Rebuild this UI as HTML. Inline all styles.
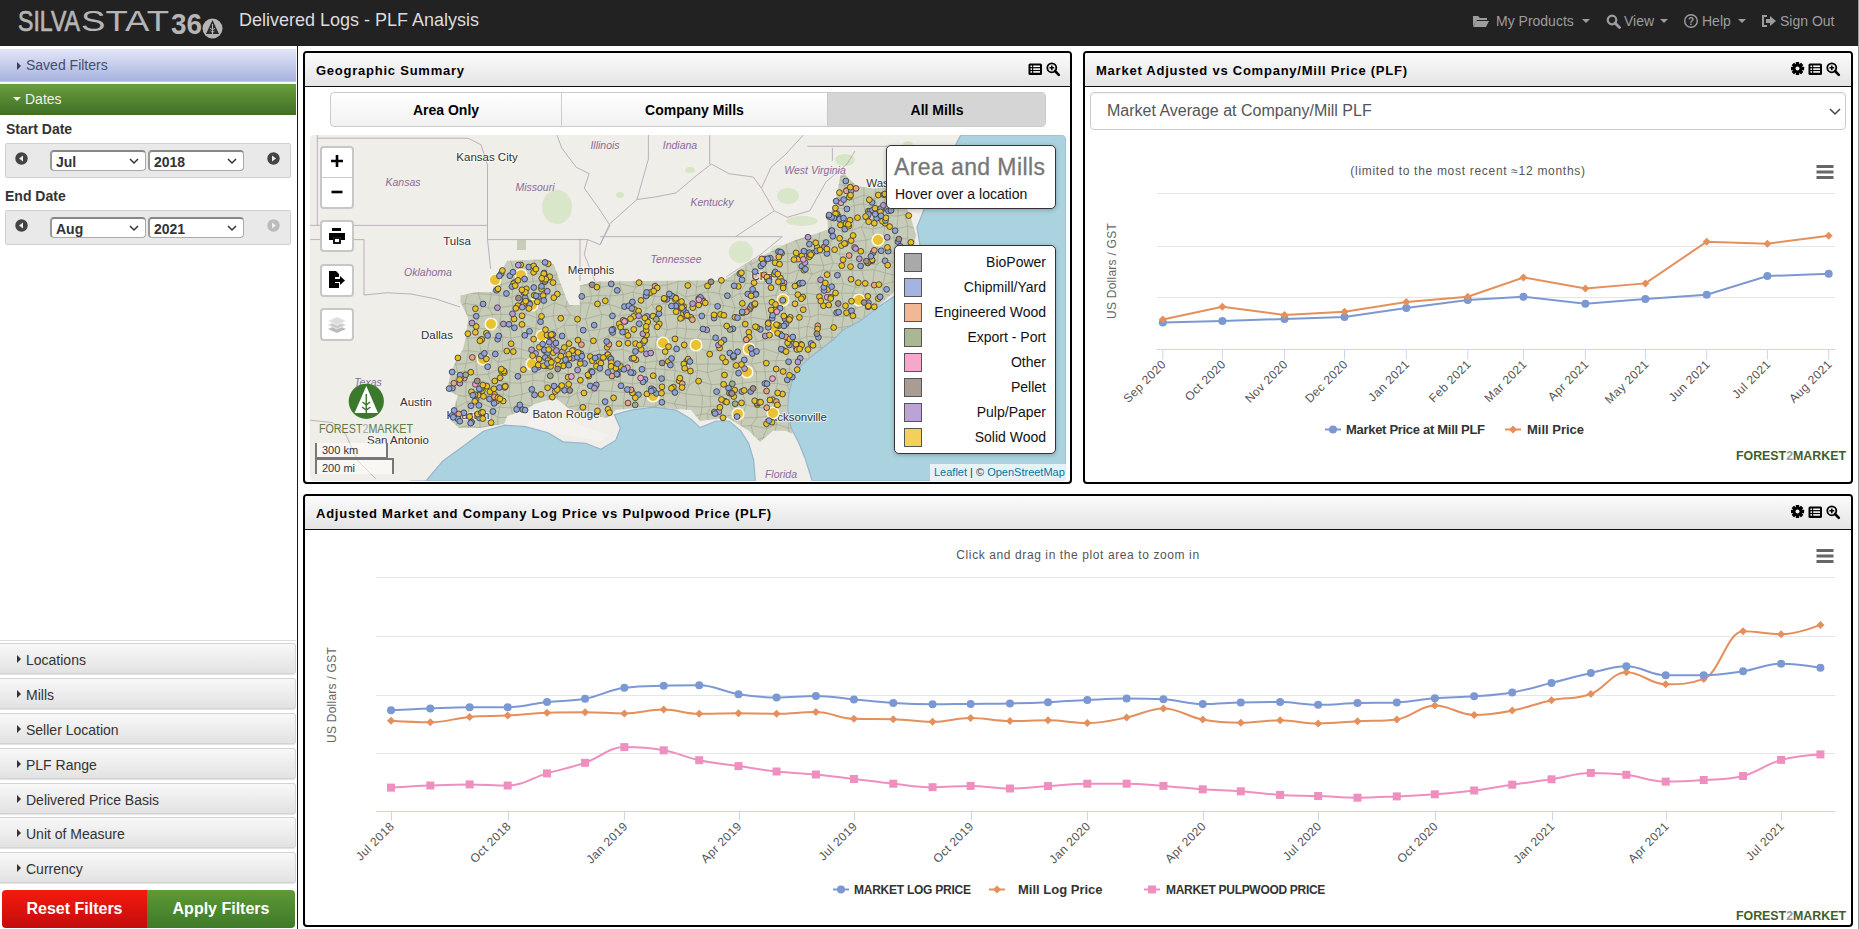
<!DOCTYPE html><html><head><meta charset="utf-8"><style>
*{box-sizing:border-box}
html,body{margin:0;padding:0;width:1859px;height:929px;overflow:hidden;background:#fff;font-family:"Liberation Sans", sans-serif;}
.a{position:absolute}
.nav{left:0;top:0;width:1858px;height:46px;background:#222;}
.rline{left:1858px;top:0;width:1px;height:929px;background:#999}
.navt{color:#9d9d9d;font-size:14px;white-space:nowrap}
.sbp{left:0;width:296px;height:31px;border-radius:0 3px 3px 0;background:linear-gradient(#f8f8f8,#e2e2e2);border:1px solid #d4d4d4;border-left:none;box-shadow:0 1px 1px rgba(0,0,0,.12);font-size:14px;color:#333}
.sbp span{position:absolute;left:26px;top:8px;white-space:nowrap}
.tri{position:absolute;left:17px;top:11px;width:0;height:0;border-top:4px solid transparent;border-bottom:4px solid transparent;border-left:4px solid #333}
.panel{border:2px solid #000;border-radius:4px;background:#fff;overflow:hidden}
.ph{position:absolute;left:0;top:0;right:0;height:34px;background:linear-gradient(#fbfbfb,#e4e4e4);border-bottom:1px solid #111}
.ph span{position:absolute;left:11px;top:10px;font-size:13px;font-weight:bold;letter-spacing:0.76px;color:#000;white-space:nowrap}
.sel{background:#fff;border-radius:4px;border:1px solid #aaa;border-top:2px solid #888;border-left:2px solid #999;font-size:14px;font-weight:bold;color:#333}
</style></head><body>
<div class="a nav"></div><div class="a rline"></div><svg class="a" style="left:0;top:0" width="240" height="46">
<text x="18" y="31" font-family="Liberation Sans" font-size="29" fill="#b5b5b5" stroke="#b5b5b5" stroke-width="0.7" textLength="62" lengthAdjust="spacingAndGlyphs">SILVA</text>
<text x="81" y="31" font-family="Liberation Sans" font-size="29" fill="#b5b5b5" textLength="88" lengthAdjust="spacingAndGlyphs" style="font-weight:normal">STAT</text>
<text x="171" y="34" font-family="Liberation Sans" font-weight="bold" font-size="29" fill="#b5b5b5" textLength="31" lengthAdjust="spacingAndGlyphs">36</text>
<circle cx="212.5" cy="28.5" r="10" fill="#b5b5b5"/>
<path d="M212.5 20 L219 34 L206 34 Z" fill="#2a2a2a"/>
<path d="M212.5 24 V34 M210 28 L212.5 30 L215 28 M210.5 31 L212.5 32.5 L214.5 31" stroke="#b5b5b5" stroke-width="1" fill="none"/>
</svg><div class="a" style="left:239px;top:10px;font-size:18px;color:#dcdcdc;white-space:nowrap">Delivered Logs - PLF Analysis</div><svg class="a" style="left:1472px;top:14px" width="18" height="14"><path d="M1 2 h5 l2 2 h7 v2 H5 L1 12 Z" fill="#9d9d9d"/><path d="M4 7 H17 L14 13 H1 Z" fill="#9d9d9d"/></svg><div class="a navt" style="left:1496px;top:13px">My Products</div><div class="a" style="left:1582px;top:19px;width:0;height:0;border-left:4px solid transparent;border-right:4px solid transparent;border-top:4px solid #9d9d9d"></div><svg class="a" style="left:1606px;top:14px" width="15" height="15"><circle cx="6" cy="6" r="4.3" stroke="#9d9d9d" stroke-width="2.2" fill="none"/><path d="M9 9 L13.5 13.5" stroke="#9d9d9d" stroke-width="2.8" stroke-linecap="round"/></svg><div class="a navt" style="left:1624px;top:13px">View</div><div class="a" style="left:1660px;top:19px;width:0;height:0;border-left:4px solid transparent;border-right:4px solid transparent;border-top:4px solid #9d9d9d"></div><svg class="a" style="left:1683px;top:13px" width="16" height="16"><circle cx="8" cy="8" r="6.3" stroke="#9d9d9d" stroke-width="1.4" fill="none"/><text x="8" y="12" text-anchor="middle" font-family="Liberation Sans" font-weight="bold" font-size="10" fill="#9d9d9d">?</text></svg><div class="a navt" style="left:1702px;top:13px">Help</div><div class="a" style="left:1738px;top:19px;width:0;height:0;border-left:4px solid transparent;border-right:4px solid transparent;border-top:4px solid #9d9d9d"></div><svg class="a" style="left:1761px;top:14px" width="16" height="14"><path d="M6 2 H2 V12 H6" stroke="#9d9d9d" stroke-width="2" fill="none"/><path d="M5 5 H9 V2 L15 7 L9 12 V9 H5 Z" fill="#9d9d9d"/></svg><div class="a navt" style="left:1780px;top:13px">Sign Out</div><div class="a" style="left:297px;top:46px;width:1px;height:883px;background:#1a1a1a"></div><div class="a sbp" style="top:49px;height:32px;border-radius:0;background:linear-gradient(#e3e6f8,#a7b3df);border:none;box-shadow:0 1px 1px rgba(0,0,0,.2)"><div class="tri" style="top:13px;border-left-color:#3a3f5a"></div><span style="color:#474d6a;top:8px">Saved Filters</span></div><div class="a sbp" style="top:84px;height:31px;border-radius:0;background:linear-gradient(#6a9e3c,#3f6f25);border:none;box-shadow:none"><div style="position:absolute;left:13px;top:13px;width:0;height:0;border-left:4px solid transparent;border-right:4px solid transparent;border-top:4px solid #eee"></div><span style="color:#f0f0f0;left:25px;top:7px">Dates</span></div><div class="a" style="left:6px;top:121px;font-size:14px;font-weight:bold;color:#333">Start Date</div><div class="a" style="left:5px;top:188px;font-size:14px;font-weight:bold;color:#333">End Date</div><div class="a" style="left:5px;top:143px;width:286px;height:35px;background:#e9e9e9;border:1px solid #d0d0d0;border-radius:2px"></div><svg class="a" style="left:15px;top:152px" width="14" height="14"><circle cx="6.5" cy="6.5" r="6.2" fill="#444"/><path d="M8 3.5 L4 6.5 L8 9.5 Z" fill="#eee"/></svg><svg class="a" style="left:267px;top:152px" width="14" height="14"><circle cx="6.5" cy="6.5" r="6.2" fill="#444"/><path d="M5 3.5 L9 6.5 L5 9.5 Z" fill="#eee"/></svg><div class="a sel" style="left:50px;top:150px;width:96px;height:21px"><span style="position:absolute;left:4px;top:2px">Jul</span><svg style="position:absolute;right:6px;top:6px" width="10" height="7"><path d="M1 1 L5 5 L9 1" stroke="#333" stroke-width="1.5" fill="none"/></svg></div><div class="a sel" style="left:148px;top:150px;width:96px;height:21px"><span style="position:absolute;left:4px;top:2px">2018</span><svg style="position:absolute;right:6px;top:6px" width="10" height="7"><path d="M1 1 L5 5 L9 1" stroke="#333" stroke-width="1.5" fill="none"/></svg></div><div class="a" style="left:5px;top:210px;width:286px;height:35px;background:#e9e9e9;border:1px solid #d0d0d0;border-radius:2px"></div><svg class="a" style="left:15px;top:219px" width="14" height="14"><circle cx="6.5" cy="6.5" r="6.2" fill="#444"/><path d="M8 3.5 L4 6.5 L8 9.5 Z" fill="#eee"/></svg><svg class="a" style="left:267px;top:219px" width="14" height="14"><circle cx="6.5" cy="6.5" r="6.2" fill="#bbb"/><path d="M5 3.5 L9 6.5 L5 9.5 Z" fill="#eee"/></svg><div class="a sel" style="left:50px;top:217px;width:96px;height:21px"><span style="position:absolute;left:4px;top:2px">Aug</span><svg style="position:absolute;right:6px;top:6px" width="10" height="7"><path d="M1 1 L5 5 L9 1" stroke="#333" stroke-width="1.5" fill="none"/></svg></div><div class="a sel" style="left:148px;top:217px;width:96px;height:21px"><span style="position:absolute;left:4px;top:2px">2021</span><svg style="position:absolute;right:6px;top:6px" width="10" height="7"><path d="M1 1 L5 5 L9 1" stroke="#333" stroke-width="1.5" fill="none"/></svg></div><div class="a" style="left:0;top:640px;width:296px;height:1px;background:#ddd"></div><div class="a sbp" style="top:643px"><div class="tri"></div><span>Locations</span></div><div class="a sbp" style="top:678px"><div class="tri"></div><span>Mills</span></div><div class="a sbp" style="top:713px"><div class="tri"></div><span>Seller Location</span></div><div class="a sbp" style="top:748px"><div class="tri"></div><span>PLF Range</span></div><div class="a sbp" style="top:783px"><div class="tri"></div><span>Delivered Price Basis</span></div><div class="a sbp" style="top:817px"><div class="tri"></div><span>Unit of Measure</span></div><div class="a sbp" style="top:852px"><div class="tri"></div><span>Currency</span></div><div class="a" style="left:2px;top:890px;width:145px;height:38px;border-radius:4px 0 0 4px;background:linear-gradient(#f51a0e,#c20c0c);color:#fff;font-weight:bold;font-size:16px;text-align:center;line-height:38px">Reset Filters</div><div class="a" style="left:147px;top:890px;width:148px;height:38px;border-radius:0 4px 4px 0;background:linear-gradient(#5e9a35,#3e7a28);color:#fff;font-weight:bold;font-size:16px;text-align:center;line-height:38px">Apply Filters</div><div class="a panel" style="left:303px;top:51px;width:769px;height:433px"><div class="ph"><span>Geographic Summary</span></div></div><div class="a panel" style="left:1083px;top:51px;width:770px;height:433px"><div class="ph"><span>Market Adjusted vs Company/Mill Price (PLF)</span></div></div><div class="a panel" style="left:303px;top:494px;width:1550px;height:433px"><div class="ph"><span>Adjusted Market and Company Log Price vs Pulpwood Price (PLF)</span></div></div><svg class="a" style="left:1028px;top:63px" width="15" height="13"><rect x="0.5" y="0.5" width="13.5" height="11.5" rx="1.5" fill="#000"/><rect x="2.5" y="2.5" width="1.6" height="1.6" fill="#fff"/><rect x="2.5" y="5.3" width="1.6" height="1.6" fill="#fff"/><rect x="2.5" y="8.1" width="1.6" height="1.6" fill="#fff"/><rect x="5.2" y="2.5" width="6.8" height="1.6" fill="#fff"/><rect x="5.2" y="5.3" width="6.8" height="1.6" fill="#fff"/><rect x="5.2" y="8.1" width="6.8" height="1.6" fill="#fff"/></svg><svg class="a" style="left:1045.5px;top:62px" width="15" height="15"><circle cx="5.8" cy="5.8" r="4.5" stroke="#000" stroke-width="1.8" fill="none"/><path d="M9 9 L12.8 12.8" stroke="#000" stroke-width="2.6" stroke-linecap="round"/><path d="M5.8 3.4 V8.2 M3.4 5.8 H8.2" stroke="#000" stroke-width="1.5"/></svg><svg class="a" style="left:1791px;top:62px" width="14" height="14"><rect x="4.8" y="-0.09999999999999964" width="3.4" height="4" rx="0.5" transform="rotate(0 6.5 6.5)" fill="#000"/><rect x="4.8" y="-0.09999999999999964" width="3.4" height="4" rx="0.5" transform="rotate(45 6.5 6.5)" fill="#000"/><rect x="4.8" y="-0.09999999999999964" width="3.4" height="4" rx="0.5" transform="rotate(90 6.5 6.5)" fill="#000"/><rect x="4.8" y="-0.09999999999999964" width="3.4" height="4" rx="0.5" transform="rotate(135 6.5 6.5)" fill="#000"/><rect x="4.8" y="-0.09999999999999964" width="3.4" height="4" rx="0.5" transform="rotate(180 6.5 6.5)" fill="#000"/><rect x="4.8" y="-0.09999999999999964" width="3.4" height="4" rx="0.5" transform="rotate(225 6.5 6.5)" fill="#000"/><rect x="4.8" y="-0.09999999999999964" width="3.4" height="4" rx="0.5" transform="rotate(270 6.5 6.5)" fill="#000"/><rect x="4.8" y="-0.09999999999999964" width="3.4" height="4" rx="0.5" transform="rotate(315 6.5 6.5)" fill="#000"/><circle cx="6.5" cy="6.5" r="4.7" fill="#000"/><circle cx="6.5" cy="6.5" r="2" fill="#f2f2f2"/></svg><svg class="a" style="left:1808px;top:63px" width="15" height="13"><rect x="0.5" y="0.5" width="13.5" height="11.5" rx="1.5" fill="#000"/><rect x="2.5" y="2.5" width="1.6" height="1.6" fill="#fff"/><rect x="2.5" y="5.3" width="1.6" height="1.6" fill="#fff"/><rect x="2.5" y="8.1" width="1.6" height="1.6" fill="#fff"/><rect x="5.2" y="2.5" width="6.8" height="1.6" fill="#fff"/><rect x="5.2" y="5.3" width="6.8" height="1.6" fill="#fff"/><rect x="5.2" y="8.1" width="6.8" height="1.6" fill="#fff"/></svg><svg class="a" style="left:1825.5px;top:62px" width="15" height="15"><circle cx="5.8" cy="5.8" r="4.5" stroke="#000" stroke-width="1.8" fill="none"/><path d="M9 9 L12.8 12.8" stroke="#000" stroke-width="2.6" stroke-linecap="round"/><path d="M5.8 3.4 V8.2 M3.4 5.8 H8.2" stroke="#000" stroke-width="1.5"/></svg><svg class="a" style="left:1791px;top:505px" width="14" height="14"><rect x="4.8" y="-0.09999999999999964" width="3.4" height="4" rx="0.5" transform="rotate(0 6.5 6.5)" fill="#000"/><rect x="4.8" y="-0.09999999999999964" width="3.4" height="4" rx="0.5" transform="rotate(45 6.5 6.5)" fill="#000"/><rect x="4.8" y="-0.09999999999999964" width="3.4" height="4" rx="0.5" transform="rotate(90 6.5 6.5)" fill="#000"/><rect x="4.8" y="-0.09999999999999964" width="3.4" height="4" rx="0.5" transform="rotate(135 6.5 6.5)" fill="#000"/><rect x="4.8" y="-0.09999999999999964" width="3.4" height="4" rx="0.5" transform="rotate(180 6.5 6.5)" fill="#000"/><rect x="4.8" y="-0.09999999999999964" width="3.4" height="4" rx="0.5" transform="rotate(225 6.5 6.5)" fill="#000"/><rect x="4.8" y="-0.09999999999999964" width="3.4" height="4" rx="0.5" transform="rotate(270 6.5 6.5)" fill="#000"/><rect x="4.8" y="-0.09999999999999964" width="3.4" height="4" rx="0.5" transform="rotate(315 6.5 6.5)" fill="#000"/><circle cx="6.5" cy="6.5" r="4.7" fill="#000"/><circle cx="6.5" cy="6.5" r="2" fill="#f2f2f2"/></svg><svg class="a" style="left:1808px;top:506px" width="15" height="13"><rect x="0.5" y="0.5" width="13.5" height="11.5" rx="1.5" fill="#000"/><rect x="2.5" y="2.5" width="1.6" height="1.6" fill="#fff"/><rect x="2.5" y="5.3" width="1.6" height="1.6" fill="#fff"/><rect x="2.5" y="8.1" width="1.6" height="1.6" fill="#fff"/><rect x="5.2" y="2.5" width="6.8" height="1.6" fill="#fff"/><rect x="5.2" y="5.3" width="6.8" height="1.6" fill="#fff"/><rect x="5.2" y="8.1" width="6.8" height="1.6" fill="#fff"/></svg><svg class="a" style="left:1825.5px;top:505px" width="15" height="15"><circle cx="5.8" cy="5.8" r="4.5" stroke="#000" stroke-width="1.8" fill="none"/><path d="M9 9 L12.8 12.8" stroke="#000" stroke-width="2.6" stroke-linecap="round"/><path d="M5.8 3.4 V8.2 M3.4 5.8 H8.2" stroke="#000" stroke-width="1.5"/></svg><div class="a" style="left:330px;top:92px;width:716px;height:35px;border:1px solid #ccc;border-radius:4px;overflow:hidden;background:linear-gradient(#fff,#f1f1f1)"><div class="a" style="left:230px;top:0;width:1px;height:35px;background:#ccc"></div><div class="a" style="left:496px;top:0;width:220px;height:35px;background:#d5d5d5;border-left:1px solid #c8c8c8"></div><div class="a" style="left:0;top:9px;width:230px;text-align:center;font-size:14px;font-weight:bold;color:#000">Area Only</div><div class="a" style="left:231px;top:9px;width:265px;text-align:center;font-size:14px;font-weight:bold;color:#000">Company Mills</div><div class="a" style="left:496px;top:9px;width:220px;text-align:center;font-size:14px;font-weight:bold;color:#000">All Mills</div></div><div class="a" style="left:1090px;top:92px;width:756px;height:38px;border:1px solid #ccc;border-radius:4px;background:#fff;box-shadow:inset 0 1px 1px rgba(0,0,0,.06)"><div class="a" style="left:16px;top:9px;font-size:16px;color:#555;white-space:nowrap">Market Average at Company/Mill PLF</div><svg class="a" style="left:738px;top:15px" width="12" height="8"><path d="M1 1 L6 6 L11 1" stroke="#444" stroke-width="1.5" fill="none"/></svg></div><svg class="a" style="left:310px;top:135px;border-radius:4px" width="756" height="346"><defs><clipPath id="mc"><rect x="0" y="0" width="756" height="346" rx="4"/></clipPath><clipPath id="gc"><path d="M 150.5 160.8 L 166.0 156.9 L 181.6 156.9 L 186.8 143.9 L 197.1 125.8 L 230.9 124.5 L 243.8 129.6 L 249.0 143.9 L 256.8 164.7 L 259.4 169.9 L 269.8 169.9 L 269.8 150.4 L 285.3 146.5 L 412.8 145.2 L 420.3 141.5 L 440.7 126.6 L 478.0 108.0 L 490.0 103.6 L 507.5 98.3 L 518.3 94.2 L 517.0 83.4 L 525.0 70.0 L 530.4 40.4 L 534.4 39.0 L 546.5 51.0 L 565.4 53.8 L 576.0 51.0 L 590.0 62.0 L 600.0 80.0 L 606.0 100.0 L 600.0 130.0 L 592.0 150.0 L 571.0 168.5 L 548.7 187.0 L 533.0 195.0 L 523.3 204.8 L 503.8 219.4 L 490.8 230.8 L 482.7 243.8 L 478.6 260.0 L 477.8 273.0 L 481.0 292.6 L 482.7 299.0 L 476.0 295.8 L 463.0 295.8 L 450.0 307.0 L 438.8 295.8 L 417.6 282.8 L 390.0 286.0 L 381.0 275.0 L 336.0 272.0 L 305.8 275.0 L 298.0 282.7 L 283.0 281.0 L 260.6 275.0 L 245.6 263.0 L 224.5 269.0 L 215.4 275.0 L 197.4 281.0 L 194.0 288.7 L 170.0 293.0 L 149.2 293.0 L 140.0 285.0 L 147.9 260.6 L 137.5 255.5 L 140.1 239.9 L 145.3 226.9 L 153.0 214.0 L 155.6 203.6 L 158.2 182.8 L 150.5 167.3 Z"/></clipPath></defs><g clip-path="url(#mc)"><rect width="756" height="346" fill="#f0eee8"/><ellipse cx="535" cy="25" rx="10" ry="6" fill="#d3e3c0" opacity="0.9"/><ellipse cx="598" cy="12" rx="6" ry="6" fill="#d3e3c0" opacity="0.9"/><ellipse cx="380" cy="35" rx="5" ry="3" fill="#d3e3c0" opacity="0.9"/><ellipse cx="310" cy="60" rx="4" ry="3" fill="#d3e3c0" opacity="0.9"/><ellipse cx="247" cy="72" rx="15" ry="17" fill="#d3e3c0" opacity="0.8"/><ellipse cx="478" cy="61" rx="11" ry="8" fill="#d3e3c0" opacity="0.8"/><ellipse cx="431" cy="117" rx="12" ry="11" fill="#d3e3c0" opacity="0.8"/><ellipse cx="492" cy="86" rx="16" ry="5" fill="#d3e3c0" opacity="0.8"/><ellipse cx="470" cy="115" rx="10" ry="5" fill="#d3e3c0" opacity="0.8"/><path d="M 7.3 0 V 90.4" stroke="#b7a8b8" stroke-width="0.9" fill="none"/><path d="M 7.3 3.2 H 158 L 171 9.7 L 177.5 29.9 V 104.6 L 180.7 134" stroke="#b7a8b8" stroke-width="0.9" fill="none"/><path d="M 0 90.4 H 177.5" stroke="#b7a8b8" stroke-width="0.9" fill="none"/><path d="M 0 104.6 H 54 V 160" stroke="#b7a8b8" stroke-width="0.9" fill="none"/><path d="M 177.5 104.6 H 277.6 L 274.3 119.4 L 285 146" stroke="#b7a8b8" stroke-width="0.9" fill="none"/><path d="M 246.9 0 L 251.7 12.9 L 266.3 32.3 L 279.2 38.7 L 274.3 53.3 L 287.2 71 L 300 90.4 L 290 109.7 L 277.6 104.6" stroke="#b7a8b8" stroke-width="0.9" fill="none"/><path d="M 338.4 0 V 24 L 327 64.5 L 299.7 88.8 L 290 109.7" stroke="#b7a8b8" stroke-width="0.9" fill="none"/><path d="M 399.7 0 V 29" stroke="#b7a8b8" stroke-width="0.9" fill="none"/><path d="M 327 64.5 L 345 62 L 365.8 58 L 386.8 40.3 L 401.3 29 L 419 38.7 L 443.3 42 L 451.4 53.2 L 461 32.3 L 475.6 19.4 L 493.3 0" stroke="#b7a8b8" stroke-width="0.9" fill="none"/><path d="M 451.4 53.2 L 464.3 75.8 L 477.2 82.3 L 499.8 75.8 L 516 46.8 L 537 29 L 545 16" stroke="#b7a8b8" stroke-width="0.9" fill="none"/><path d="M 290 101.7 H 472.3" stroke="#b7a8b8" stroke-width="0.9" fill="none"/><path d="M 425.5 101.7 L 464.3 75.8" stroke="#b7a8b8" stroke-width="0.9" fill="none"/><path d="M 472.3 101.7 L 450 120 L 416 142" stroke="#b7a8b8" stroke-width="0.9" fill="none"/><path d="M 497.4 11.3 H 640" stroke="#b7a8b8" stroke-width="0.9" fill="none"/><path d="M 522.4 13 V 25.8" stroke="#b7a8b8" stroke-width="0.9" fill="none"/><path d="M 0 285.2 L 22.7 287.6 L 35.8 299.5 L 47.8 325.8 L 65.7 343.7" stroke="#b7a8b8" stroke-width="0.9" fill="none"/><path d="M 54 160 Q 100 152 150 172" stroke="#b7a8b8" stroke-width="0.9" fill="none"/><path d="M 412 145 V 283" stroke="#b7a8b8" stroke-width="0.9" fill="none"/><path d="M 337 146 V 272" stroke="#b7a8b8" stroke-width="0.9" fill="none"/><path d="M 270 104 V 146" stroke="#b7a8b8" stroke-width="0.9" fill="none"/><path d="M 150.5 160.8 L 166.0 156.9 L 181.6 156.9 L 186.8 143.9 L 197.1 125.8 L 230.9 124.5 L 243.8 129.6 L 249.0 143.9 L 256.8 164.7 L 259.4 169.9 L 269.8 169.9 L 269.8 150.4 L 285.3 146.5 L 412.8 145.2 L 420.3 141.5 L 440.7 126.6 L 478.0 108.0 L 490.0 103.6 L 507.5 98.3 L 518.3 94.2 L 517.0 83.4 L 525.0 70.0 L 530.4 40.4 L 534.4 39.0 L 546.5 51.0 L 565.4 53.8 L 576.0 51.0 L 590.0 62.0 L 600.0 80.0 L 606.0 100.0 L 600.0 130.0 L 592.0 150.0 L 571.0 168.5 L 548.7 187.0 L 533.0 195.0 L 523.3 204.8 L 503.8 219.4 L 490.8 230.8 L 482.7 243.8 L 478.6 260.0 L 477.8 273.0 L 481.0 292.6 L 482.7 299.0 L 476.0 295.8 L 463.0 295.8 L 450.0 307.0 L 438.8 295.8 L 417.6 282.8 L 390.0 286.0 L 381.0 275.0 L 336.0 272.0 L 305.8 275.0 L 298.0 282.7 L 283.0 281.0 L 260.6 275.0 L 245.6 263.0 L 224.5 269.0 L 215.4 275.0 L 197.4 281.0 L 194.0 288.7 L 170.0 293.0 L 149.2 293.0 L 140.0 285.0 L 147.9 260.6 L 137.5 255.5 L 140.1 239.9 L 145.3 226.9 L 153.0 214.0 L 155.6 203.6 L 158.2 182.8 L 150.5 167.3 Z" fill="#c6ccb8"/><g clip-path="url(#gc)" stroke="#a2a893" stroke-width="0.7" fill="none"><path d="M 125.9 29.7 L 137.7 30.4 L 144.5 30.4 L 155.7 30.4 L 172.2 31.3 L 181.7 28.6 L 191.9 24.8 L 200.1 26.8 L 212.3 31.3 L 222.7 27.6 L 233.8 24.6 L 246.9 30.1 L 256.2 25.3 L 269.7 30.2 L 281.2 24.5 L 290.7 25.5 L 301.2 27.2 L 314.4 25.3 L 322.4 26.8 L 331.4 25.9 L 345.2 27.9 L 354.6 29.6 L 369.9 28.8 L 376.5 26.4 L 386.7 27.4 L 402.9 28.4 L 409.7 26.5 L 423.6 29.9 L 430.5 26.7 L 440.7 25.3 L 453.4 27.4 L 465.0 27.6 L 475.0 29.2 L 488.0 29.8 L 500.6 27.2 L 506.5 27.8 L 519.4 26.9 L 533.4 25.6 L 544.2 31.4 L 551.2 24.6 L 568.5 28.9 L 577.8 26.6 L 586.7 29.4 L 600.3 27.8 L 607.6 26.3 L 617.7 26.6 L 629.5 28.4 L 645.2 25.5"/><path d="M 127.1 42.1 L 132.6 41.0 L 145.6 38.7 L 161.1 38.8 L 169.8 38.0 L 176.8 37.3 L 188.3 38.2 L 202.8 37.9 L 212.0 37.7 L 226.3 37.1 L 235.6 41.3 L 245.1 35.6 L 258.3 39.4 L 270.1 40.5 L 280.9 38.0 L 288.2 41.9 L 304.0 37.6 L 313.8 37.3 L 320.2 36.0 L 335.4 40.6 L 342.3 36.9 L 355.2 36.7 L 367.3 36.7 L 380.3 39.0 L 392.0 38.3 L 399.2 39.5 L 410.8 39.7 L 421.8 42.1 L 434.9 42.1 L 443.3 35.6 L 458.1 39.7 L 467.2 41.9 L 478.4 37.4 L 486.9 37.2 L 498.8 40.3 L 512.7 42.2 L 521.1 36.6 L 529.1 42.4 L 541.8 39.3 L 552.9 40.6 L 564.9 38.7 L 577.6 36.3 L 587.0 38.3 L 599.7 41.4 L 607.3 35.7 L 618.1 37.0 L 628.6 42.1 L 639.2 35.7"/><path d="M 126.7 53.0 L 135.1 50.5 L 150.5 52.5 L 159.3 51.5 L 171.8 46.5 L 179.7 52.9 L 188.0 46.9 L 201.2 47.5 L 212.8 48.5 L 221.3 48.7 L 236.6 47.2 L 246.1 50.6 L 258.5 49.1 L 271.0 53.2 L 275.6 48.3 L 293.1 46.7 L 301.4 52.3 L 310.6 46.5 L 324.5 49.4 L 331.2 53.5 L 348.3 52.5 L 359.2 52.8 L 366.5 49.6 L 376.9 50.0 L 387.3 50.8 L 398.5 46.8 L 412.0 47.4 L 421.6 50.5 L 432.0 48.2 L 445.2 48.9 L 456.8 53.0 L 467.4 48.0 L 473.5 50.6 L 487.1 53.4 L 497.4 50.7 L 511.3 51.3 L 520.2 47.0 L 535.0 51.1 L 543.3 48.5 L 553.7 51.0 L 565.9 50.8 L 576.3 48.9 L 587.6 48.4 L 598.1 50.6 L 607.3 48.9 L 616.7 49.7 L 631.1 47.7 L 641.0 46.7"/><path d="M 121.7 60.8 L 132.6 57.8 L 150.3 60.7 L 159.6 58.7 L 166.3 61.5 L 182.7 61.3 L 191.5 62.7 L 204.3 62.0 L 214.6 62.5 L 221.1 62.9 L 235.2 58.7 L 243.8 60.2 L 259.7 59.0 L 268.9 64.3 L 278.7 60.2 L 287.8 60.5 L 298.5 60.0 L 313.8 61.1 L 325.6 57.9 L 331.4 58.7 L 343.2 63.3 L 357.3 59.0 L 369.3 59.1 L 380.4 61.5 L 388.6 61.8 L 398.3 60.7 L 410.6 61.4 L 425.4 59.8 L 431.6 61.9 L 442.1 59.7 L 451.7 63.7 L 469.4 58.8 L 479.0 61.6 L 485.8 63.8 L 496.9 59.0 L 510.7 64.5 L 522.1 63.6 L 528.9 62.4 L 543.2 64.3 L 554.1 60.0 L 564.9 63.8 L 575.8 59.5 L 588.3 60.5 L 597.7 59.2 L 608.7 61.2 L 621.9 58.0 L 634.4 61.8 L 639.6 64.1"/><path d="M 128.1 73.0 L 133.8 75.2 L 146.9 73.6 L 160.0 72.6 L 169.8 69.5 L 176.6 73.9 L 193.6 69.4 L 204.1 71.5 L 210.6 70.2 L 226.2 70.7 L 236.5 71.6 L 244.7 68.7 L 255.6 70.4 L 265.2 69.2 L 279.1 68.9 L 288.4 73.8 L 301.0 72.5 L 314.8 71.8 L 321.6 69.8 L 331.1 71.6 L 346.1 71.2 L 355.3 71.7 L 365.6 74.2 L 377.7 73.1 L 388.7 70.5 L 397.3 69.1 L 408.9 69.2 L 423.5 75.2 L 432.9 69.3 L 443.9 70.0 L 452.2 69.9 L 466.6 73.0 L 480.4 70.1 L 490.7 73.3 L 499.3 71.5 L 512.0 71.7 L 523.8 72.7 L 535.4 74.0 L 544.4 70.4 L 553.4 68.8 L 567.7 74.0 L 573.0 71.5 L 588.4 70.9 L 600.1 74.9 L 612.4 69.3 L 619.9 69.4 L 629.0 74.4 L 640.3 73.5"/><path d="M 127.8 80.3 L 133.9 84.8 L 146.9 81.5 L 159.2 82.4 L 169.9 85.7 L 179.5 83.5 L 190.5 81.7 L 204.5 83.1 L 214.2 86.1 L 221.4 80.1 L 238.1 85.1 L 244.7 82.2 L 257.9 85.8 L 265.0 80.9 L 277.0 86.3 L 289.1 84.9 L 299.0 82.7 L 309.6 81.0 L 326.1 85.0 L 334.8 85.5 L 346.0 81.1 L 355.4 79.7 L 364.0 83.3 L 378.8 82.3 L 385.7 85.2 L 398.2 82.1 L 414.0 79.6 L 419.1 84.9 L 433.2 81.4 L 446.5 82.9 L 456.7 84.8 L 464.5 85.7 L 478.6 82.5 L 486.4 84.6 L 501.8 80.5 L 510.0 86.1 L 520.2 83.4 L 533.5 82.6 L 544.3 83.8 L 557.2 84.6 L 566.6 84.5 L 574.2 80.7 L 588.0 80.9 L 594.7 79.7 L 606.4 85.8 L 622.0 85.8 L 631.9 83.9 L 640.0 79.6"/><path d="M 124.8 92.2 L 139.0 97.1 L 146.3 91.5 L 158.9 95.9 L 168.1 93.5 L 181.5 94.9 L 191.7 93.9 L 202.6 94.5 L 214.0 93.5 L 222.2 91.1 L 232.3 92.7 L 245.8 95.4 L 254.7 94.9 L 267.1 93.7 L 278.6 93.8 L 287.6 94.1 L 297.9 91.1 L 310.3 97.1 L 325.8 94.0 L 331.6 95.4 L 343.4 90.6 L 355.7 95.9 L 365.0 95.2 L 377.5 91.4 L 390.1 92.2 L 403.2 93.9 L 411.0 92.6 L 423.1 94.3 L 430.5 96.0 L 441.0 91.1 L 455.8 93.8 L 466.8 95.5 L 477.6 92.6 L 490.8 94.7 L 501.9 92.3 L 510.4 94.7 L 521.4 91.7 L 532.9 97.0 L 542.1 95.2 L 551.2 91.9 L 562.9 93.9 L 574.8 91.4 L 586.9 93.9 L 597.8 91.1 L 607.5 94.3 L 622.6 94.2 L 633.6 92.7 L 638.5 91.4"/><path d="M 125.3 105.5 L 134.9 104.0 L 146.1 108.4 L 159.0 106.5 L 167.1 103.5 L 179.9 107.9 L 194.1 104.1 L 203.7 104.3 L 216.3 101.5 L 223.5 105.5 L 237.9 104.7 L 245.3 108.4 L 258.9 103.1 L 269.3 106.7 L 276.1 103.5 L 293.3 106.4 L 299.9 102.5 L 309.9 102.1 L 320.2 104.4 L 331.2 105.6 L 346.1 105.6 L 357.4 107.5 L 367.7 102.2 L 377.6 107.7 L 389.0 105.6 L 402.4 106.7 L 407.7 103.4 L 424.0 107.5 L 430.2 104.6 L 446.7 105.5 L 456.6 104.5 L 463.5 107.3 L 475.1 105.3 L 486.0 105.8 L 497.9 102.2 L 508.7 106.1 L 521.3 105.0 L 532.0 102.0 L 542.1 107.0 L 556.0 105.1 L 563.4 102.9 L 572.7 108.3 L 583.6 102.4 L 597.6 103.9 L 607.6 107.8 L 617.5 106.5 L 629.4 105.5 L 645.2 104.7"/><path d="M 121.6 114.0 L 136.2 117.9 L 150.2 116.9 L 154.7 113.6 L 172.3 115.2 L 179.2 115.2 L 187.9 117.4 L 199.2 112.7 L 209.9 118.0 L 222.2 112.9 L 234.5 115.6 L 248.2 119.0 L 253.9 116.5 L 265.1 115.3 L 282.2 117.3 L 287.1 113.3 L 304.3 114.3 L 311.0 113.1 L 321.1 112.7 L 332.3 115.0 L 346.7 116.0 L 357.3 117.8 L 368.6 115.4 L 376.6 115.1 L 389.0 118.8 L 400.6 114.8 L 408.6 115.3 L 419.5 115.9 L 434.9 116.3 L 442.5 117.5 L 452.9 114.0 L 464.5 116.8 L 477.8 118.9 L 491.2 116.6 L 497.7 119.4 L 509.9 119.1 L 518.9 115.6 L 529.5 119.2 L 542.2 118.3 L 555.7 117.8 L 568.2 114.1 L 572.9 118.8 L 586.7 117.9 L 596.2 117.9 L 612.0 116.5 L 617.0 117.9 L 628.9 117.4 L 640.2 112.8"/><path d="M 123.5 129.9 L 133.3 128.7 L 147.0 125.9 L 157.6 128.1 L 172.2 129.9 L 182.5 124.9 L 188.6 127.9 L 199.9 123.8 L 212.4 123.8 L 225.4 123.8 L 236.9 130.1 L 247.3 128.2 L 259.3 129.7 L 268.3 126.1 L 279.1 123.9 L 291.0 126.1 L 299.4 129.0 L 311.5 127.9 L 323.5 125.5 L 330.9 128.5 L 344.5 125.6 L 358.6 129.9 L 365.7 129.5 L 378.7 127.6 L 391.0 125.6 L 399.2 125.7 L 413.9 124.1 L 422.8 128.4 L 435.6 125.7 L 440.8 129.7 L 452.3 123.8 L 467.7 125.8 L 477.7 127.0 L 485.5 124.9 L 498.0 129.4 L 513.5 130.5 L 523.4 128.0 L 533.5 130.0 L 541.6 124.7 L 551.5 129.3 L 567.2 129.3 L 575.4 124.3 L 589.2 129.4 L 598.6 130.0 L 606.2 126.1 L 618.6 129.7 L 630.8 124.9 L 643.0 125.7"/><path d="M 126.9 135.6 L 138.1 140.5 L 144.1 136.4 L 156.0 139.3 L 169.7 136.3 L 178.6 140.3 L 191.0 140.9 L 204.7 137.9 L 213.3 141.4 L 221.9 136.5 L 235.2 141.3 L 246.3 140.1 L 258.6 137.4 L 265.3 138.7 L 278.2 139.9 L 289.1 137.8 L 302.7 136.3 L 313.1 135.7 L 320.3 138.1 L 331.4 139.8 L 346.6 137.1 L 358.1 137.4 L 369.0 136.7 L 375.7 137.6 L 387.9 138.8 L 400.9 140.5 L 410.0 139.4 L 425.2 140.1 L 436.1 134.8 L 447.1 139.2 L 458.2 141.2 L 464.4 136.8 L 478.1 138.9 L 488.9 134.8 L 502.3 139.4 L 513.2 134.8 L 519.8 136.2 L 529.5 135.2 L 541.8 135.4 L 551.9 135.5 L 564.3 134.7 L 575.5 138.1 L 589.1 141.3 L 595.9 137.2 L 610.4 138.5 L 618.5 139.7 L 628.4 135.6 L 639.8 137.6"/><path d="M 127.1 146.5 L 132.8 152.1 L 149.0 151.6 L 158.9 145.8 L 172.4 149.0 L 177.0 151.4 L 191.4 149.8 L 203.8 145.5 L 213.1 148.0 L 223.1 146.2 L 235.7 146.2 L 245.0 149.7 L 256.5 149.2 L 267.1 150.3 L 278.5 149.7 L 290.6 152.3 L 303.3 149.9 L 309.5 148.9 L 326.0 152.1 L 332.9 149.6 L 345.7 150.8 L 357.1 150.1 L 368.2 146.4 L 379.6 145.8 L 386.6 152.0 L 402.0 147.6 L 411.9 145.6 L 424.3 146.0 L 435.8 148.5 L 440.9 148.5 L 453.9 148.4 L 469.3 150.1 L 476.4 147.4 L 484.5 148.1 L 496.8 148.5 L 507.0 147.9 L 521.9 149.4 L 533.3 148.5 L 545.6 152.5 L 555.7 151.2 L 562.7 150.0 L 572.9 149.3 L 584.9 146.6 L 598.8 150.9 L 607.5 148.3 L 620.0 147.2 L 631.5 151.9 L 643.5 147.9"/><path d="M 125.8 157.4 L 133.1 158.9 L 146.0 162.0 L 157.8 158.1 L 168.4 158.7 L 181.4 159.5 L 189.3 160.4 L 201.8 162.7 L 210.2 157.0 L 223.4 158.7 L 237.2 159.4 L 247.3 160.2 L 259.8 158.6 L 268.0 163.2 L 281.8 161.0 L 288.2 160.5 L 300.2 160.9 L 313.3 159.6 L 322.8 157.2 L 335.0 159.9 L 344.6 161.3 L 358.7 161.5 L 367.1 157.1 L 375.3 161.8 L 385.8 160.0 L 397.5 156.6 L 409.1 158.5 L 421.5 162.9 L 429.5 158.3 L 446.4 160.7 L 453.5 162.0 L 465.8 160.4 L 478.3 159.2 L 486.3 160.0 L 496.7 158.2 L 512.3 160.4 L 519.6 159.8 L 531.7 158.1 L 542.4 158.2 L 552.6 159.2 L 566.5 159.0 L 572.6 158.6 L 584.5 162.0 L 597.5 157.8 L 605.9 159.3 L 619.9 159.5 L 633.1 162.4 L 642.4 157.8"/><path d="M 121.5 173.6 L 136.8 173.9 L 148.9 172.4 L 154.9 168.4 L 172.4 170.9 L 178.5 173.0 L 189.3 172.8 L 202.8 170.5 L 215.8 170.9 L 225.8 171.4 L 231.9 174.3 L 244.5 168.0 L 255.5 171.7 L 271.1 168.0 L 280.0 167.8 L 288.3 171.3 L 299.2 169.3 L 312.5 173.9 L 324.9 168.3 L 336.6 173.9 L 341.9 169.3 L 355.6 168.8 L 368.0 173.9 L 380.8 168.0 L 387.4 171.2 L 400.6 169.1 L 413.8 170.6 L 425.1 172.8 L 436.4 172.5 L 442.0 169.1 L 454.9 168.7 L 467.1 169.3 L 473.8 168.7 L 485.0 171.4 L 497.8 168.7 L 508.3 168.2 L 520.3 171.9 L 533.8 173.0 L 545.7 173.5 L 555.6 169.6 L 565.7 168.6 L 577.5 173.4 L 584.8 169.7 L 597.2 171.5 L 611.3 170.2 L 617.6 171.3 L 631.5 173.1 L 642.4 167.8"/><path d="M 123.0 180.0 L 134.9 185.0 L 148.1 183.8 L 156.7 179.8 L 167.5 181.8 L 182.9 179.5 L 191.1 179.4 L 201.8 179.2 L 216.1 178.9 L 226.8 183.1 L 231.7 182.5 L 243.1 181.0 L 260.3 179.8 L 269.8 183.5 L 275.7 183.9 L 291.6 179.4 L 303.6 181.6 L 309.5 180.4 L 323.3 179.1 L 332.5 180.8 L 347.4 179.5 L 354.8 180.3 L 368.0 178.8 L 375.1 182.9 L 385.8 180.1 L 396.5 180.6 L 409.3 181.9 L 420.8 183.9 L 434.7 184.2 L 440.9 182.2 L 457.7 185.0 L 463.0 179.3 L 476.0 183.3 L 489.2 180.7 L 500.3 182.2 L 508.3 179.4 L 523.6 181.1 L 533.6 181.5 L 541.2 180.6 L 553.6 185.4 L 566.1 184.0 L 573.7 181.3 L 584.5 184.9 L 601.3 183.1 L 608.8 179.7 L 620.2 183.4 L 629.8 181.1 L 645.0 185.0"/><path d="M 128.4 195.6 L 136.3 191.7 L 146.0 194.4 L 155.9 189.7 L 166.4 193.9 L 179.8 193.3 L 189.1 192.1 L 199.6 190.6 L 211.2 189.9 L 225.8 193.5 L 234.9 195.7 L 246.6 194.8 L 253.7 190.3 L 266.6 190.3 L 278.4 195.6 L 289.9 194.4 L 303.8 190.7 L 312.0 193.3 L 326.4 193.3 L 336.6 190.4 L 341.9 189.6 L 357.3 194.9 L 367.1 192.8 L 376.5 194.1 L 392.4 195.0 L 398.1 190.9 L 410.9 190.5 L 422.2 194.2 L 429.5 191.6 L 441.8 192.6 L 451.8 192.7 L 466.6 193.7 L 478.1 192.9 L 488.6 193.2 L 497.5 191.3 L 507.5 194.7 L 521.3 193.4 L 531.9 192.3 L 543.0 190.4 L 551.4 196.1 L 567.0 193.4 L 579.1 191.7 L 585.0 191.1 L 600.4 195.3 L 610.5 192.4 L 618.9 193.8 L 633.8 191.3 L 642.5 192.8"/><path d="M 123.5 207.2 L 134.7 201.7 L 145.5 203.9 L 157.8 203.2 L 168.6 202.6 L 180.0 202.8 L 192.7 201.8 L 201.1 203.2 L 212.3 200.9 L 223.6 206.2 L 234.2 202.0 L 247.5 202.6 L 257.4 204.7 L 267.9 203.0 L 281.3 206.9 L 286.6 205.9 L 298.5 200.9 L 314.8 204.4 L 322.6 202.4 L 333.4 203.4 L 346.9 201.2 L 353.8 204.2 L 366.6 201.6 L 374.7 203.7 L 387.0 203.7 L 401.2 204.6 L 412.2 205.5 L 423.0 206.6 L 432.8 206.9 L 446.8 206.8 L 453.0 205.0 L 469.3 204.8 L 479.2 202.8 L 490.0 204.5 L 496.5 201.3 L 507.9 201.7 L 522.2 202.2 L 531.8 202.8 L 541.0 203.3 L 556.7 207.5 L 565.5 200.5 L 573.3 202.2 L 587.7 205.4 L 597.5 204.0 L 608.2 205.9 L 617.9 204.2 L 631.9 204.5 L 641.3 205.7"/><path d="M 125.3 216.2 L 133.0 212.5 L 148.9 216.3 L 158.8 215.6 L 171.0 217.3 L 177.6 215.6 L 192.5 216.1 L 204.7 212.6 L 211.3 214.4 L 225.1 218.2 L 233.4 212.9 L 249.0 213.4 L 254.8 212.8 L 269.7 217.9 L 278.1 218.5 L 289.4 215.0 L 302.7 215.4 L 313.1 214.4 L 323.4 218.3 L 337.3 212.4 L 344.7 214.6 L 358.4 214.1 L 365.4 214.6 L 375.6 213.8 L 385.7 212.4 L 398.5 216.6 L 410.8 215.3 L 423.5 218.3 L 435.9 212.5 L 443.9 217.0 L 454.0 213.6 L 468.5 218.4 L 476.0 216.8 L 489.0 215.4 L 498.6 212.0 L 510.8 212.4 L 519.2 218.0 L 531.8 218.2 L 540.3 212.5 L 552.2 212.9 L 563.4 214.3 L 578.6 213.9 L 583.8 215.6 L 600.3 216.6 L 607.6 212.0 L 618.2 217.0 L 627.9 215.5 L 642.5 216.5"/><path d="M 122.9 229.1 L 137.3 229.5 L 145.6 229.1 L 156.2 228.8 L 165.6 226.2 L 182.2 223.0 L 188.1 227.2 L 200.3 224.4 L 211.6 222.9 L 225.6 227.4 L 235.4 225.0 L 247.5 223.0 L 257.7 227.0 L 267.2 224.5 L 280.8 228.7 L 290.8 228.1 L 297.6 222.8 L 314.0 228.4 L 322.5 224.0 L 335.1 227.8 L 347.1 225.8 L 353.2 226.7 L 364.0 227.2 L 379.4 226.1 L 386.8 229.4 L 397.9 228.9 L 412.9 229.2 L 422.0 226.0 L 436.4 226.4 L 441.4 229.1 L 453.6 226.8 L 466.0 225.5 L 478.3 225.5 L 490.3 223.2 L 499.2 224.3 L 512.3 227.1 L 518.5 227.3 L 534.1 223.4 L 543.7 224.6 L 553.6 223.7 L 562.0 223.0 L 577.2 229.1 L 587.2 226.4 L 597.3 223.8 L 610.0 227.7 L 617.8 224.5 L 633.1 228.7 L 641.6 225.3"/><path d="M 126.3 240.3 L 133.6 233.8 L 148.0 237.6 L 154.5 236.3 L 167.4 240.0 L 178.1 239.2 L 188.1 234.4 L 199.6 235.5 L 209.8 240.3 L 222.4 239.2 L 236.8 235.2 L 247.8 238.2 L 258.3 238.6 L 268.0 238.4 L 276.5 239.0 L 286.9 237.0 L 303.3 237.0 L 310.6 234.3 L 323.1 239.9 L 335.6 233.5 L 345.2 233.7 L 355.0 234.5 L 365.2 235.5 L 380.5 239.4 L 387.7 235.2 L 397.3 237.6 L 411.8 233.8 L 423.1 237.4 L 431.6 234.1 L 446.6 236.9 L 455.0 236.9 L 465.8 236.1 L 479.7 233.7 L 485.3 239.6 L 500.9 235.4 L 512.6 238.6 L 519.3 236.9 L 533.2 239.2 L 545.9 240.2 L 557.0 237.5 L 568.2 238.3 L 576.9 234.9 L 587.1 239.1 L 599.6 235.5 L 605.9 235.9 L 617.0 235.6 L 630.4 239.8 L 643.6 234.8"/><path d="M 127.8 246.6 L 139.4 248.2 L 143.6 248.3 L 156.4 247.4 L 171.0 246.2 L 182.0 249.1 L 191.7 246.2 L 200.1 247.9 L 210.8 248.1 L 223.2 245.4 L 234.0 246.2 L 249.2 250.8 L 253.9 247.9 L 270.0 248.5 L 278.5 251.3 L 286.8 247.2 L 303.6 244.8 L 310.3 247.0 L 322.2 248.9 L 337.1 246.7 L 347.1 249.9 L 354.5 244.5 L 364.1 246.6 L 378.8 250.4 L 386.0 245.3 L 401.4 249.6 L 411.0 249.1 L 418.8 251.2 L 432.5 248.1 L 446.7 246.6 L 456.3 247.8 L 467.8 248.5 L 477.3 250.5 L 490.3 244.6 L 501.5 251.1 L 511.6 246.4 L 520.7 246.2 L 530.9 250.7 L 544.2 246.4 L 556.4 247.9 L 565.4 249.3 L 575.9 246.8 L 589.3 250.5 L 596.4 246.3 L 611.7 248.1 L 620.3 246.1 L 627.8 250.8 L 640.9 246.2"/><path d="M 124.0 256.7 L 135.3 257.2 L 145.3 260.2 L 155.3 261.3 L 167.4 256.6 L 176.7 260.6 L 193.6 258.9 L 198.7 262.0 L 212.3 259.2 L 221.0 256.7 L 238.4 261.4 L 247.3 261.4 L 259.3 262.2 L 266.6 257.9 L 282.5 257.0 L 288.9 255.6 L 301.6 256.3 L 314.7 257.4 L 325.9 257.8 L 336.5 260.1 L 345.9 261.3 L 353.5 258.5 L 370.0 257.5 L 375.7 258.8 L 392.5 260.7 L 399.9 261.6 L 409.8 260.3 L 420.7 259.0 L 432.7 257.7 L 447.4 257.8 L 458.1 258.6 L 463.4 262.2 L 479.7 256.9 L 490.8 259.8 L 502.0 257.1 L 509.5 258.2 L 518.7 262.2 L 535.1 256.0 L 544.8 257.9 L 554.0 262.2 L 567.6 259.9 L 575.9 259.8 L 585.8 255.8 L 599.3 260.0 L 608.4 256.4 L 617.3 261.8 L 632.3 261.2 L 639.9 261.5"/><path d="M 122.5 267.0 L 136.7 272.3 L 146.7 272.2 L 157.1 266.8 L 172.4 268.6 L 183.4 273.5 L 189.8 272.1 L 201.1 273.1 L 210.1 268.7 L 222.3 271.2 L 237.4 270.8 L 247.7 270.8 L 255.7 272.5 L 270.4 270.1 L 278.4 268.4 L 288.6 269.7 L 302.5 270.8 L 312.9 271.0 L 325.2 270.2 L 333.4 272.4 L 345.8 271.5 L 353.2 266.5 L 364.2 268.9 L 376.7 270.9 L 391.9 272.3 L 400.9 271.3 L 410.1 270.8 L 418.8 267.8 L 436.1 269.8 L 447.0 272.4 L 457.0 273.0 L 466.2 271.7 L 479.2 270.2 L 490.5 271.4 L 502.0 269.8 L 509.2 272.9 L 517.8 267.5 L 532.9 269.2 L 545.6 269.5 L 551.4 268.1 L 564.5 269.2 L 579.3 271.3 L 586.8 266.7 L 601.1 270.6 L 607.5 270.6 L 618.7 268.0 L 630.6 270.6 L 640.7 271.7"/><path d="M 123.6 281.7 L 135.7 280.5 L 148.0 283.1 L 158.8 278.2 L 169.8 280.8 L 181.4 277.8 L 187.7 282.6 L 203.3 282.2 L 210.3 281.3 L 222.5 277.9 L 234.3 278.5 L 244.0 281.1 L 258.0 284.0 L 264.9 280.4 L 278.8 279.5 L 291.1 284.0 L 301.8 279.1 L 315.2 278.3 L 320.5 277.9 L 335.2 279.9 L 347.5 281.8 L 356.3 284.2 L 370.1 278.1 L 375.3 283.7 L 391.0 279.3 L 397.1 278.8 L 411.8 282.2 L 425.0 279.4 L 431.7 282.9 L 447.0 282.6 L 455.9 281.6 L 466.3 281.6 L 480.0 279.8 L 487.1 278.3 L 501.7 280.7 L 509.6 283.1 L 522.7 280.1 L 531.8 281.3 L 544.3 282.8 L 556.5 281.6 L 568.3 284.2 L 576.1 283.2 L 588.0 280.9 L 597.9 283.7 L 611.9 282.1 L 619.3 283.4 L 633.3 279.1 L 638.8 284.0"/><path d="M 121.5 293.2 L 132.9 294.9 L 145.9 293.0 L 158.3 290.9 L 170.0 292.7 L 182.4 290.0 L 187.9 289.6 L 201.8 295.1 L 215.9 292.7 L 225.8 292.4 L 237.3 291.9 L 248.8 290.2 L 255.1 293.4 L 266.2 293.2 L 280.2 289.4 L 289.1 292.2 L 304.1 289.3 L 313.9 290.9 L 326.1 291.8 L 335.6 292.0 L 341.6 294.7 L 358.3 290.8 L 365.9 290.0 L 377.1 294.0 L 386.7 290.4 L 399.8 292.3 L 414.0 293.5 L 420.6 294.2 L 431.2 291.5 L 441.0 290.5 L 457.0 293.5 L 466.5 289.3 L 478.2 293.0 L 489.9 293.5 L 499.3 290.3 L 510.9 289.1 L 518.9 293.9 L 534.5 292.9 L 544.4 293.8 L 556.0 295.5 L 562.6 294.2 L 576.0 289.9 L 588.7 294.3 L 595.5 292.6 L 612.3 291.4 L 621.7 294.8 L 628.8 293.8 L 641.8 293.7"/><path d="M 123.9 301.7 L 132.7 303.0 L 148.7 305.3 L 158.6 306.2 L 170.7 300.3 L 181.0 306.2 L 194.2 304.3 L 199.3 304.2 L 215.5 301.0 L 220.7 299.9 L 231.8 300.7 L 249.3 303.3 L 259.4 302.8 L 265.0 301.4 L 276.7 302.7 L 291.5 306.1 L 297.9 304.3 L 309.2 303.9 L 322.6 305.9 L 335.5 303.8 L 348.4 300.9 L 359.0 300.1 L 368.3 302.7 L 381.1 306.1 L 386.0 300.7 L 397.2 304.7 L 412.5 304.4 L 420.2 304.2 L 430.2 301.2 L 445.1 305.9 L 452.9 302.4 L 463.4 304.6 L 480.4 301.9 L 487.8 301.4 L 500.8 302.1 L 508.0 303.5 L 524.4 301.0 L 534.7 301.2 L 541.9 300.6 L 555.9 303.8 L 566.0 301.9 L 577.2 301.4 L 588.6 304.4 L 601.4 301.8 L 606.0 301.9 L 620.3 301.8 L 633.6 301.1 L 639.2 303.7"/><path d="M 127.2 313.9 L 138.4 311.4 L 146.0 316.4 L 160.2 313.4 L 170.8 312.6 L 181.5 311.4 L 189.1 311.3 L 200.5 315.2 L 209.6 314.3 L 221.4 313.0 L 232.2 315.5 L 245.3 310.5 L 254.2 311.9 L 265.2 313.8 L 276.0 313.2 L 293.1 317.4 L 298.1 311.0 L 314.4 314.6 L 323.5 314.0 L 336.1 311.6 L 342.0 312.9 L 353.6 310.5 L 364.2 316.5 L 377.2 316.5 L 390.5 313.9 L 398.9 313.8 L 409.1 314.8 L 422.5 316.8 L 436.5 314.8 L 445.3 310.8 L 452.6 310.6 L 464.9 311.4 L 476.2 311.4 L 487.0 317.1 L 501.7 315.5 L 512.0 312.1 L 522.4 313.3 L 534.1 313.2 L 542.1 317.2 L 555.8 314.2 L 566.4 312.4 L 574.0 313.2 L 585.8 315.6 L 595.6 311.3 L 608.1 310.9 L 620.0 310.9 L 631.3 314.1 L 644.2 312.5"/><path d="M 123.7 324.9 L 137.6 328.1 L 149.6 326.3 L 160.2 326.0 L 169.2 323.9 L 178.5 327.9 L 194.3 326.2 L 203.6 322.6 L 212.9 325.5 L 226.5 328.1 L 237.8 322.9 L 245.2 322.7 L 254.6 322.1 L 271.4 325.3 L 281.8 327.7 L 288.6 322.7 L 300.7 326.0 L 308.8 328.3 L 321.5 326.7 L 334.0 321.5 L 342.2 324.1 L 352.9 325.7 L 365.8 326.3 L 381.5 322.4 L 385.6 323.6 L 400.2 327.4 L 411.8 321.9 L 421.8 323.8 L 433.2 326.2 L 442.9 323.9 L 456.3 323.8 L 468.2 326.7 L 478.3 322.0 L 487.7 323.0 L 498.5 321.7 L 508.2 324.1 L 524.5 325.7 L 529.8 327.1 L 539.8 323.5 L 552.0 323.8 L 566.7 325.4 L 575.9 321.7 L 588.0 323.0 L 594.7 326.6 L 606.1 327.9 L 621.3 327.4 L 629.7 327.4 L 639.2 324.2"/><path d="M 126.4 332.9 L 136.9 338.0 L 150.3 339.2 L 157.1 333.5 L 167.6 336.2 L 177.5 336.8 L 193.2 333.5 L 199.9 332.7 L 212.1 336.9 L 224.8 334.1 L 237.1 334.8 L 247.1 338.8 L 254.6 336.8 L 267.2 339.0 L 276.9 332.6 L 293.0 333.0 L 303.7 337.5 L 311.2 337.0 L 321.3 335.8 L 336.0 337.9 L 342.1 334.0 L 357.8 335.8 L 366.7 338.6 L 379.7 337.6 L 391.4 338.5 L 398.6 336.4 L 412.8 334.1 L 420.3 335.0 L 434.2 336.1 L 441.7 334.1 L 453.3 332.7 L 467.8 335.2 L 479.4 333.5 L 491.4 339.3 L 497.4 335.4 L 509.7 335.4 L 523.8 337.1 L 532.5 334.1 L 541.7 335.6 L 557.0 336.2 L 565.6 332.9 L 575.0 339.2 L 589.6 335.8 L 597.4 338.2 L 611.8 333.4 L 622.9 338.3 L 629.5 338.0 L 643.9 337.8"/><path d="M 128.3 343.7 L 133.2 346.5 L 147.1 347.2 L 158.7 347.4 L 168.8 346.0 L 179.4 344.6 L 191.9 346.0 L 200.1 344.0 L 214.6 349.9 L 223.5 346.0 L 236.3 349.5 L 248.9 347.8 L 254.2 348.8 L 265.1 346.0 L 281.3 350.2 L 289.6 348.7 L 298.0 348.0 L 313.6 345.3 L 324.8 347.7 L 336.4 343.8 L 341.5 346.5 L 358.1 346.7 L 363.9 345.1 L 377.7 345.4 L 390.6 348.6 L 400.7 348.1 L 410.9 347.2 L 418.5 344.3 L 432.1 344.5 L 444.1 346.1 L 451.7 348.2 L 463.4 348.8 L 474.8 350.1 L 485.7 344.9 L 498.1 347.6 L 513.0 347.8 L 518.4 346.6 L 534.8 346.9 L 545.6 344.7 L 550.7 348.0 L 567.8 350.2 L 576.1 346.1 L 587.2 344.9 L 600.3 343.7 L 606.1 350.4 L 621.0 349.1 L 630.4 344.5 L 638.9 345.8"/><path d="M 125.9 29.7 L 127.1 42.1 L 126.7 53.0 L 121.7 60.8 L 128.1 73.0 L 127.8 80.3 L 124.8 92.2 L 125.3 105.5 L 121.6 114.0 L 123.5 129.9 L 126.9 135.6 L 127.1 146.5 L 125.8 157.4 L 121.5 173.6 L 123.0 180.0 L 128.4 195.6 L 123.5 207.2 L 125.3 216.2 L 122.9 229.1 L 126.3 240.3 L 127.8 246.6 L 124.0 256.7 L 122.5 267.0 L 123.6 281.7 L 121.5 293.2 L 123.9 301.7 L 127.2 313.9 L 123.7 324.9 L 126.4 332.9 L 128.3 343.7"/><path d="M 137.7 30.4 L 132.6 41.0 L 135.1 50.5 L 132.6 57.8 L 133.8 75.2 L 133.9 84.8 L 139.0 97.1 L 134.9 104.0 L 136.2 117.9 L 133.3 128.7 L 138.1 140.5 L 132.8 152.1 L 133.1 158.9 L 136.8 173.9 L 134.9 185.0 L 136.3 191.7 L 134.7 201.7 L 133.0 212.5 L 137.3 229.5 L 133.6 233.8 L 139.4 248.2 L 135.3 257.2 L 136.7 272.3 L 135.7 280.5 L 132.9 294.9 L 132.7 303.0 L 138.4 311.4 L 137.6 328.1 L 136.9 338.0 L 133.2 346.5"/><path d="M 144.5 30.4 L 145.6 38.7 L 150.5 52.5 L 150.3 60.7 L 146.9 73.6 L 146.9 81.5 L 146.3 91.5 L 146.1 108.4 L 150.2 116.9 L 147.0 125.9 L 144.1 136.4 L 149.0 151.6 L 146.0 162.0 L 148.9 172.4 L 148.1 183.8 L 146.0 194.4 L 145.5 203.9 L 148.9 216.3 L 145.6 229.1 L 148.0 237.6 L 143.6 248.3 L 145.3 260.2 L 146.7 272.2 L 148.0 283.1 L 145.9 293.0 L 148.7 305.3 L 146.0 316.4 L 149.6 326.3 L 150.3 339.2 L 147.1 347.2"/><path d="M 155.7 30.4 L 161.1 38.8 L 159.3 51.5 L 159.6 58.7 L 160.0 72.6 L 159.2 82.4 L 158.9 95.9 L 159.0 106.5 L 154.7 113.6 L 157.6 128.1 L 156.0 139.3 L 158.9 145.8 L 157.8 158.1 L 154.9 168.4 L 156.7 179.8 L 155.9 189.7 L 157.8 203.2 L 158.8 215.6 L 156.2 228.8 L 154.5 236.3 L 156.4 247.4 L 155.3 261.3 L 157.1 266.8 L 158.8 278.2 L 158.3 290.9 L 158.6 306.2 L 160.2 313.4 L 160.2 326.0 L 157.1 333.5 L 158.7 347.4"/><path d="M 172.2 31.3 L 169.8 38.0 L 171.8 46.5 L 166.3 61.5 L 169.8 69.5 L 169.9 85.7 L 168.1 93.5 L 167.1 103.5 L 172.3 115.2 L 172.2 129.9 L 169.7 136.3 L 172.4 149.0 L 168.4 158.7 L 172.4 170.9 L 167.5 181.8 L 166.4 193.9 L 168.6 202.6 L 171.0 217.3 L 165.6 226.2 L 167.4 240.0 L 171.0 246.2 L 167.4 256.6 L 172.4 268.6 L 169.8 280.8 L 170.0 292.7 L 170.7 300.3 L 170.8 312.6 L 169.2 323.9 L 167.6 336.2 L 168.8 346.0"/><path d="M 181.7 28.6 L 176.8 37.3 L 179.7 52.9 L 182.7 61.3 L 176.6 73.9 L 179.5 83.5 L 181.5 94.9 L 179.9 107.9 L 179.2 115.2 L 182.5 124.9 L 178.6 140.3 L 177.0 151.4 L 181.4 159.5 L 178.5 173.0 L 182.9 179.5 L 179.8 193.3 L 180.0 202.8 L 177.6 215.6 L 182.2 223.0 L 178.1 239.2 L 182.0 249.1 L 176.7 260.6 L 183.4 273.5 L 181.4 277.8 L 182.4 290.0 L 181.0 306.2 L 181.5 311.4 L 178.5 327.9 L 177.5 336.8 L 179.4 344.6"/><path d="M 191.9 24.8 L 188.3 38.2 L 188.0 46.9 L 191.5 62.7 L 193.6 69.4 L 190.5 81.7 L 191.7 93.9 L 194.1 104.1 L 187.9 117.4 L 188.6 127.9 L 191.0 140.9 L 191.4 149.8 L 189.3 160.4 L 189.3 172.8 L 191.1 179.4 L 189.1 192.1 L 192.7 201.8 L 192.5 216.1 L 188.1 227.2 L 188.1 234.4 L 191.7 246.2 L 193.6 258.9 L 189.8 272.1 L 187.7 282.6 L 187.9 289.6 L 194.2 304.3 L 189.1 311.3 L 194.3 326.2 L 193.2 333.5 L 191.9 346.0"/><path d="M 200.1 26.8 L 202.8 37.9 L 201.2 47.5 L 204.3 62.0 L 204.1 71.5 L 204.5 83.1 L 202.6 94.5 L 203.7 104.3 L 199.2 112.7 L 199.9 123.8 L 204.7 137.9 L 203.8 145.5 L 201.8 162.7 L 202.8 170.5 L 201.8 179.2 L 199.6 190.6 L 201.1 203.2 L 204.7 212.6 L 200.3 224.4 L 199.6 235.5 L 200.1 247.9 L 198.7 262.0 L 201.1 273.1 L 203.3 282.2 L 201.8 295.1 L 199.3 304.2 L 200.5 315.2 L 203.6 322.6 L 199.9 332.7 L 200.1 344.0"/><path d="M 212.3 31.3 L 212.0 37.7 L 212.8 48.5 L 214.6 62.5 L 210.6 70.2 L 214.2 86.1 L 214.0 93.5 L 216.3 101.5 L 209.9 118.0 L 212.4 123.8 L 213.3 141.4 L 213.1 148.0 L 210.2 157.0 L 215.8 170.9 L 216.1 178.9 L 211.2 189.9 L 212.3 200.9 L 211.3 214.4 L 211.6 222.9 L 209.8 240.3 L 210.8 248.1 L 212.3 259.2 L 210.1 268.7 L 210.3 281.3 L 215.9 292.7 L 215.5 301.0 L 209.6 314.3 L 212.9 325.5 L 212.1 336.9 L 214.6 349.9"/><path d="M 222.7 27.6 L 226.3 37.1 L 221.3 48.7 L 221.1 62.9 L 226.2 70.7 L 221.4 80.1 L 222.2 91.1 L 223.5 105.5 L 222.2 112.9 L 225.4 123.8 L 221.9 136.5 L 223.1 146.2 L 223.4 158.7 L 225.8 171.4 L 226.8 183.1 L 225.8 193.5 L 223.6 206.2 L 225.1 218.2 L 225.6 227.4 L 222.4 239.2 L 223.2 245.4 L 221.0 256.7 L 222.3 271.2 L 222.5 277.9 L 225.8 292.4 L 220.7 299.9 L 221.4 313.0 L 226.5 328.1 L 224.8 334.1 L 223.5 346.0"/><path d="M 233.8 24.6 L 235.6 41.3 L 236.6 47.2 L 235.2 58.7 L 236.5 71.6 L 238.1 85.1 L 232.3 92.7 L 237.9 104.7 L 234.5 115.6 L 236.9 130.1 L 235.2 141.3 L 235.7 146.2 L 237.2 159.4 L 231.9 174.3 L 231.7 182.5 L 234.9 195.7 L 234.2 202.0 L 233.4 212.9 L 235.4 225.0 L 236.8 235.2 L 234.0 246.2 L 238.4 261.4 L 237.4 270.8 L 234.3 278.5 L 237.3 291.9 L 231.8 300.7 L 232.2 315.5 L 237.8 322.9 L 237.1 334.8 L 236.3 349.5"/><path d="M 246.9 30.1 L 245.1 35.6 L 246.1 50.6 L 243.8 60.2 L 244.7 68.7 L 244.7 82.2 L 245.8 95.4 L 245.3 108.4 L 248.2 119.0 L 247.3 128.2 L 246.3 140.1 L 245.0 149.7 L 247.3 160.2 L 244.5 168.0 L 243.1 181.0 L 246.6 194.8 L 247.5 202.6 L 249.0 213.4 L 247.5 223.0 L 247.8 238.2 L 249.2 250.8 L 247.3 261.4 L 247.7 270.8 L 244.0 281.1 L 248.8 290.2 L 249.3 303.3 L 245.3 310.5 L 245.2 322.7 L 247.1 338.8 L 248.9 347.8"/><path d="M 256.2 25.3 L 258.3 39.4 L 258.5 49.1 L 259.7 59.0 L 255.6 70.4 L 257.9 85.8 L 254.7 94.9 L 258.9 103.1 L 253.9 116.5 L 259.3 129.7 L 258.6 137.4 L 256.5 149.2 L 259.8 158.6 L 255.5 171.7 L 260.3 179.8 L 253.7 190.3 L 257.4 204.7 L 254.8 212.8 L 257.7 227.0 L 258.3 238.6 L 253.9 247.9 L 259.3 262.2 L 255.7 272.5 L 258.0 284.0 L 255.1 293.4 L 259.4 302.8 L 254.2 311.9 L 254.6 322.1 L 254.6 336.8 L 254.2 348.8"/><path d="M 269.7 30.2 L 270.1 40.5 L 271.0 53.2 L 268.9 64.3 L 265.2 69.2 L 265.0 80.9 L 267.1 93.7 L 269.3 106.7 L 265.1 115.3 L 268.3 126.1 L 265.3 138.7 L 267.1 150.3 L 268.0 163.2 L 271.1 168.0 L 269.8 183.5 L 266.6 190.3 L 267.9 203.0 L 269.7 217.9 L 267.2 224.5 L 268.0 238.4 L 270.0 248.5 L 266.6 257.9 L 270.4 270.1 L 264.9 280.4 L 266.2 293.2 L 265.0 301.4 L 265.2 313.8 L 271.4 325.3 L 267.2 339.0 L 265.1 346.0"/><path d="M 281.2 24.5 L 280.9 38.0 L 275.6 48.3 L 278.7 60.2 L 279.1 68.9 L 277.0 86.3 L 278.6 93.8 L 276.1 103.5 L 282.2 117.3 L 279.1 123.9 L 278.2 139.9 L 278.5 149.7 L 281.8 161.0 L 280.0 167.8 L 275.7 183.9 L 278.4 195.6 L 281.3 206.9 L 278.1 218.5 L 280.8 228.7 L 276.5 239.0 L 278.5 251.3 L 282.5 257.0 L 278.4 268.4 L 278.8 279.5 L 280.2 289.4 L 276.7 302.7 L 276.0 313.2 L 281.8 327.7 L 276.9 332.6 L 281.3 350.2"/><path d="M 290.7 25.5 L 288.2 41.9 L 293.1 46.7 L 287.8 60.5 L 288.4 73.8 L 289.1 84.9 L 287.6 94.1 L 293.3 106.4 L 287.1 113.3 L 291.0 126.1 L 289.1 137.8 L 290.6 152.3 L 288.2 160.5 L 288.3 171.3 L 291.6 179.4 L 289.9 194.4 L 286.6 205.9 L 289.4 215.0 L 290.8 228.1 L 286.9 237.0 L 286.8 247.2 L 288.9 255.6 L 288.6 269.7 L 291.1 284.0 L 289.1 292.2 L 291.5 306.1 L 293.1 317.4 L 288.6 322.7 L 293.0 333.0 L 289.6 348.7"/><path d="M 301.2 27.2 L 304.0 37.6 L 301.4 52.3 L 298.5 60.0 L 301.0 72.5 L 299.0 82.7 L 297.9 91.1 L 299.9 102.5 L 304.3 114.3 L 299.4 129.0 L 302.7 136.3 L 303.3 149.9 L 300.2 160.9 L 299.2 169.3 L 303.6 181.6 L 303.8 190.7 L 298.5 200.9 L 302.7 215.4 L 297.6 222.8 L 303.3 237.0 L 303.6 244.8 L 301.6 256.3 L 302.5 270.8 L 301.8 279.1 L 304.1 289.3 L 297.9 304.3 L 298.1 311.0 L 300.7 326.0 L 303.7 337.5 L 298.0 348.0"/><path d="M 314.4 25.3 L 313.8 37.3 L 310.6 46.5 L 313.8 61.1 L 314.8 71.8 L 309.6 81.0 L 310.3 97.1 L 309.9 102.1 L 311.0 113.1 L 311.5 127.9 L 313.1 135.7 L 309.5 148.9 L 313.3 159.6 L 312.5 173.9 L 309.5 180.4 L 312.0 193.3 L 314.8 204.4 L 313.1 214.4 L 314.0 228.4 L 310.6 234.3 L 310.3 247.0 L 314.7 257.4 L 312.9 271.0 L 315.2 278.3 L 313.9 290.9 L 309.2 303.9 L 314.4 314.6 L 308.8 328.3 L 311.2 337.0 L 313.6 345.3"/><path d="M 322.4 26.8 L 320.2 36.0 L 324.5 49.4 L 325.6 57.9 L 321.6 69.8 L 326.1 85.0 L 325.8 94.0 L 320.2 104.4 L 321.1 112.7 L 323.5 125.5 L 320.3 138.1 L 326.0 152.1 L 322.8 157.2 L 324.9 168.3 L 323.3 179.1 L 326.4 193.3 L 322.6 202.4 L 323.4 218.3 L 322.5 224.0 L 323.1 239.9 L 322.2 248.9 L 325.9 257.8 L 325.2 270.2 L 320.5 277.9 L 326.1 291.8 L 322.6 305.9 L 323.5 314.0 L 321.5 326.7 L 321.3 335.8 L 324.8 347.7"/><path d="M 331.4 25.9 L 335.4 40.6 L 331.2 53.5 L 331.4 58.7 L 331.1 71.6 L 334.8 85.5 L 331.6 95.4 L 331.2 105.6 L 332.3 115.0 L 330.9 128.5 L 331.4 139.8 L 332.9 149.6 L 335.0 159.9 L 336.6 173.9 L 332.5 180.8 L 336.6 190.4 L 333.4 203.4 L 337.3 212.4 L 335.1 227.8 L 335.6 233.5 L 337.1 246.7 L 336.5 260.1 L 333.4 272.4 L 335.2 279.9 L 335.6 292.0 L 335.5 303.8 L 336.1 311.6 L 334.0 321.5 L 336.0 337.9 L 336.4 343.8"/><path d="M 345.2 27.9 L 342.3 36.9 L 348.3 52.5 L 343.2 63.3 L 346.1 71.2 L 346.0 81.1 L 343.4 90.6 L 346.1 105.6 L 346.7 116.0 L 344.5 125.6 L 346.6 137.1 L 345.7 150.8 L 344.6 161.3 L 341.9 169.3 L 347.4 179.5 L 341.9 189.6 L 346.9 201.2 L 344.7 214.6 L 347.1 225.8 L 345.2 233.7 L 347.1 249.9 L 345.9 261.3 L 345.8 271.5 L 347.5 281.8 L 341.6 294.7 L 348.4 300.9 L 342.0 312.9 L 342.2 324.1 L 342.1 334.0 L 341.5 346.5"/><path d="M 354.6 29.6 L 355.2 36.7 L 359.2 52.8 L 357.3 59.0 L 355.3 71.7 L 355.4 79.7 L 355.7 95.9 L 357.4 107.5 L 357.3 117.8 L 358.6 129.9 L 358.1 137.4 L 357.1 150.1 L 358.7 161.5 L 355.6 168.8 L 354.8 180.3 L 357.3 194.9 L 353.8 204.2 L 358.4 214.1 L 353.2 226.7 L 355.0 234.5 L 354.5 244.5 L 353.5 258.5 L 353.2 266.5 L 356.3 284.2 L 358.3 290.8 L 359.0 300.1 L 353.6 310.5 L 352.9 325.7 L 357.8 335.8 L 358.1 346.7"/><path d="M 369.9 28.8 L 367.3 36.7 L 366.5 49.6 L 369.3 59.1 L 365.6 74.2 L 364.0 83.3 L 365.0 95.2 L 367.7 102.2 L 368.6 115.4 L 365.7 129.5 L 369.0 136.7 L 368.2 146.4 L 367.1 157.1 L 368.0 173.9 L 368.0 178.8 L 367.1 192.8 L 366.6 201.6 L 365.4 214.6 L 364.0 227.2 L 365.2 235.5 L 364.1 246.6 L 370.0 257.5 L 364.2 268.9 L 370.1 278.1 L 365.9 290.0 L 368.3 302.7 L 364.2 316.5 L 365.8 326.3 L 366.7 338.6 L 363.9 345.1"/><path d="M 376.5 26.4 L 380.3 39.0 L 376.9 50.0 L 380.4 61.5 L 377.7 73.1 L 378.8 82.3 L 377.5 91.4 L 377.6 107.7 L 376.6 115.1 L 378.7 127.6 L 375.7 137.6 L 379.6 145.8 L 375.3 161.8 L 380.8 168.0 L 375.1 182.9 L 376.5 194.1 L 374.7 203.7 L 375.6 213.8 L 379.4 226.1 L 380.5 239.4 L 378.8 250.4 L 375.7 258.8 L 376.7 270.9 L 375.3 283.7 L 377.1 294.0 L 381.1 306.1 L 377.2 316.5 L 381.5 322.4 L 379.7 337.6 L 377.7 345.4"/><path d="M 386.7 27.4 L 392.0 38.3 L 387.3 50.8 L 388.6 61.8 L 388.7 70.5 L 385.7 85.2 L 390.1 92.2 L 389.0 105.6 L 389.0 118.8 L 391.0 125.6 L 387.9 138.8 L 386.6 152.0 L 385.8 160.0 L 387.4 171.2 L 385.8 180.1 L 392.4 195.0 L 387.0 203.7 L 385.7 212.4 L 386.8 229.4 L 387.7 235.2 L 386.0 245.3 L 392.5 260.7 L 391.9 272.3 L 391.0 279.3 L 386.7 290.4 L 386.0 300.7 L 390.5 313.9 L 385.6 323.6 L 391.4 338.5 L 390.6 348.6"/><path d="M 402.9 28.4 L 399.2 39.5 L 398.5 46.8 L 398.3 60.7 L 397.3 69.1 L 398.2 82.1 L 403.2 93.9 L 402.4 106.7 L 400.6 114.8 L 399.2 125.7 L 400.9 140.5 L 402.0 147.6 L 397.5 156.6 L 400.6 169.1 L 396.5 180.6 L 398.1 190.9 L 401.2 204.6 L 398.5 216.6 L 397.9 228.9 L 397.3 237.6 L 401.4 249.6 L 399.9 261.6 L 400.9 271.3 L 397.1 278.8 L 399.8 292.3 L 397.2 304.7 L 398.9 313.8 L 400.2 327.4 L 398.6 336.4 L 400.7 348.1"/><path d="M 409.7 26.5 L 410.8 39.7 L 412.0 47.4 L 410.6 61.4 L 408.9 69.2 L 414.0 79.6 L 411.0 92.6 L 407.7 103.4 L 408.6 115.3 L 413.9 124.1 L 410.0 139.4 L 411.9 145.6 L 409.1 158.5 L 413.8 170.6 L 409.3 181.9 L 410.9 190.5 L 412.2 205.5 L 410.8 215.3 L 412.9 229.2 L 411.8 233.8 L 411.0 249.1 L 409.8 260.3 L 410.1 270.8 L 411.8 282.2 L 414.0 293.5 L 412.5 304.4 L 409.1 314.8 L 411.8 321.9 L 412.8 334.1 L 410.9 347.2"/><path d="M 423.6 29.9 L 421.8 42.1 L 421.6 50.5 L 425.4 59.8 L 423.5 75.2 L 419.1 84.9 L 423.1 94.3 L 424.0 107.5 L 419.5 115.9 L 422.8 128.4 L 425.2 140.1 L 424.3 146.0 L 421.5 162.9 L 425.1 172.8 L 420.8 183.9 L 422.2 194.2 L 423.0 206.6 L 423.5 218.3 L 422.0 226.0 L 423.1 237.4 L 418.8 251.2 L 420.7 259.0 L 418.8 267.8 L 425.0 279.4 L 420.6 294.2 L 420.2 304.2 L 422.5 316.8 L 421.8 323.8 L 420.3 335.0 L 418.5 344.3"/><path d="M 430.5 26.7 L 434.9 42.1 L 432.0 48.2 L 431.6 61.9 L 432.9 69.3 L 433.2 81.4 L 430.5 96.0 L 430.2 104.6 L 434.9 116.3 L 435.6 125.7 L 436.1 134.8 L 435.8 148.5 L 429.5 158.3 L 436.4 172.5 L 434.7 184.2 L 429.5 191.6 L 432.8 206.9 L 435.9 212.5 L 436.4 226.4 L 431.6 234.1 L 432.5 248.1 L 432.7 257.7 L 436.1 269.8 L 431.7 282.9 L 431.2 291.5 L 430.2 301.2 L 436.5 314.8 L 433.2 326.2 L 434.2 336.1 L 432.1 344.5"/><path d="M 440.7 25.3 L 443.3 35.6 L 445.2 48.9 L 442.1 59.7 L 443.9 70.0 L 446.5 82.9 L 441.0 91.1 L 446.7 105.5 L 442.5 117.5 L 440.8 129.7 L 447.1 139.2 L 440.9 148.5 L 446.4 160.7 L 442.0 169.1 L 440.9 182.2 L 441.8 192.6 L 446.8 206.8 L 443.9 217.0 L 441.4 229.1 L 446.6 236.9 L 446.7 246.6 L 447.4 257.8 L 447.0 272.4 L 447.0 282.6 L 441.0 290.5 L 445.1 305.9 L 445.3 310.8 L 442.9 323.9 L 441.7 334.1 L 444.1 346.1"/><path d="M 453.4 27.4 L 458.1 39.7 L 456.8 53.0 L 451.7 63.7 L 452.2 69.9 L 456.7 84.8 L 455.8 93.8 L 456.6 104.5 L 452.9 114.0 L 452.3 123.8 L 458.2 141.2 L 453.9 148.4 L 453.5 162.0 L 454.9 168.7 L 457.7 185.0 L 451.8 192.7 L 453.0 205.0 L 454.0 213.6 L 453.6 226.8 L 455.0 236.9 L 456.3 247.8 L 458.1 258.6 L 457.0 273.0 L 455.9 281.6 L 457.0 293.5 L 452.9 302.4 L 452.6 310.6 L 456.3 323.8 L 453.3 332.7 L 451.7 348.2"/><path d="M 465.0 27.6 L 467.2 41.9 L 467.4 48.0 L 469.4 58.8 L 466.6 73.0 L 464.5 85.7 L 466.8 95.5 L 463.5 107.3 L 464.5 116.8 L 467.7 125.8 L 464.4 136.8 L 469.3 150.1 L 465.8 160.4 L 467.1 169.3 L 463.0 179.3 L 466.6 193.7 L 469.3 204.8 L 468.5 218.4 L 466.0 225.5 L 465.8 236.1 L 467.8 248.5 L 463.4 262.2 L 466.2 271.7 L 466.3 281.6 L 466.5 289.3 L 463.4 304.6 L 464.9 311.4 L 468.2 326.7 L 467.8 335.2 L 463.4 348.8"/><path d="M 475.0 29.2 L 478.4 37.4 L 473.5 50.6 L 479.0 61.6 L 480.4 70.1 L 478.6 82.5 L 477.6 92.6 L 475.1 105.3 L 477.8 118.9 L 477.7 127.0 L 478.1 138.9 L 476.4 147.4 L 478.3 159.2 L 473.8 168.7 L 476.0 183.3 L 478.1 192.9 L 479.2 202.8 L 476.0 216.8 L 478.3 225.5 L 479.7 233.7 L 477.3 250.5 L 479.7 256.9 L 479.2 270.2 L 480.0 279.8 L 478.2 293.0 L 480.4 301.9 L 476.2 311.4 L 478.3 322.0 L 479.4 333.5 L 474.8 350.1"/><path d="M 488.0 29.8 L 486.9 37.2 L 487.1 53.4 L 485.8 63.8 L 490.7 73.3 L 486.4 84.6 L 490.8 94.7 L 486.0 105.8 L 491.2 116.6 L 485.5 124.9 L 488.9 134.8 L 484.5 148.1 L 486.3 160.0 L 485.0 171.4 L 489.2 180.7 L 488.6 193.2 L 490.0 204.5 L 489.0 215.4 L 490.3 223.2 L 485.3 239.6 L 490.3 244.6 L 490.8 259.8 L 490.5 271.4 L 487.1 278.3 L 489.9 293.5 L 487.8 301.4 L 487.0 317.1 L 487.7 323.0 L 491.4 339.3 L 485.7 344.9"/><path d="M 500.6 27.2 L 498.8 40.3 L 497.4 50.7 L 496.9 59.0 L 499.3 71.5 L 501.8 80.5 L 501.9 92.3 L 497.9 102.2 L 497.7 119.4 L 498.0 129.4 L 502.3 139.4 L 496.8 148.5 L 496.7 158.2 L 497.8 168.7 L 500.3 182.2 L 497.5 191.3 L 496.5 201.3 L 498.6 212.0 L 499.2 224.3 L 500.9 235.4 L 501.5 251.1 L 502.0 257.1 L 502.0 269.8 L 501.7 280.7 L 499.3 290.3 L 500.8 302.1 L 501.7 315.5 L 498.5 321.7 L 497.4 335.4 L 498.1 347.6"/><path d="M 506.5 27.8 L 512.7 42.2 L 511.3 51.3 L 510.7 64.5 L 512.0 71.7 L 510.0 86.1 L 510.4 94.7 L 508.7 106.1 L 509.9 119.1 L 513.5 130.5 L 513.2 134.8 L 507.0 147.9 L 512.3 160.4 L 508.3 168.2 L 508.3 179.4 L 507.5 194.7 L 507.9 201.7 L 510.8 212.4 L 512.3 227.1 L 512.6 238.6 L 511.6 246.4 L 509.5 258.2 L 509.2 272.9 L 509.6 283.1 L 510.9 289.1 L 508.0 303.5 L 512.0 312.1 L 508.2 324.1 L 509.7 335.4 L 513.0 347.8"/><path d="M 519.4 26.9 L 521.1 36.6 L 520.2 47.0 L 522.1 63.6 L 523.8 72.7 L 520.2 83.4 L 521.4 91.7 L 521.3 105.0 L 518.9 115.6 L 523.4 128.0 L 519.8 136.2 L 521.9 149.4 L 519.6 159.8 L 520.3 171.9 L 523.6 181.1 L 521.3 193.4 L 522.2 202.2 L 519.2 218.0 L 518.5 227.3 L 519.3 236.9 L 520.7 246.2 L 518.7 262.2 L 517.8 267.5 L 522.7 280.1 L 518.9 293.9 L 524.4 301.0 L 522.4 313.3 L 524.5 325.7 L 523.8 337.1 L 518.4 346.6"/><path d="M 533.4 25.6 L 529.1 42.4 L 535.0 51.1 L 528.9 62.4 L 535.4 74.0 L 533.5 82.6 L 532.9 97.0 L 532.0 102.0 L 529.5 119.2 L 533.5 130.0 L 529.5 135.2 L 533.3 148.5 L 531.7 158.1 L 533.8 173.0 L 533.6 181.5 L 531.9 192.3 L 531.8 202.8 L 531.8 218.2 L 534.1 223.4 L 533.2 239.2 L 530.9 250.7 L 535.1 256.0 L 532.9 269.2 L 531.8 281.3 L 534.5 292.9 L 534.7 301.2 L 534.1 313.2 L 529.8 327.1 L 532.5 334.1 L 534.8 346.9"/><path d="M 544.2 31.4 L 541.8 39.3 L 543.3 48.5 L 543.2 64.3 L 544.4 70.4 L 544.3 83.8 L 542.1 95.2 L 542.1 107.0 L 542.2 118.3 L 541.6 124.7 L 541.8 135.4 L 545.6 152.5 L 542.4 158.2 L 545.7 173.5 L 541.2 180.6 L 543.0 190.4 L 541.0 203.3 L 540.3 212.5 L 543.7 224.6 L 545.9 240.2 L 544.2 246.4 L 544.8 257.9 L 545.6 269.5 L 544.3 282.8 L 544.4 293.8 L 541.9 300.6 L 542.1 317.2 L 539.8 323.5 L 541.7 335.6 L 545.6 344.7"/><path d="M 551.2 24.6 L 552.9 40.6 L 553.7 51.0 L 554.1 60.0 L 553.4 68.8 L 557.2 84.6 L 551.2 91.9 L 556.0 105.1 L 555.7 117.8 L 551.5 129.3 L 551.9 135.5 L 555.7 151.2 L 552.6 159.2 L 555.6 169.6 L 553.6 185.4 L 551.4 196.1 L 556.7 207.5 L 552.2 212.9 L 553.6 223.7 L 557.0 237.5 L 556.4 247.9 L 554.0 262.2 L 551.4 268.1 L 556.5 281.6 L 556.0 295.5 L 555.9 303.8 L 555.8 314.2 L 552.0 323.8 L 557.0 336.2 L 550.7 348.0"/><path d="M 568.5 28.9 L 564.9 38.7 L 565.9 50.8 L 564.9 63.8 L 567.7 74.0 L 566.6 84.5 L 562.9 93.9 L 563.4 102.9 L 568.2 114.1 L 567.2 129.3 L 564.3 134.7 L 562.7 150.0 L 566.5 159.0 L 565.7 168.6 L 566.1 184.0 L 567.0 193.4 L 565.5 200.5 L 563.4 214.3 L 562.0 223.0 L 568.2 238.3 L 565.4 249.3 L 567.6 259.9 L 564.5 269.2 L 568.3 284.2 L 562.6 294.2 L 566.0 301.9 L 566.4 312.4 L 566.7 325.4 L 565.6 332.9 L 567.8 350.2"/><path d="M 577.8 26.6 L 577.6 36.3 L 576.3 48.9 L 575.8 59.5 L 573.0 71.5 L 574.2 80.7 L 574.8 91.4 L 572.7 108.3 L 572.9 118.8 L 575.4 124.3 L 575.5 138.1 L 572.9 149.3 L 572.6 158.6 L 577.5 173.4 L 573.7 181.3 L 579.1 191.7 L 573.3 202.2 L 578.6 213.9 L 577.2 229.1 L 576.9 234.9 L 575.9 246.8 L 575.9 259.8 L 579.3 271.3 L 576.1 283.2 L 576.0 289.9 L 577.2 301.4 L 574.0 313.2 L 575.9 321.7 L 575.0 339.2 L 576.1 346.1"/><path d="M 586.7 29.4 L 587.0 38.3 L 587.6 48.4 L 588.3 60.5 L 588.4 70.9 L 588.0 80.9 L 586.9 93.9 L 583.6 102.4 L 586.7 117.9 L 589.2 129.4 L 589.1 141.3 L 584.9 146.6 L 584.5 162.0 L 584.8 169.7 L 584.5 184.9 L 585.0 191.1 L 587.7 205.4 L 583.8 215.6 L 587.2 226.4 L 587.1 239.1 L 589.3 250.5 L 585.8 255.8 L 586.8 266.7 L 588.0 280.9 L 588.7 294.3 L 588.6 304.4 L 585.8 315.6 L 588.0 323.0 L 589.6 335.8 L 587.2 344.9"/><path d="M 600.3 27.8 L 599.7 41.4 L 598.1 50.6 L 597.7 59.2 L 600.1 74.9 L 594.7 79.7 L 597.8 91.1 L 597.6 103.9 L 596.2 117.9 L 598.6 130.0 L 595.9 137.2 L 598.8 150.9 L 597.5 157.8 L 597.2 171.5 L 601.3 183.1 L 600.4 195.3 L 597.5 204.0 L 600.3 216.6 L 597.3 223.8 L 599.6 235.5 L 596.4 246.3 L 599.3 260.0 L 601.1 270.6 L 597.9 283.7 L 595.5 292.6 L 601.4 301.8 L 595.6 311.3 L 594.7 326.6 L 597.4 338.2 L 600.3 343.7"/><path d="M 607.6 26.3 L 607.3 35.7 L 607.3 48.9 L 608.7 61.2 L 612.4 69.3 L 606.4 85.8 L 607.5 94.3 L 607.6 107.8 L 612.0 116.5 L 606.2 126.1 L 610.4 138.5 L 607.5 148.3 L 605.9 159.3 L 611.3 170.2 L 608.8 179.7 L 610.5 192.4 L 608.2 205.9 L 607.6 212.0 L 610.0 227.7 L 605.9 235.9 L 611.7 248.1 L 608.4 256.4 L 607.5 270.6 L 611.9 282.1 L 612.3 291.4 L 606.0 301.9 L 608.1 310.9 L 606.1 327.9 L 611.8 333.4 L 606.1 350.4"/><path d="M 617.7 26.6 L 618.1 37.0 L 616.7 49.7 L 621.9 58.0 L 619.9 69.4 L 622.0 85.8 L 622.6 94.2 L 617.5 106.5 L 617.0 117.9 L 618.6 129.7 L 618.5 139.7 L 620.0 147.2 L 619.9 159.5 L 617.6 171.3 L 620.2 183.4 L 618.9 193.8 L 617.9 204.2 L 618.2 217.0 L 617.8 224.5 L 617.0 235.6 L 620.3 246.1 L 617.3 261.8 L 618.7 268.0 L 619.3 283.4 L 621.7 294.8 L 620.3 301.8 L 620.0 310.9 L 621.3 327.4 L 622.9 338.3 L 621.0 349.1"/><path d="M 629.5 28.4 L 628.6 42.1 L 631.1 47.7 L 634.4 61.8 L 629.0 74.4 L 631.9 83.9 L 633.6 92.7 L 629.4 105.5 L 628.9 117.4 L 630.8 124.9 L 628.4 135.6 L 631.5 151.9 L 633.1 162.4 L 631.5 173.1 L 629.8 181.1 L 633.8 191.3 L 631.9 204.5 L 627.9 215.5 L 633.1 228.7 L 630.4 239.8 L 627.8 250.8 L 632.3 261.2 L 630.6 270.6 L 633.3 279.1 L 628.8 293.8 L 633.6 301.1 L 631.3 314.1 L 629.7 327.4 L 629.5 338.0 L 630.4 344.5"/><path d="M 645.2 25.5 L 639.2 35.7 L 641.0 46.7 L 639.6 64.1 L 640.3 73.5 L 640.0 79.6 L 638.5 91.4 L 645.2 104.7 L 640.2 112.8 L 643.0 125.7 L 639.8 137.6 L 643.5 147.9 L 642.4 157.8 L 642.4 167.8 L 645.0 185.0 L 642.5 192.8 L 641.3 205.7 L 642.5 216.5 L 641.6 225.3 L 643.6 234.8 L 640.9 246.2 L 639.9 261.5 L 640.7 271.7 L 638.8 284.0 L 641.8 293.7 L 639.2 303.7 L 644.2 312.5 L 639.2 324.2 L 643.9 337.8 L 638.9 345.8"/></g><rect x="207" y="105" width="9" height="10" fill="#c6ccb8"/><path d="M 235 275 Q 270 292 300 300 L 290 306 Q 250 300 215 290 Z" fill="#f4f3ef" opacity="0.8"/><path d="M 100.0 346.0 L 116.0 346.0 L 132.6 326.3 L 155.2 309.8 L 173.3 296.2 L 194.4 290.2 L 215.4 291.7 L 238.0 297.7 L 253.1 306.8 L 275.7 308.3 L 290.8 314.3 L 305.8 305.2 L 310.3 293.2 L 304.3 279.6 L 320.9 275.1 L 343.5 272.1 L 366.0 275.1 L 381.1 284.2 L 390.0 292.6 L 406.3 286.0 L 419.3 286.0 L 430.7 295.8 L 438.8 308.8 L 443.7 325.0 L 445.3 346.0 Z" fill="#aad3df" stroke="#98b4d0" stroke-width="1.2"/><path d="M 502.2 346.0 L 495.7 325.0 L 489.2 308.8 L 481.0 292.6 L 477.8 273.0 L 478.6 260.0 L 482.7 243.8 L 490.8 230.8 L 503.8 219.4 L 523.3 204.8 L 533.0 195.0 L 550.0 186.0 L 571.0 170.0 L 591.0 157.0 L 601.0 140.0 L 610.0 110.0 L 607.0 92.4 L 614.0 74.6 L 630.0 40.0 L 650.8 0.0 L 756.0 0.0 L 756.0 346.0 Z" fill="#aad3df" stroke="#98b4d0" stroke-width="1.2"/><text x="177" y="26" text-anchor="middle" font-family="Liberation Sans" font-size="11.5" fill="#333" stroke="#fff" stroke-width="2" paint-order="stroke" stroke-opacity="0.6">Kansas City</text><text x="147" y="110" text-anchor="middle" font-family="Liberation Sans" font-size="11.5" fill="#333" stroke="#fff" stroke-width="2" paint-order="stroke" stroke-opacity="0.6">Tulsa</text><text x="281" y="139" text-anchor="middle" font-family="Liberation Sans" font-size="11.5" fill="#333" stroke="#fff" stroke-width="2" paint-order="stroke" stroke-opacity="0.6">Memphis</text><text x="127" y="204" text-anchor="middle" font-family="Liberation Sans" font-size="11.5" fill="#333" stroke="#fff" stroke-width="2" paint-order="stroke" stroke-opacity="0.6">Dallas</text><text x="106" y="271" text-anchor="middle" font-family="Liberation Sans" font-size="11.5" fill="#333" stroke="#fff" stroke-width="2" paint-order="stroke" stroke-opacity="0.6">Austin</text><text x="88" y="309" text-anchor="middle" font-family="Liberation Sans" font-size="11.5" fill="#333" stroke="#fff" stroke-width="2" paint-order="stroke" stroke-opacity="0.6">San Antonio</text><text x="158" y="284" text-anchor="middle" font-family="Liberation Sans" font-size="11.5" fill="#333" stroke="#fff" stroke-width="2" paint-order="stroke" stroke-opacity="0.6">Houston</text><text x="256" y="283" text-anchor="middle" font-family="Liberation Sans" font-size="11.5" fill="#333" stroke="#fff" stroke-width="2" paint-order="stroke" stroke-opacity="0.6">Baton Rouge</text><text x="486" y="286" text-anchor="middle" font-family="Liberation Sans" font-size="11.5" fill="#333" stroke="#fff" stroke-width="2" paint-order="stroke" stroke-opacity="0.6">Jacksonville</text><text x="572" y="52" text-anchor="middle" font-family="Liberation Sans" font-size="11.5" fill="#333" stroke="#fff" stroke-width="2" paint-order="stroke" stroke-opacity="0.6">Washi</text><text x="452" y="145" text-anchor="middle" font-family="Liberation Sans" font-size="11.5" fill="#333" stroke="#fff" stroke-width="2" paint-order="stroke" stroke-opacity="0.6">Cha</text><text x="93" y="51" text-anchor="middle" font-family="Liberation Sans" font-style="italic" font-size="10.5" fill="#8c6a9c">Kansas</text><text x="225" y="56" text-anchor="middle" font-family="Liberation Sans" font-style="italic" font-size="10.5" fill="#8c6a9c">Missouri</text><text x="295" y="14" text-anchor="middle" font-family="Liberation Sans" font-style="italic" font-size="10.5" fill="#8c6a9c">Illinois</text><text x="370" y="14" text-anchor="middle" font-family="Liberation Sans" font-style="italic" font-size="10.5" fill="#8c6a9c">Indiana</text><text x="402" y="71" text-anchor="middle" font-family="Liberation Sans" font-style="italic" font-size="10.5" fill="#8c6a9c">Kentucky</text><text x="505" y="39" text-anchor="middle" font-family="Liberation Sans" font-style="italic" font-size="10.5" fill="#8c6a9c">West Virginia</text><text x="366" y="128" text-anchor="middle" font-family="Liberation Sans" font-style="italic" font-size="10.5" fill="#8c6a9c">Tennessee</text><text x="118" y="141" text-anchor="middle" font-family="Liberation Sans" font-style="italic" font-size="10.5" fill="#8c6a9c">Oklahoma</text><text x="58" y="251" text-anchor="middle" font-family="Liberation Sans" font-style="italic" font-size="10.5" fill="#8c6a9c">Texas</text><text x="471" y="343" text-anchor="middle" font-family="Liberation Sans" font-style="italic" font-size="10.5" fill="#8c6a9c">Florida</text><circle cx="185" cy="145" r="5.8" fill="#e9c232" stroke="#fff8dc" stroke-width="1.6"/><circle cx="211" cy="140" r="5.8" fill="#e9c232" stroke="#fff8dc" stroke-width="1.6"/><circle cx="222" cy="170" r="5.8" fill="#e9c232" stroke="#fff8dc" stroke-width="1.6"/><circle cx="181" cy="189" r="5.8" fill="#e9c232" stroke="#fff8dc" stroke-width="1.6"/><circle cx="173" cy="224" r="5.8" fill="#e9c232" stroke="#fff8dc" stroke-width="1.6"/><circle cx="232" cy="201" r="5.8" fill="#e9c232" stroke="#fff8dc" stroke-width="1.6"/><circle cx="222" cy="229" r="5.8" fill="#e9c232" stroke="#fff8dc" stroke-width="1.6"/><circle cx="353" cy="208" r="5.8" fill="#e9c232" stroke="#fff8dc" stroke-width="1.6"/><circle cx="343" cy="261" r="5.8" fill="#e9c232" stroke="#fff8dc" stroke-width="1.6"/><circle cx="386" cy="210" r="5.8" fill="#e9c232" stroke="#fff8dc" stroke-width="1.6"/><circle cx="473" cy="165" r="5.8" fill="#e9c232" stroke="#fff8dc" stroke-width="1.6"/><circle cx="465" cy="193" r="5.8" fill="#e9c232" stroke="#fff8dc" stroke-width="1.6"/><circle cx="439" cy="214" r="5.8" fill="#e9c232" stroke="#fff8dc" stroke-width="1.6"/><circle cx="437" cy="237" r="5.8" fill="#e9c232" stroke="#fff8dc" stroke-width="1.6"/><circle cx="428" cy="279" r="5.8" fill="#e9c232" stroke="#fff8dc" stroke-width="1.6"/><circle cx="463" cy="278" r="5.8" fill="#e9c232" stroke="#fff8dc" stroke-width="1.6"/><circle cx="568" cy="105" r="5.8" fill="#e9c232" stroke="#fff8dc" stroke-width="1.6"/><circle cx="549" cy="165" r="5.8" fill="#e9c232" stroke="#fff8dc" stroke-width="1.6"/><circle cx="337.8" cy="186.9" r="2.9" fill="#e9c125" stroke="#3a3a3a" stroke-opacity="0.85" stroke-width="1"/><circle cx="349.0" cy="178.6" r="2.9" fill="#8ea2d8" stroke="#3a3a3a" stroke-opacity="0.85" stroke-width="1"/><circle cx="349.3" cy="188.9" r="2.9" fill="#e9c125" stroke="#3a3a3a" stroke-opacity="0.85" stroke-width="1"/><circle cx="336.9" cy="181.4" r="2.9" fill="#8ea2d8" stroke="#3a3a3a" stroke-opacity="0.85" stroke-width="1"/><circle cx="343.0" cy="181.1" r="2.9" fill="#e9c125" stroke="#3a3a3a" stroke-opacity="0.85" stroke-width="1"/><circle cx="490.8" cy="209.3" r="2.9" fill="#e9c125" stroke="#3a3a3a" stroke-opacity="0.85" stroke-width="1"/><circle cx="486.0" cy="212.2" r="2.9" fill="#e9c125" stroke="#3a3a3a" stroke-opacity="0.85" stroke-width="1"/><circle cx="479.4" cy="210.0" r="2.9" fill="#8ea2d8" stroke="#3a3a3a" stroke-opacity="0.85" stroke-width="1"/><circle cx="477.6" cy="207.9" r="2.9" fill="#e9c125" stroke="#3a3a3a" stroke-opacity="0.85" stroke-width="1"/><circle cx="481.8" cy="204.1" r="2.9" fill="#e9c125" stroke="#3a3a3a" stroke-opacity="0.85" stroke-width="1"/><circle cx="501.2" cy="208.5" r="2.9" fill="#8ea2d8" stroke="#3a3a3a" stroke-opacity="0.85" stroke-width="1"/><circle cx="468.5" cy="116.6" r="2.9" fill="#8ea2d8" stroke="#3a3a3a" stroke-opacity="0.85" stroke-width="1"/><circle cx="471.6" cy="118.2" r="2.9" fill="#e9c125" stroke="#3a3a3a" stroke-opacity="0.85" stroke-width="1"/><circle cx="470.6" cy="117.1" r="2.9" fill="#8ea2d8" stroke="#3a3a3a" stroke-opacity="0.85" stroke-width="1"/><circle cx="464.3" cy="139.1" r="2.9" fill="#e9c125" stroke="#3a3a3a" stroke-opacity="0.85" stroke-width="1"/><circle cx="474.1" cy="147.8" r="2.9" fill="#f0a0c6" stroke="#3a3a3a" stroke-opacity="0.85" stroke-width="1"/><circle cx="470.4" cy="142.9" r="2.9" fill="#e9c125" stroke="#3a3a3a" stroke-opacity="0.85" stroke-width="1"/><circle cx="471.7" cy="146.5" r="2.9" fill="#8ea2d8" stroke="#3a3a3a" stroke-opacity="0.85" stroke-width="1"/><circle cx="473.1" cy="151.2" r="2.9" fill="#e9c125" stroke="#3a3a3a" stroke-opacity="0.85" stroke-width="1"/><circle cx="473.2" cy="153.0" r="2.9" fill="#e9c125" stroke="#3a3a3a" stroke-opacity="0.85" stroke-width="1"/><circle cx="516.9" cy="118.5" r="2.9" fill="#8ea2d8" stroke="#3a3a3a" stroke-opacity="0.85" stroke-width="1"/><circle cx="514.2" cy="111.9" r="2.9" fill="#9f918a" stroke="#3a3a3a" stroke-opacity="0.85" stroke-width="1"/><circle cx="499.4" cy="121.8" r="2.9" fill="#e9c125" stroke="#3a3a3a" stroke-opacity="0.85" stroke-width="1"/><circle cx="500.3" cy="119.8" r="2.9" fill="#e9c125" stroke="#3a3a3a" stroke-opacity="0.85" stroke-width="1"/><circle cx="499.0" cy="118.7" r="2.9" fill="#8ea2d8" stroke="#3a3a3a" stroke-opacity="0.85" stroke-width="1"/><circle cx="502.2" cy="118.1" r="2.9" fill="#e9c125" stroke="#3a3a3a" stroke-opacity="0.85" stroke-width="1"/><circle cx="242.7" cy="205.5" r="2.9" fill="#eea37c" stroke="#3a3a3a" stroke-opacity="0.85" stroke-width="1"/><circle cx="243.7" cy="209.4" r="2.9" fill="#b59bd2" stroke="#3a3a3a" stroke-opacity="0.85" stroke-width="1"/><circle cx="235.5" cy="194.7" r="2.9" fill="#e9c125" stroke="#3a3a3a" stroke-opacity="0.85" stroke-width="1"/><circle cx="252.1" cy="201.0" r="2.9" fill="#8ea2d8" stroke="#3a3a3a" stroke-opacity="0.85" stroke-width="1"/><circle cx="239.2" cy="207.2" r="2.9" fill="#8ea2d8" stroke="#3a3a3a" stroke-opacity="0.85" stroke-width="1"/><circle cx="238.8" cy="200.9" r="2.9" fill="#8ea2d8" stroke="#3a3a3a" stroke-opacity="0.85" stroke-width="1"/><circle cx="242.9" cy="199.4" r="2.9" fill="#8ea2d8" stroke="#3a3a3a" stroke-opacity="0.85" stroke-width="1"/><circle cx="309.3" cy="188.8" r="2.9" fill="#e9c125" stroke="#3a3a3a" stroke-opacity="0.85" stroke-width="1"/><circle cx="303.1" cy="194.4" r="2.9" fill="#8ea2d8" stroke="#3a3a3a" stroke-opacity="0.85" stroke-width="1"/><circle cx="313.3" cy="185.2" r="2.9" fill="#eea37c" stroke="#3a3a3a" stroke-opacity="0.85" stroke-width="1"/><circle cx="148.8" cy="279.0" r="2.9" fill="#eea37c" stroke="#3a3a3a" stroke-opacity="0.85" stroke-width="1"/><circle cx="159.6" cy="281.6" r="2.9" fill="#e9c125" stroke="#3a3a3a" stroke-opacity="0.85" stroke-width="1"/><circle cx="153.9" cy="277.8" r="2.9" fill="#8ea2d8" stroke="#3a3a3a" stroke-opacity="0.85" stroke-width="1"/><circle cx="147.9" cy="284.0" r="2.9" fill="#8ea2d8" stroke="#3a3a3a" stroke-opacity="0.85" stroke-width="1"/><circle cx="149.8" cy="286.2" r="2.9" fill="#8ea2d8" stroke="#3a3a3a" stroke-opacity="0.85" stroke-width="1"/><circle cx="161.6" cy="287.0" r="2.9" fill="#8ea2d8" stroke="#3a3a3a" stroke-opacity="0.85" stroke-width="1"/><circle cx="311.1" cy="233.6" r="2.9" fill="#8ea2d8" stroke="#3a3a3a" stroke-opacity="0.85" stroke-width="1"/><circle cx="310.5" cy="231.4" r="2.9" fill="#e9c125" stroke="#3a3a3a" stroke-opacity="0.85" stroke-width="1"/><circle cx="317.4" cy="232.7" r="2.9" fill="#f0a0c6" stroke="#3a3a3a" stroke-opacity="0.85" stroke-width="1"/><circle cx="323.1" cy="237.8" r="2.9" fill="#8ea2d8" stroke="#3a3a3a" stroke-opacity="0.85" stroke-width="1"/><circle cx="305.8" cy="233.1" r="2.9" fill="#e9c125" stroke="#3a3a3a" stroke-opacity="0.85" stroke-width="1"/><circle cx="320.7" cy="237.5" r="2.9" fill="#8ea2d8" stroke="#3a3a3a" stroke-opacity="0.85" stroke-width="1"/><circle cx="488.1" cy="124.2" r="2.9" fill="#e9c125" stroke="#3a3a3a" stroke-opacity="0.85" stroke-width="1"/><circle cx="491.8" cy="131.3" r="2.9" fill="#8ea2d8" stroke="#3a3a3a" stroke-opacity="0.85" stroke-width="1"/><circle cx="491.9" cy="120.9" r="2.9" fill="#e9c125" stroke="#3a3a3a" stroke-opacity="0.85" stroke-width="1"/><circle cx="493.9" cy="135.2" r="2.9" fill="#e9c125" stroke="#3a3a3a" stroke-opacity="0.85" stroke-width="1"/><circle cx="494.9" cy="127.7" r="2.9" fill="#b59bd2" stroke="#3a3a3a" stroke-opacity="0.85" stroke-width="1"/><circle cx="186.5" cy="155.3" r="2.9" fill="#8ea2d8" stroke="#3a3a3a" stroke-opacity="0.85" stroke-width="1"/><circle cx="188.0" cy="153.8" r="2.9" fill="#e9c125" stroke="#3a3a3a" stroke-opacity="0.85" stroke-width="1"/><circle cx="535.4" cy="108.5" r="2.9" fill="#8ea2d8" stroke="#3a3a3a" stroke-opacity="0.85" stroke-width="1"/><circle cx="524.6" cy="114.7" r="2.9" fill="#e9c125" stroke="#3a3a3a" stroke-opacity="0.85" stroke-width="1"/><circle cx="531.4" cy="110.6" r="2.9" fill="#e9c125" stroke="#3a3a3a" stroke-opacity="0.85" stroke-width="1"/><circle cx="529.6" cy="103.3" r="2.9" fill="#e9c125" stroke="#3a3a3a" stroke-opacity="0.85" stroke-width="1"/><circle cx="534.5" cy="108.5" r="2.9" fill="#e9c125" stroke="#3a3a3a" stroke-opacity="0.85" stroke-width="1"/><circle cx="522.8" cy="101.2" r="2.9" fill="#8ea2d8" stroke="#3a3a3a" stroke-opacity="0.85" stroke-width="1"/><circle cx="223.8" cy="152.5" r="2.9" fill="#8ea2d8" stroke="#3a3a3a" stroke-opacity="0.85" stroke-width="1"/><circle cx="229.2" cy="161.5" r="2.9" fill="#8ea2d8" stroke="#3a3a3a" stroke-opacity="0.85" stroke-width="1"/><circle cx="213.9" cy="157.7" r="2.9" fill="#8ea2d8" stroke="#3a3a3a" stroke-opacity="0.85" stroke-width="1"/><circle cx="233.3" cy="146.4" r="2.9" fill="#e9c125" stroke="#3a3a3a" stroke-opacity="0.85" stroke-width="1"/><circle cx="237.9" cy="142.5" r="2.9" fill="#8ea2d8" stroke="#3a3a3a" stroke-opacity="0.85" stroke-width="1"/><circle cx="234.1" cy="138.0" r="2.9" fill="#8ea2d8" stroke="#3a3a3a" stroke-opacity="0.85" stroke-width="1"/><circle cx="235.0" cy="146.6" r="2.9" fill="#9f918a" stroke="#3a3a3a" stroke-opacity="0.85" stroke-width="1"/><circle cx="239.8" cy="141.7" r="2.9" fill="#e9c125" stroke="#3a3a3a" stroke-opacity="0.85" stroke-width="1"/><circle cx="235.8" cy="144.2" r="2.9" fill="#e9c125" stroke="#3a3a3a" stroke-opacity="0.85" stroke-width="1"/><circle cx="254.5" cy="229.2" r="2.9" fill="#e9c125" stroke="#3a3a3a" stroke-opacity="0.85" stroke-width="1"/><circle cx="247.6" cy="224.9" r="2.9" fill="#e9c125" stroke="#3a3a3a" stroke-opacity="0.85" stroke-width="1"/><circle cx="142.4" cy="253.1" r="2.9" fill="#8ea2d8" stroke="#3a3a3a" stroke-opacity="0.85" stroke-width="1"/><circle cx="557.8" cy="161.3" r="2.9" fill="#e9c125" stroke="#3a3a3a" stroke-opacity="0.85" stroke-width="1"/><circle cx="564.3" cy="171.8" r="2.9" fill="#e9c125" stroke="#3a3a3a" stroke-opacity="0.85" stroke-width="1"/><circle cx="558.2" cy="171.8" r="2.9" fill="#8ea2d8" stroke="#3a3a3a" stroke-opacity="0.85" stroke-width="1"/><circle cx="558.4" cy="167.8" r="2.9" fill="#8ea2d8" stroke="#3a3a3a" stroke-opacity="0.85" stroke-width="1"/><circle cx="558.3" cy="170.9" r="2.9" fill="#e9c125" stroke="#3a3a3a" stroke-opacity="0.85" stroke-width="1"/><circle cx="568.3" cy="163.6" r="2.9" fill="#e9c125" stroke="#3a3a3a" stroke-opacity="0.85" stroke-width="1"/><circle cx="570.1" cy="161.9" r="2.9" fill="#8ea2d8" stroke="#3a3a3a" stroke-opacity="0.85" stroke-width="1"/><circle cx="382.8" cy="172.7" r="2.9" fill="#e9c125" stroke="#3a3a3a" stroke-opacity="0.85" stroke-width="1"/><circle cx="392.7" cy="165.3" r="2.9" fill="#9f918a" stroke="#3a3a3a" stroke-opacity="0.85" stroke-width="1"/><circle cx="388.8" cy="169.9" r="2.9" fill="#e9c125" stroke="#3a3a3a" stroke-opacity="0.85" stroke-width="1"/><circle cx="392.3" cy="166.0" r="2.9" fill="#eea37c" stroke="#3a3a3a" stroke-opacity="0.85" stroke-width="1"/><circle cx="388.8" cy="163.5" r="2.9" fill="#e9c125" stroke="#3a3a3a" stroke-opacity="0.85" stroke-width="1"/><circle cx="382.7" cy="168.6" r="2.9" fill="#b59bd2" stroke="#3a3a3a" stroke-opacity="0.85" stroke-width="1"/><circle cx="257.7" cy="223.7" r="2.9" fill="#e9c125" stroke="#3a3a3a" stroke-opacity="0.85" stroke-width="1"/><circle cx="253.2" cy="230.9" r="2.9" fill="#e9c125" stroke="#3a3a3a" stroke-opacity="0.85" stroke-width="1"/><circle cx="373.7" cy="171.6" r="2.9" fill="#e9c125" stroke="#3a3a3a" stroke-opacity="0.85" stroke-width="1"/><circle cx="371.4" cy="173.2" r="2.9" fill="#e9c125" stroke="#3a3a3a" stroke-opacity="0.85" stroke-width="1"/><circle cx="365.8" cy="171.0" r="2.9" fill="#8ea2d8" stroke="#3a3a3a" stroke-opacity="0.85" stroke-width="1"/><circle cx="371.3" cy="170.3" r="2.9" fill="#8ea2d8" stroke="#3a3a3a" stroke-opacity="0.85" stroke-width="1"/><circle cx="365.5" cy="162.7" r="2.9" fill="#8ea2d8" stroke="#3a3a3a" stroke-opacity="0.85" stroke-width="1"/><circle cx="361.9" cy="161.0" r="2.9" fill="#8ea2d8" stroke="#3a3a3a" stroke-opacity="0.85" stroke-width="1"/><circle cx="575.0" cy="88.2" r="2.9" fill="#e9c125" stroke="#3a3a3a" stroke-opacity="0.85" stroke-width="1"/><circle cx="572.4" cy="86.2" r="2.9" fill="#e9c125" stroke="#3a3a3a" stroke-opacity="0.85" stroke-width="1"/><circle cx="575.5" cy="85.4" r="2.9" fill="#8ea2d8" stroke="#3a3a3a" stroke-opacity="0.85" stroke-width="1"/><circle cx="191.2" cy="138.6" r="2.9" fill="#8ea2d8" stroke="#3a3a3a" stroke-opacity="0.85" stroke-width="1"/><circle cx="199.9" cy="140.7" r="2.9" fill="#8ea2d8" stroke="#3a3a3a" stroke-opacity="0.85" stroke-width="1"/><circle cx="189.4" cy="140.9" r="2.9" fill="#8ea2d8" stroke="#3a3a3a" stroke-opacity="0.85" stroke-width="1"/><circle cx="458.3" cy="187.8" r="2.9" fill="#8ea2d8" stroke="#3a3a3a" stroke-opacity="0.85" stroke-width="1"/><circle cx="450.4" cy="194.4" r="2.9" fill="#8ea2d8" stroke="#3a3a3a" stroke-opacity="0.85" stroke-width="1"/><circle cx="446.9" cy="192.3" r="2.9" fill="#e9c125" stroke="#3a3a3a" stroke-opacity="0.85" stroke-width="1"/><circle cx="462.5" cy="264.8" r="2.9" fill="#e9c125" stroke="#3a3a3a" stroke-opacity="0.85" stroke-width="1"/><circle cx="472.5" cy="259.0" r="2.9" fill="#e9c125" stroke="#3a3a3a" stroke-opacity="0.85" stroke-width="1"/><circle cx="467.7" cy="257.9" r="2.9" fill="#e9c125" stroke="#3a3a3a" stroke-opacity="0.85" stroke-width="1"/><circle cx="498.0" cy="102.2" r="2.9" fill="#b59bd2" stroke="#3a3a3a" stroke-opacity="0.85" stroke-width="1"/><circle cx="326.0" cy="224.7" r="2.9" fill="#e9c125" stroke="#3a3a3a" stroke-opacity="0.85" stroke-width="1"/><circle cx="336.4" cy="218.8" r="2.9" fill="#b59bd2" stroke="#3a3a3a" stroke-opacity="0.85" stroke-width="1"/><circle cx="588.0" cy="106.7" r="2.9" fill="#8ea2d8" stroke="#3a3a3a" stroke-opacity="0.85" stroke-width="1"/><circle cx="575.1" cy="125.8" r="2.9" fill="#8ea2d8" stroke="#3a3a3a" stroke-opacity="0.85" stroke-width="1"/><circle cx="588.9" cy="104.1" r="2.9" fill="#9f918a" stroke="#3a3a3a" stroke-opacity="0.85" stroke-width="1"/><circle cx="223.6" cy="137.3" r="2.9" fill="#e9c125" stroke="#3a3a3a" stroke-opacity="0.85" stroke-width="1"/><circle cx="218.8" cy="132.0" r="2.9" fill="#8ea2d8" stroke="#3a3a3a" stroke-opacity="0.85" stroke-width="1"/><circle cx="537.0" cy="55.5" r="2.9" fill="#8ea2d8" stroke="#3a3a3a" stroke-opacity="0.85" stroke-width="1"/><circle cx="536.4" cy="55.9" r="2.9" fill="#eea37c" stroke="#3a3a3a" stroke-opacity="0.85" stroke-width="1"/><circle cx="539.3" cy="62.2" r="2.9" fill="#e9c125" stroke="#3a3a3a" stroke-opacity="0.85" stroke-width="1"/><circle cx="529.4" cy="57.6" r="2.9" fill="#e9c125" stroke="#3a3a3a" stroke-opacity="0.85" stroke-width="1"/><circle cx="541.2" cy="55.6" r="2.9" fill="#8ea2d8" stroke="#3a3a3a" stroke-opacity="0.85" stroke-width="1"/><circle cx="274.6" cy="228.5" r="2.9" fill="#8ea2d8" stroke="#3a3a3a" stroke-opacity="0.85" stroke-width="1"/><circle cx="262.7" cy="223.3" r="2.9" fill="#8ea2d8" stroke="#3a3a3a" stroke-opacity="0.85" stroke-width="1"/><circle cx="270.2" cy="228.5" r="2.9" fill="#e9c125" stroke="#3a3a3a" stroke-opacity="0.85" stroke-width="1"/><circle cx="259.1" cy="223.1" r="2.9" fill="#e9c125" stroke="#3a3a3a" stroke-opacity="0.85" stroke-width="1"/><circle cx="185.1" cy="262.8" r="2.9" fill="#e9c125" stroke="#3a3a3a" stroke-opacity="0.85" stroke-width="1"/><circle cx="176.8" cy="251.2" r="2.9" fill="#e9c125" stroke="#3a3a3a" stroke-opacity="0.85" stroke-width="1"/><circle cx="184.6" cy="259.5" r="2.9" fill="#e9c125" stroke="#3a3a3a" stroke-opacity="0.85" stroke-width="1"/><circle cx="179.9" cy="256.7" r="2.9" fill="#e9c125" stroke="#3a3a3a" stroke-opacity="0.85" stroke-width="1"/><circle cx="171.4" cy="256.2" r="2.9" fill="#8ea2d8" stroke="#3a3a3a" stroke-opacity="0.85" stroke-width="1"/><circle cx="465.1" cy="127.7" r="2.9" fill="#e9c125" stroke="#3a3a3a" stroke-opacity="0.85" stroke-width="1"/><circle cx="465.3" cy="137.0" r="2.9" fill="#8ea2d8" stroke="#3a3a3a" stroke-opacity="0.85" stroke-width="1"/><circle cx="454.0" cy="126.8" r="2.9" fill="#e9c125" stroke="#3a3a3a" stroke-opacity="0.85" stroke-width="1"/><circle cx="454.8" cy="124.2" r="2.9" fill="#8ea2d8" stroke="#3a3a3a" stroke-opacity="0.85" stroke-width="1"/><circle cx="451.8" cy="123.9" r="2.9" fill="#e9c125" stroke="#3a3a3a" stroke-opacity="0.85" stroke-width="1"/><circle cx="457.5" cy="144.1" r="2.9" fill="#eea37c" stroke="#3a3a3a" stroke-opacity="0.85" stroke-width="1"/><circle cx="334.8" cy="205.4" r="2.9" fill="#8ea2d8" stroke="#3a3a3a" stroke-opacity="0.85" stroke-width="1"/><circle cx="336.6" cy="199.9" r="2.9" fill="#e9c125" stroke="#3a3a3a" stroke-opacity="0.85" stroke-width="1"/><circle cx="336.9" cy="258.9" r="2.9" fill="#e9c125" stroke="#3a3a3a" stroke-opacity="0.85" stroke-width="1"/><circle cx="346.4" cy="258.4" r="2.9" fill="#8ea2d8" stroke="#3a3a3a" stroke-opacity="0.85" stroke-width="1"/><circle cx="341.3" cy="253.7" r="2.9" fill="#8ea2d8" stroke="#3a3a3a" stroke-opacity="0.85" stroke-width="1"/><circle cx="525.0" cy="82.2" r="2.9" fill="#b59bd2" stroke="#3a3a3a" stroke-opacity="0.85" stroke-width="1"/><circle cx="528.4" cy="81.5" r="2.9" fill="#8ea2d8" stroke="#3a3a3a" stroke-opacity="0.85" stroke-width="1"/><circle cx="519.0" cy="81.3" r="2.9" fill="#e9c125" stroke="#3a3a3a" stroke-opacity="0.85" stroke-width="1"/><circle cx="526.9" cy="78.6" r="2.9" fill="#e9c125" stroke="#3a3a3a" stroke-opacity="0.85" stroke-width="1"/><circle cx="525.5" cy="78.8" r="2.9" fill="#e9c125" stroke="#3a3a3a" stroke-opacity="0.85" stroke-width="1"/><circle cx="525.4" cy="73.0" r="2.9" fill="#e9c125" stroke="#3a3a3a" stroke-opacity="0.85" stroke-width="1"/><circle cx="529.5" cy="84.2" r="2.9" fill="#8ea2d8" stroke="#3a3a3a" stroke-opacity="0.85" stroke-width="1"/><circle cx="475.0" cy="183.8" r="2.9" fill="#8ea2d8" stroke="#3a3a3a" stroke-opacity="0.85" stroke-width="1"/><circle cx="469.0" cy="190.7" r="2.9" fill="#e9c125" stroke="#3a3a3a" stroke-opacity="0.85" stroke-width="1"/><circle cx="480.2" cy="182.3" r="2.9" fill="#e9c125" stroke="#3a3a3a" stroke-opacity="0.85" stroke-width="1"/><circle cx="467.4" cy="190.2" r="2.9" fill="#e9c125" stroke="#3a3a3a" stroke-opacity="0.85" stroke-width="1"/><circle cx="466.5" cy="189.6" r="2.9" fill="#e9c125" stroke="#3a3a3a" stroke-opacity="0.85" stroke-width="1"/><circle cx="462.2" cy="183.1" r="2.9" fill="#8ea2d8" stroke="#3a3a3a" stroke-opacity="0.85" stroke-width="1"/><circle cx="473.8" cy="181.0" r="2.9" fill="#e9c125" stroke="#3a3a3a" stroke-opacity="0.85" stroke-width="1"/><circle cx="377.2" cy="180.7" r="2.9" fill="#8ea2d8" stroke="#3a3a3a" stroke-opacity="0.85" stroke-width="1"/><circle cx="371.7" cy="182.7" r="2.9" fill="#e9c125" stroke="#3a3a3a" stroke-opacity="0.85" stroke-width="1"/><circle cx="373.2" cy="178.4" r="2.9" fill="#e9c125" stroke="#3a3a3a" stroke-opacity="0.85" stroke-width="1"/><circle cx="380.9" cy="182.3" r="2.9" fill="#e9c125" stroke="#3a3a3a" stroke-opacity="0.85" stroke-width="1"/><circle cx="376.2" cy="177.8" r="2.9" fill="#8ea2d8" stroke="#3a3a3a" stroke-opacity="0.85" stroke-width="1"/><circle cx="370.5" cy="183.4" r="2.9" fill="#e9c125" stroke="#3a3a3a" stroke-opacity="0.85" stroke-width="1"/><circle cx="562.1" cy="125.8" r="2.9" fill="#f0a0c6" stroke="#3a3a3a" stroke-opacity="0.85" stroke-width="1"/><circle cx="563.0" cy="117.8" r="2.9" fill="#8ea2d8" stroke="#3a3a3a" stroke-opacity="0.85" stroke-width="1"/><circle cx="564.3" cy="115.3" r="2.9" fill="#eea37c" stroke="#3a3a3a" stroke-opacity="0.85" stroke-width="1"/><circle cx="557.8" cy="128.0" r="2.9" fill="#8ea2d8" stroke="#3a3a3a" stroke-opacity="0.85" stroke-width="1"/><circle cx="571.2" cy="115.8" r="2.9" fill="#8ea2d8" stroke="#3a3a3a" stroke-opacity="0.85" stroke-width="1"/><circle cx="439.7" cy="174.2" r="2.9" fill="#eea37c" stroke="#3a3a3a" stroke-opacity="0.85" stroke-width="1"/><circle cx="440.6" cy="172.2" r="2.9" fill="#e9c125" stroke="#3a3a3a" stroke-opacity="0.85" stroke-width="1"/><circle cx="432.3" cy="168.4" r="2.9" fill="#e9c125" stroke="#3a3a3a" stroke-opacity="0.85" stroke-width="1"/><circle cx="432.6" cy="178.0" r="2.9" fill="#e9c125" stroke="#3a3a3a" stroke-opacity="0.85" stroke-width="1"/><circle cx="441.6" cy="170.4" r="2.9" fill="#8ea2d8" stroke="#3a3a3a" stroke-opacity="0.85" stroke-width="1"/><circle cx="436.4" cy="176.8" r="2.9" fill="#eea37c" stroke="#3a3a3a" stroke-opacity="0.85" stroke-width="1"/><circle cx="444.5" cy="169.7" r="2.9" fill="#e9c125" stroke="#3a3a3a" stroke-opacity="0.85" stroke-width="1"/><circle cx="363.4" cy="252.1" r="2.9" fill="#e9c125" stroke="#3a3a3a" stroke-opacity="0.85" stroke-width="1"/><circle cx="361.4" cy="253.3" r="2.9" fill="#e9c125" stroke="#3a3a3a" stroke-opacity="0.85" stroke-width="1"/><circle cx="364.9" cy="257.5" r="2.9" fill="#8ea2d8" stroke="#3a3a3a" stroke-opacity="0.85" stroke-width="1"/><circle cx="517.2" cy="162.3" r="2.9" fill="#f0a0c6" stroke="#3a3a3a" stroke-opacity="0.85" stroke-width="1"/><circle cx="517.6" cy="154.6" r="2.9" fill="#e9c125" stroke="#3a3a3a" stroke-opacity="0.85" stroke-width="1"/><circle cx="525.5" cy="158.0" r="2.9" fill="#e9c125" stroke="#3a3a3a" stroke-opacity="0.85" stroke-width="1"/><circle cx="528.2" cy="168.5" r="2.9" fill="#9f918a" stroke="#3a3a3a" stroke-opacity="0.85" stroke-width="1"/><circle cx="325.2" cy="269.9" r="2.9" fill="#9fae8a" stroke="#3a3a3a" stroke-opacity="0.85" stroke-width="1"/><circle cx="414.8" cy="266.2" r="2.9" fill="#e9c125" stroke="#3a3a3a" stroke-opacity="0.85" stroke-width="1"/><circle cx="416.6" cy="267.0" r="2.9" fill="#e9c125" stroke="#3a3a3a" stroke-opacity="0.85" stroke-width="1"/><circle cx="423.8" cy="261.5" r="2.9" fill="#e9c125" stroke="#3a3a3a" stroke-opacity="0.85" stroke-width="1"/><circle cx="323.7" cy="181.4" r="2.9" fill="#e9c125" stroke="#3a3a3a" stroke-opacity="0.85" stroke-width="1"/><circle cx="329.3" cy="188.7" r="2.9" fill="#8ea2d8" stroke="#3a3a3a" stroke-opacity="0.85" stroke-width="1"/><circle cx="324.4" cy="174.3" r="2.9" fill="#e9c125" stroke="#3a3a3a" stroke-opacity="0.85" stroke-width="1"/><circle cx="315.2" cy="186.4" r="2.9" fill="#8ea2d8" stroke="#3a3a3a" stroke-opacity="0.85" stroke-width="1"/><circle cx="320.5" cy="183.7" r="2.9" fill="#e9c125" stroke="#3a3a3a" stroke-opacity="0.85" stroke-width="1"/><circle cx="558.3" cy="76.2" r="2.9" fill="#e9c125" stroke="#3a3a3a" stroke-opacity="0.85" stroke-width="1"/><circle cx="560.1" cy="76.1" r="2.9" fill="#8ea2d8" stroke="#3a3a3a" stroke-opacity="0.85" stroke-width="1"/><circle cx="562.6" cy="75.2" r="2.9" fill="#8ea2d8" stroke="#3a3a3a" stroke-opacity="0.85" stroke-width="1"/><circle cx="557.0" cy="82.4" r="2.9" fill="#8ea2d8" stroke="#3a3a3a" stroke-opacity="0.85" stroke-width="1"/><circle cx="562.0" cy="67.4" r="2.9" fill="#8ea2d8" stroke="#3a3a3a" stroke-opacity="0.85" stroke-width="1"/><circle cx="565.0" cy="73.3" r="2.9" fill="#e9c125" stroke="#3a3a3a" stroke-opacity="0.85" stroke-width="1"/><circle cx="559.3" cy="64.8" r="2.9" fill="#e9c125" stroke="#3a3a3a" stroke-opacity="0.85" stroke-width="1"/><circle cx="322.4" cy="257.9" r="2.9" fill="#e9c125" stroke="#3a3a3a" stroke-opacity="0.85" stroke-width="1"/><circle cx="328.4" cy="259.7" r="2.9" fill="#8ea2d8" stroke="#3a3a3a" stroke-opacity="0.85" stroke-width="1"/><circle cx="318.0" cy="268.0" r="2.9" fill="#eea37c" stroke="#3a3a3a" stroke-opacity="0.85" stroke-width="1"/><circle cx="325.3" cy="262.8" r="2.9" fill="#e9c125" stroke="#3a3a3a" stroke-opacity="0.85" stroke-width="1"/><circle cx="321.0" cy="254.8" r="2.9" fill="#eea37c" stroke="#3a3a3a" stroke-opacity="0.85" stroke-width="1"/><circle cx="317.3" cy="254.5" r="2.9" fill="#8ea2d8" stroke="#3a3a3a" stroke-opacity="0.85" stroke-width="1"/><circle cx="278.8" cy="241.1" r="2.9" fill="#e9c125" stroke="#3a3a3a" stroke-opacity="0.85" stroke-width="1"/><circle cx="280.3" cy="250.9" r="2.9" fill="#8ea2d8" stroke="#3a3a3a" stroke-opacity="0.85" stroke-width="1"/><circle cx="286.3" cy="249.9" r="2.9" fill="#8ea2d8" stroke="#3a3a3a" stroke-opacity="0.85" stroke-width="1"/><circle cx="376.6" cy="226.3" r="2.9" fill="#8ea2d8" stroke="#3a3a3a" stroke-opacity="0.85" stroke-width="1"/><circle cx="378.1" cy="224.1" r="2.9" fill="#e9c125" stroke="#3a3a3a" stroke-opacity="0.85" stroke-width="1"/><circle cx="373.8" cy="229.0" r="2.9" fill="#e9c125" stroke="#3a3a3a" stroke-opacity="0.85" stroke-width="1"/><circle cx="541.1" cy="105.6" r="2.9" fill="#e9c125" stroke="#3a3a3a" stroke-opacity="0.85" stroke-width="1"/><circle cx="543.1" cy="100.5" r="2.9" fill="#e9c125" stroke="#3a3a3a" stroke-opacity="0.85" stroke-width="1"/><circle cx="578.5" cy="75.9" r="2.9" fill="#8ea2d8" stroke="#3a3a3a" stroke-opacity="0.85" stroke-width="1"/><circle cx="575.9" cy="82.8" r="2.9" fill="#e9c125" stroke="#3a3a3a" stroke-opacity="0.85" stroke-width="1"/><circle cx="572.2" cy="74.1" r="2.9" fill="#8ea2d8" stroke="#3a3a3a" stroke-opacity="0.85" stroke-width="1"/><circle cx="570.8" cy="73.5" r="2.9" fill="#8ea2d8" stroke="#3a3a3a" stroke-opacity="0.85" stroke-width="1"/><circle cx="570.4" cy="76.9" r="2.9" fill="#e9c125" stroke="#3a3a3a" stroke-opacity="0.85" stroke-width="1"/><circle cx="581.0" cy="75.4" r="2.9" fill="#8ea2d8" stroke="#3a3a3a" stroke-opacity="0.85" stroke-width="1"/><circle cx="566.6" cy="83.3" r="2.9" fill="#8ea2d8" stroke="#3a3a3a" stroke-opacity="0.85" stroke-width="1"/><circle cx="316.0" cy="197.1" r="2.9" fill="#e9c125" stroke="#3a3a3a" stroke-opacity="0.85" stroke-width="1"/><circle cx="310.7" cy="192.3" r="2.9" fill="#e9c125" stroke="#3a3a3a" stroke-opacity="0.85" stroke-width="1"/><circle cx="154.3" cy="243.1" r="2.9" fill="#f0a0c6" stroke="#3a3a3a" stroke-opacity="0.85" stroke-width="1"/><circle cx="151.1" cy="242.3" r="2.9" fill="#e9c125" stroke="#3a3a3a" stroke-opacity="0.85" stroke-width="1"/><circle cx="150.2" cy="240.2" r="2.9" fill="#8ea2d8" stroke="#3a3a3a" stroke-opacity="0.85" stroke-width="1"/><circle cx="155.7" cy="239.8" r="2.9" fill="#9fae8a" stroke="#3a3a3a" stroke-opacity="0.85" stroke-width="1"/><circle cx="160.8" cy="237.2" r="2.9" fill="#e9c125" stroke="#3a3a3a" stroke-opacity="0.85" stroke-width="1"/><circle cx="149.8" cy="248.2" r="2.9" fill="#b59bd2" stroke="#3a3a3a" stroke-opacity="0.85" stroke-width="1"/><circle cx="149.6" cy="244.6" r="2.9" fill="#e9c125" stroke="#3a3a3a" stroke-opacity="0.85" stroke-width="1"/><circle cx="562.1" cy="124.8" r="2.9" fill="#e9c125" stroke="#3a3a3a" stroke-opacity="0.85" stroke-width="1"/><circle cx="560.9" cy="121.3" r="2.9" fill="#8ea2d8" stroke="#3a3a3a" stroke-opacity="0.85" stroke-width="1"/><circle cx="242.3" cy="262.1" r="2.9" fill="#e9c125" stroke="#3a3a3a" stroke-opacity="0.85" stroke-width="1"/><circle cx="245.2" cy="256.5" r="2.9" fill="#e9c125" stroke="#3a3a3a" stroke-opacity="0.85" stroke-width="1"/><circle cx="446.8" cy="267.1" r="2.9" fill="#8ea2d8" stroke="#3a3a3a" stroke-opacity="0.85" stroke-width="1"/><circle cx="447.3" cy="269.5" r="2.9" fill="#e9c125" stroke="#3a3a3a" stroke-opacity="0.85" stroke-width="1"/><circle cx="446.9" cy="268.0" r="2.9" fill="#b59bd2" stroke="#3a3a3a" stroke-opacity="0.85" stroke-width="1"/><circle cx="444.7" cy="265.8" r="2.9" fill="#e9c125" stroke="#3a3a3a" stroke-opacity="0.85" stroke-width="1"/><circle cx="449.4" cy="267.2" r="2.9" fill="#e9c125" stroke="#3a3a3a" stroke-opacity="0.85" stroke-width="1"/><circle cx="337.5" cy="159.0" r="2.9" fill="#e9c125" stroke="#3a3a3a" stroke-opacity="0.85" stroke-width="1"/><circle cx="345.0" cy="151.2" r="2.9" fill="#eea37c" stroke="#3a3a3a" stroke-opacity="0.85" stroke-width="1"/><circle cx="347.2" cy="153.0" r="2.9" fill="#e9c125" stroke="#3a3a3a" stroke-opacity="0.85" stroke-width="1"/><circle cx="224.6" cy="259.9" r="2.9" fill="#8ea2d8" stroke="#3a3a3a" stroke-opacity="0.85" stroke-width="1"/><circle cx="221.8" cy="254.4" r="2.9" fill="#8ea2d8" stroke="#3a3a3a" stroke-opacity="0.85" stroke-width="1"/><circle cx="231.0" cy="259.4" r="2.9" fill="#e9c125" stroke="#3a3a3a" stroke-opacity="0.85" stroke-width="1"/><circle cx="549.3" cy="123.7" r="2.9" fill="#b59bd2" stroke="#3a3a3a" stroke-opacity="0.85" stroke-width="1"/><circle cx="557.5" cy="127.4" r="2.9" fill="#e9c125" stroke="#3a3a3a" stroke-opacity="0.85" stroke-width="1"/><circle cx="550.8" cy="116.3" r="2.9" fill="#e9c125" stroke="#3a3a3a" stroke-opacity="0.85" stroke-width="1"/><circle cx="550.6" cy="131.0" r="2.9" fill="#8ea2d8" stroke="#3a3a3a" stroke-opacity="0.85" stroke-width="1"/><circle cx="556.4" cy="126.1" r="2.9" fill="#9f918a" stroke="#3a3a3a" stroke-opacity="0.85" stroke-width="1"/><circle cx="558.6" cy="86.7" r="2.9" fill="#e9c125" stroke="#3a3a3a" stroke-opacity="0.85" stroke-width="1"/><circle cx="565.2" cy="79.1" r="2.9" fill="#8ea2d8" stroke="#3a3a3a" stroke-opacity="0.85" stroke-width="1"/><circle cx="558.3" cy="79.4" r="2.9" fill="#8ea2d8" stroke="#3a3a3a" stroke-opacity="0.85" stroke-width="1"/><circle cx="270.4" cy="245.2" r="2.9" fill="#e9c125" stroke="#3a3a3a" stroke-opacity="0.85" stroke-width="1"/><circle cx="267.6" cy="235.0" r="2.9" fill="#b59bd2" stroke="#3a3a3a" stroke-opacity="0.85" stroke-width="1"/><circle cx="258.8" cy="230.1" r="2.9" fill="#8ea2d8" stroke="#3a3a3a" stroke-opacity="0.85" stroke-width="1"/><circle cx="271.8" cy="161.4" r="2.9" fill="#8ea2d8" stroke="#3a3a3a" stroke-opacity="0.85" stroke-width="1"/><circle cx="287.5" cy="168.9" r="2.9" fill="#e9c125" stroke="#3a3a3a" stroke-opacity="0.85" stroke-width="1"/><circle cx="247.3" cy="159.1" r="2.9" fill="#e9c125" stroke="#3a3a3a" stroke-opacity="0.85" stroke-width="1"/><circle cx="418.5" cy="253.1" r="2.9" fill="#8ea2d8" stroke="#3a3a3a" stroke-opacity="0.85" stroke-width="1"/><circle cx="431.9" cy="256.5" r="2.9" fill="#8ea2d8" stroke="#3a3a3a" stroke-opacity="0.85" stroke-width="1"/><circle cx="413.6" cy="249.3" r="2.9" fill="#e9c125" stroke="#3a3a3a" stroke-opacity="0.85" stroke-width="1"/><circle cx="424.7" cy="255.1" r="2.9" fill="#e9c125" stroke="#3a3a3a" stroke-opacity="0.85" stroke-width="1"/><circle cx="419.4" cy="258.1" r="2.9" fill="#8ea2d8" stroke="#3a3a3a" stroke-opacity="0.85" stroke-width="1"/><circle cx="421.5" cy="258.3" r="2.9" fill="#e9c125" stroke="#3a3a3a" stroke-opacity="0.85" stroke-width="1"/><circle cx="523.9" cy="83.1" r="2.9" fill="#8ea2d8" stroke="#3a3a3a" stroke-opacity="0.85" stroke-width="1"/><circle cx="521.6" cy="82.3" r="2.9" fill="#8ea2d8" stroke="#3a3a3a" stroke-opacity="0.85" stroke-width="1"/><circle cx="194.4" cy="237.5" r="2.9" fill="#e9c125" stroke="#3a3a3a" stroke-opacity="0.85" stroke-width="1"/><circle cx="191.6" cy="236.3" r="2.9" fill="#e9c125" stroke="#3a3a3a" stroke-opacity="0.85" stroke-width="1"/><circle cx="193.8" cy="236.0" r="2.9" fill="#e9c125" stroke="#3a3a3a" stroke-opacity="0.85" stroke-width="1"/><circle cx="190.1" cy="242.8" r="2.9" fill="#e9c125" stroke="#3a3a3a" stroke-opacity="0.85" stroke-width="1"/><circle cx="207.9" cy="241.3" r="2.9" fill="#8ea2d8" stroke="#3a3a3a" stroke-opacity="0.85" stroke-width="1"/><circle cx="191.3" cy="234.1" r="2.9" fill="#e9c125" stroke="#3a3a3a" stroke-opacity="0.85" stroke-width="1"/><circle cx="297.5" cy="219.6" r="2.9" fill="#8ea2d8" stroke="#3a3a3a" stroke-opacity="0.85" stroke-width="1"/><circle cx="297.9" cy="219.7" r="2.9" fill="#e9c125" stroke="#3a3a3a" stroke-opacity="0.85" stroke-width="1"/><circle cx="299.7" cy="222.6" r="2.9" fill="#e9c125" stroke="#3a3a3a" stroke-opacity="0.85" stroke-width="1"/><circle cx="297.2" cy="212.3" r="2.9" fill="#e9c125" stroke="#3a3a3a" stroke-opacity="0.85" stroke-width="1"/><circle cx="289.3" cy="225.0" r="2.9" fill="#8ea2d8" stroke="#3a3a3a" stroke-opacity="0.85" stroke-width="1"/><circle cx="289.0" cy="222.0" r="2.9" fill="#8ea2d8" stroke="#3a3a3a" stroke-opacity="0.85" stroke-width="1"/><circle cx="215.7" cy="165.3" r="2.9" fill="#8ea2d8" stroke="#3a3a3a" stroke-opacity="0.85" stroke-width="1"/><circle cx="214.6" cy="167.0" r="2.9" fill="#e9c125" stroke="#3a3a3a" stroke-opacity="0.85" stroke-width="1"/><circle cx="218.8" cy="167.5" r="2.9" fill="#e9c125" stroke="#3a3a3a" stroke-opacity="0.85" stroke-width="1"/><circle cx="224.2" cy="160.3" r="2.9" fill="#e9c125" stroke="#3a3a3a" stroke-opacity="0.85" stroke-width="1"/><circle cx="215.3" cy="166.2" r="2.9" fill="#eea37c" stroke="#3a3a3a" stroke-opacity="0.85" stroke-width="1"/><circle cx="211.7" cy="170.5" r="2.9" fill="#8ea2d8" stroke="#3a3a3a" stroke-opacity="0.85" stroke-width="1"/><circle cx="169.5" cy="282.9" r="2.9" fill="#8ea2d8" stroke="#3a3a3a" stroke-opacity="0.85" stroke-width="1"/><circle cx="167.7" cy="279.1" r="2.9" fill="#e9c125" stroke="#3a3a3a" stroke-opacity="0.85" stroke-width="1"/><circle cx="172.2" cy="278.2" r="2.9" fill="#e9c125" stroke="#3a3a3a" stroke-opacity="0.85" stroke-width="1"/><circle cx="171.2" cy="277.6" r="2.9" fill="#e9c125" stroke="#3a3a3a" stroke-opacity="0.85" stroke-width="1"/><circle cx="462.6" cy="180.2" r="2.9" fill="#8ea2d8" stroke="#3a3a3a" stroke-opacity="0.85" stroke-width="1"/><circle cx="465.2" cy="174.9" r="2.9" fill="#e9c125" stroke="#3a3a3a" stroke-opacity="0.85" stroke-width="1"/><circle cx="461.9" cy="167.2" r="2.9" fill="#e9c125" stroke="#3a3a3a" stroke-opacity="0.85" stroke-width="1"/><circle cx="465.5" cy="169.5" r="2.9" fill="#e9c125" stroke="#3a3a3a" stroke-opacity="0.85" stroke-width="1"/><circle cx="461.2" cy="175.0" r="2.9" fill="#e9c125" stroke="#3a3a3a" stroke-opacity="0.85" stroke-width="1"/><circle cx="470.1" cy="173.2" r="2.9" fill="#8ea2d8" stroke="#3a3a3a" stroke-opacity="0.85" stroke-width="1"/><circle cx="240.0" cy="225.5" r="2.9" fill="#e9c125" stroke="#3a3a3a" stroke-opacity="0.85" stroke-width="1"/><circle cx="234.6" cy="215.7" r="2.9" fill="#8ea2d8" stroke="#3a3a3a" stroke-opacity="0.85" stroke-width="1"/><circle cx="238.0" cy="223.5" r="2.9" fill="#e9c125" stroke="#3a3a3a" stroke-opacity="0.85" stroke-width="1"/><circle cx="237.5" cy="217.8" r="2.9" fill="#8ea2d8" stroke="#3a3a3a" stroke-opacity="0.85" stroke-width="1"/><circle cx="235.8" cy="230.7" r="2.9" fill="#e9c125" stroke="#3a3a3a" stroke-opacity="0.85" stroke-width="1"/><circle cx="234.3" cy="214.9" r="2.9" fill="#8ea2d8" stroke="#3a3a3a" stroke-opacity="0.85" stroke-width="1"/><circle cx="225.6" cy="218.5" r="2.9" fill="#b59bd2" stroke="#3a3a3a" stroke-opacity="0.85" stroke-width="1"/><circle cx="514.1" cy="155.5" r="2.9" fill="#8ea2d8" stroke="#3a3a3a" stroke-opacity="0.85" stroke-width="1"/><circle cx="520.9" cy="162.3" r="2.9" fill="#e9c125" stroke="#3a3a3a" stroke-opacity="0.85" stroke-width="1"/><circle cx="520.7" cy="163.5" r="2.9" fill="#e9c125" stroke="#3a3a3a" stroke-opacity="0.85" stroke-width="1"/><circle cx="509.4" cy="161.7" r="2.9" fill="#e9c125" stroke="#3a3a3a" stroke-opacity="0.85" stroke-width="1"/><circle cx="252.3" cy="216.8" r="2.9" fill="#b59bd2" stroke="#3a3a3a" stroke-opacity="0.85" stroke-width="1"/><circle cx="263.4" cy="215.2" r="2.9" fill="#e9c125" stroke="#3a3a3a" stroke-opacity="0.85" stroke-width="1"/><circle cx="254.3" cy="212.5" r="2.9" fill="#e9c125" stroke="#3a3a3a" stroke-opacity="0.85" stroke-width="1"/><circle cx="243.3" cy="217.8" r="2.9" fill="#e9c125" stroke="#3a3a3a" stroke-opacity="0.85" stroke-width="1"/><circle cx="172.4" cy="255.6" r="2.9" fill="#e9c125" stroke="#3a3a3a" stroke-opacity="0.85" stroke-width="1"/><circle cx="171.2" cy="253.6" r="2.9" fill="#8ea2d8" stroke="#3a3a3a" stroke-opacity="0.85" stroke-width="1"/><circle cx="165.4" cy="249.3" r="2.9" fill="#f0a0c6" stroke="#3a3a3a" stroke-opacity="0.85" stroke-width="1"/><circle cx="169.3" cy="253.8" r="2.9" fill="#8ea2d8" stroke="#3a3a3a" stroke-opacity="0.85" stroke-width="1"/><circle cx="161.5" cy="256.8" r="2.9" fill="#e9c125" stroke="#3a3a3a" stroke-opacity="0.85" stroke-width="1"/><circle cx="166.1" cy="264.6" r="2.9" fill="#8ea2d8" stroke="#3a3a3a" stroke-opacity="0.85" stroke-width="1"/><circle cx="168.2" cy="260.2" r="2.9" fill="#e9c125" stroke="#3a3a3a" stroke-opacity="0.85" stroke-width="1"/><circle cx="226.1" cy="160.8" r="2.9" fill="#8ea2d8" stroke="#3a3a3a" stroke-opacity="0.85" stroke-width="1"/><circle cx="218.6" cy="168.4" r="2.9" fill="#8ea2d8" stroke="#3a3a3a" stroke-opacity="0.85" stroke-width="1"/><circle cx="207.8" cy="170.7" r="2.9" fill="#e9c125" stroke="#3a3a3a" stroke-opacity="0.85" stroke-width="1"/><circle cx="432.0" cy="144.8" r="2.9" fill="#8ea2d8" stroke="#3a3a3a" stroke-opacity="0.85" stroke-width="1"/><circle cx="429.8" cy="138.7" r="2.9" fill="#8ea2d8" stroke="#3a3a3a" stroke-opacity="0.85" stroke-width="1"/><circle cx="428.3" cy="151.4" r="2.9" fill="#e9c125" stroke="#3a3a3a" stroke-opacity="0.85" stroke-width="1"/><circle cx="424.1" cy="150.8" r="2.9" fill="#8ea2d8" stroke="#3a3a3a" stroke-opacity="0.85" stroke-width="1"/><circle cx="431.4" cy="137.8" r="2.9" fill="#e9c125" stroke="#3a3a3a" stroke-opacity="0.85" stroke-width="1"/><circle cx="470.1" cy="198.9" r="2.9" fill="#e9c125" stroke="#3a3a3a" stroke-opacity="0.85" stroke-width="1"/><circle cx="467.6" cy="198.2" r="2.9" fill="#e9c125" stroke="#3a3a3a" stroke-opacity="0.85" stroke-width="1"/><circle cx="475.9" cy="201.9" r="2.9" fill="#eea37c" stroke="#3a3a3a" stroke-opacity="0.85" stroke-width="1"/><circle cx="472.0" cy="200.8" r="2.9" fill="#8ea2d8" stroke="#3a3a3a" stroke-opacity="0.85" stroke-width="1"/><circle cx="325.6" cy="208.6" r="2.9" fill="#e9c125" stroke="#3a3a3a" stroke-opacity="0.85" stroke-width="1"/><circle cx="340.7" cy="218.0" r="2.9" fill="#b59bd2" stroke="#3a3a3a" stroke-opacity="0.85" stroke-width="1"/><circle cx="332.9" cy="208.1" r="2.9" fill="#8ea2d8" stroke="#3a3a3a" stroke-opacity="0.85" stroke-width="1"/><circle cx="332.9" cy="198.8" r="2.9" fill="#b59bd2" stroke="#3a3a3a" stroke-opacity="0.85" stroke-width="1"/><circle cx="336.2" cy="195.1" r="2.9" fill="#e9c125" stroke="#3a3a3a" stroke-opacity="0.85" stroke-width="1"/><circle cx="238.7" cy="214.5" r="2.9" fill="#e9c125" stroke="#3a3a3a" stroke-opacity="0.85" stroke-width="1"/><circle cx="235.2" cy="222.6" r="2.9" fill="#8ea2d8" stroke="#3a3a3a" stroke-opacity="0.85" stroke-width="1"/><circle cx="239.2" cy="231.0" r="2.9" fill="#e9c125" stroke="#3a3a3a" stroke-opacity="0.85" stroke-width="1"/><circle cx="240.8" cy="227.0" r="2.9" fill="#e9c125" stroke="#3a3a3a" stroke-opacity="0.85" stroke-width="1"/><circle cx="240.6" cy="231.5" r="2.9" fill="#e9c125" stroke="#3a3a3a" stroke-opacity="0.85" stroke-width="1"/><circle cx="233.2" cy="160.6" r="2.9" fill="#e9c125" stroke="#3a3a3a" stroke-opacity="0.85" stroke-width="1"/><circle cx="243.8" cy="162.7" r="2.9" fill="#e9c125" stroke="#3a3a3a" stroke-opacity="0.85" stroke-width="1"/><circle cx="243.0" cy="147.6" r="2.9" fill="#e9c125" stroke="#3a3a3a" stroke-opacity="0.85" stroke-width="1"/><circle cx="391.8" cy="181.0" r="2.9" fill="#8ea2d8" stroke="#3a3a3a" stroke-opacity="0.85" stroke-width="1"/><circle cx="396.7" cy="194.9" r="2.9" fill="#b59bd2" stroke="#3a3a3a" stroke-opacity="0.85" stroke-width="1"/><circle cx="404.1" cy="183.1" r="2.9" fill="#8ea2d8" stroke="#3a3a3a" stroke-opacity="0.85" stroke-width="1"/><circle cx="307.5" cy="239.4" r="2.9" fill="#b59bd2" stroke="#3a3a3a" stroke-opacity="0.85" stroke-width="1"/><circle cx="306.7" cy="239.1" r="2.9" fill="#8ea2d8" stroke="#3a3a3a" stroke-opacity="0.85" stroke-width="1"/><circle cx="301.9" cy="241.0" r="2.9" fill="#eea37c" stroke="#3a3a3a" stroke-opacity="0.85" stroke-width="1"/><circle cx="298.0" cy="237.4" r="2.9" fill="#8ea2d8" stroke="#3a3a3a" stroke-opacity="0.85" stroke-width="1"/><circle cx="454.9" cy="248.5" r="2.9" fill="#8ea2d8" stroke="#3a3a3a" stroke-opacity="0.85" stroke-width="1"/><circle cx="440.7" cy="256.5" r="2.9" fill="#8ea2d8" stroke="#3a3a3a" stroke-opacity="0.85" stroke-width="1"/><circle cx="280.3" cy="221.6" r="2.9" fill="#e9c125" stroke="#3a3a3a" stroke-opacity="0.85" stroke-width="1"/><circle cx="282.3" cy="225.6" r="2.9" fill="#e9c125" stroke="#3a3a3a" stroke-opacity="0.85" stroke-width="1"/><circle cx="289.0" cy="226.7" r="2.9" fill="#e9c125" stroke="#3a3a3a" stroke-opacity="0.85" stroke-width="1"/><circle cx="281.2" cy="236.3" r="2.9" fill="#e9c125" stroke="#3a3a3a" stroke-opacity="0.85" stroke-width="1"/><circle cx="285.1" cy="222.9" r="2.9" fill="#8ea2d8" stroke="#3a3a3a" stroke-opacity="0.85" stroke-width="1"/><circle cx="286.4" cy="231.3" r="2.9" fill="#e9c125" stroke="#3a3a3a" stroke-opacity="0.85" stroke-width="1"/><circle cx="301.2" cy="148.9" r="2.9" fill="#8ea2d8" stroke="#3a3a3a" stroke-opacity="0.85" stroke-width="1"/><circle cx="487.0" cy="214.5" r="2.9" fill="#e9c125" stroke="#3a3a3a" stroke-opacity="0.85" stroke-width="1"/><circle cx="473.1" cy="215.1" r="2.9" fill="#e9c125" stroke="#3a3a3a" stroke-opacity="0.85" stroke-width="1"/><circle cx="491.7" cy="210.0" r="2.9" fill="#e9c125" stroke="#3a3a3a" stroke-opacity="0.85" stroke-width="1"/><circle cx="479.9" cy="204.0" r="2.9" fill="#e9c125" stroke="#3a3a3a" stroke-opacity="0.85" stroke-width="1"/><circle cx="471.2" cy="214.1" r="2.9" fill="#8ea2d8" stroke="#3a3a3a" stroke-opacity="0.85" stroke-width="1"/><circle cx="476.1" cy="216.6" r="2.9" fill="#e9c125" stroke="#3a3a3a" stroke-opacity="0.85" stroke-width="1"/><circle cx="485.9" cy="209.2" r="2.9" fill="#e9c125" stroke="#3a3a3a" stroke-opacity="0.85" stroke-width="1"/><circle cx="237.0" cy="200.1" r="2.9" fill="#e9c125" stroke="#3a3a3a" stroke-opacity="0.85" stroke-width="1"/><circle cx="250.6" cy="252.8" r="2.9" fill="#e9c125" stroke="#3a3a3a" stroke-opacity="0.85" stroke-width="1"/><circle cx="237.6" cy="252.8" r="2.9" fill="#e9c125" stroke="#3a3a3a" stroke-opacity="0.85" stroke-width="1"/><circle cx="254.6" cy="255.3" r="2.9" fill="#8ea2d8" stroke="#3a3a3a" stroke-opacity="0.85" stroke-width="1"/><circle cx="251.7" cy="250.6" r="2.9" fill="#e9c125" stroke="#3a3a3a" stroke-opacity="0.85" stroke-width="1"/><circle cx="259.8" cy="255.4" r="2.9" fill="#9f918a" stroke="#3a3a3a" stroke-opacity="0.85" stroke-width="1"/><circle cx="172.8" cy="283.6" r="2.9" fill="#e9c125" stroke="#3a3a3a" stroke-opacity="0.85" stroke-width="1"/><circle cx="160.6" cy="288.1" r="2.9" fill="#8ea2d8" stroke="#3a3a3a" stroke-opacity="0.85" stroke-width="1"/><circle cx="356.9" cy="164.3" r="2.9" fill="#8ea2d8" stroke="#3a3a3a" stroke-opacity="0.85" stroke-width="1"/><circle cx="359.3" cy="158.9" r="2.9" fill="#8ea2d8" stroke="#3a3a3a" stroke-opacity="0.85" stroke-width="1"/><circle cx="419.8" cy="218.0" r="2.9" fill="#8ea2d8" stroke="#3a3a3a" stroke-opacity="0.85" stroke-width="1"/><circle cx="423.4" cy="222.1" r="2.9" fill="#e9c125" stroke="#3a3a3a" stroke-opacity="0.85" stroke-width="1"/><circle cx="415.6" cy="226.9" r="2.9" fill="#e9c125" stroke="#3a3a3a" stroke-opacity="0.85" stroke-width="1"/><circle cx="229.1" cy="224.1" r="2.9" fill="#e9c125" stroke="#3a3a3a" stroke-opacity="0.85" stroke-width="1"/><circle cx="228.2" cy="232.2" r="2.9" fill="#8ea2d8" stroke="#3a3a3a" stroke-opacity="0.85" stroke-width="1"/><circle cx="228.2" cy="230.0" r="2.9" fill="#e9c125" stroke="#3a3a3a" stroke-opacity="0.85" stroke-width="1"/><circle cx="233.6" cy="230.8" r="2.9" fill="#e9c125" stroke="#3a3a3a" stroke-opacity="0.85" stroke-width="1"/><circle cx="186.7" cy="266.2" r="2.9" fill="#eea37c" stroke="#3a3a3a" stroke-opacity="0.85" stroke-width="1"/><circle cx="182.9" cy="276.5" r="2.9" fill="#8ea2d8" stroke="#3a3a3a" stroke-opacity="0.85" stroke-width="1"/><circle cx="269.9" cy="220.5" r="2.9" fill="#e9c125" stroke="#3a3a3a" stroke-opacity="0.85" stroke-width="1"/><circle cx="262.3" cy="215.6" r="2.9" fill="#e9c125" stroke="#3a3a3a" stroke-opacity="0.85" stroke-width="1"/><circle cx="270.2" cy="223.4" r="2.9" fill="#b59bd2" stroke="#3a3a3a" stroke-opacity="0.85" stroke-width="1"/><circle cx="270.9" cy="218.8" r="2.9" fill="#8ea2d8" stroke="#3a3a3a" stroke-opacity="0.85" stroke-width="1"/><circle cx="267.3" cy="222.1" r="2.9" fill="#8ea2d8" stroke="#3a3a3a" stroke-opacity="0.85" stroke-width="1"/><circle cx="271.9" cy="221.2" r="2.9" fill="#8ea2d8" stroke="#3a3a3a" stroke-opacity="0.85" stroke-width="1"/><circle cx="208.5" cy="163.1" r="2.9" fill="#9f918a" stroke="#3a3a3a" stroke-opacity="0.85" stroke-width="1"/><circle cx="227.3" cy="166.8" r="2.9" fill="#e9c125" stroke="#3a3a3a" stroke-opacity="0.85" stroke-width="1"/><circle cx="215.2" cy="162.7" r="2.9" fill="#8ea2d8" stroke="#3a3a3a" stroke-opacity="0.85" stroke-width="1"/><circle cx="213.7" cy="169.1" r="2.9" fill="#e9c125" stroke="#3a3a3a" stroke-opacity="0.85" stroke-width="1"/><circle cx="205.9" cy="173.3" r="2.9" fill="#e9c125" stroke="#3a3a3a" stroke-opacity="0.85" stroke-width="1"/><circle cx="332.0" cy="234.3" r="2.9" fill="#8ea2d8" stroke="#3a3a3a" stroke-opacity="0.85" stroke-width="1"/><circle cx="321.9" cy="223.4" r="2.9" fill="#8ea2d8" stroke="#3a3a3a" stroke-opacity="0.85" stroke-width="1"/><circle cx="564.2" cy="150.1" r="2.9" fill="#eea37c" stroke="#3a3a3a" stroke-opacity="0.85" stroke-width="1"/><circle cx="555.2" cy="148.4" r="2.9" fill="#e9c125" stroke="#3a3a3a" stroke-opacity="0.85" stroke-width="1"/><circle cx="548.3" cy="147.7" r="2.9" fill="#e9c125" stroke="#3a3a3a" stroke-opacity="0.85" stroke-width="1"/><circle cx="507.1" cy="112.2" r="2.9" fill="#e9c125" stroke="#3a3a3a" stroke-opacity="0.85" stroke-width="1"/><circle cx="505.7" cy="107.8" r="2.9" fill="#e9c125" stroke="#3a3a3a" stroke-opacity="0.85" stroke-width="1"/><circle cx="506.6" cy="115.9" r="2.9" fill="#8ea2d8" stroke="#3a3a3a" stroke-opacity="0.85" stroke-width="1"/><circle cx="494.0" cy="116.1" r="2.9" fill="#8ea2d8" stroke="#3a3a3a" stroke-opacity="0.85" stroke-width="1"/><circle cx="510.0" cy="115.0" r="2.9" fill="#e9c125" stroke="#3a3a3a" stroke-opacity="0.85" stroke-width="1"/><circle cx="516.1" cy="107.5" r="2.9" fill="#8ea2d8" stroke="#3a3a3a" stroke-opacity="0.85" stroke-width="1"/><circle cx="193.4" cy="189.0" r="2.9" fill="#b59bd2" stroke="#3a3a3a" stroke-opacity="0.85" stroke-width="1"/><circle cx="204.1" cy="184.0" r="2.9" fill="#e9c125" stroke="#3a3a3a" stroke-opacity="0.85" stroke-width="1"/><circle cx="204.4" cy="192.8" r="2.9" fill="#8ea2d8" stroke="#3a3a3a" stroke-opacity="0.85" stroke-width="1"/><circle cx="535.8" cy="46.0" r="2.9" fill="#8ea2d8" stroke="#3a3a3a" stroke-opacity="0.85" stroke-width="1"/><circle cx="546.0" cy="53.4" r="2.9" fill="#eea37c" stroke="#3a3a3a" stroke-opacity="0.85" stroke-width="1"/><circle cx="176.4" cy="198.2" r="2.9" fill="#e9c125" stroke="#3a3a3a" stroke-opacity="0.85" stroke-width="1"/><circle cx="171.5" cy="204.5" r="2.9" fill="#e9c125" stroke="#3a3a3a" stroke-opacity="0.85" stroke-width="1"/><circle cx="171.7" cy="204.4" r="2.9" fill="#e9c125" stroke="#3a3a3a" stroke-opacity="0.85" stroke-width="1"/><circle cx="177.6" cy="200.5" r="2.9" fill="#8ea2d8" stroke="#3a3a3a" stroke-opacity="0.85" stroke-width="1"/><circle cx="485.0" cy="168.8" r="2.9" fill="#e9c125" stroke="#3a3a3a" stroke-opacity="0.85" stroke-width="1"/><circle cx="487.9" cy="159.7" r="2.9" fill="#e9c125" stroke="#3a3a3a" stroke-opacity="0.85" stroke-width="1"/><circle cx="536.2" cy="88.8" r="2.9" fill="#e9c125" stroke="#3a3a3a" stroke-opacity="0.85" stroke-width="1"/><circle cx="533.5" cy="83.1" r="2.9" fill="#8ea2d8" stroke="#3a3a3a" stroke-opacity="0.85" stroke-width="1"/><circle cx="534.8" cy="94.2" r="2.9" fill="#8ea2d8" stroke="#3a3a3a" stroke-opacity="0.85" stroke-width="1"/><circle cx="540.0" cy="85.2" r="2.9" fill="#e9c125" stroke="#3a3a3a" stroke-opacity="0.85" stroke-width="1"/><circle cx="538.7" cy="91.2" r="2.9" fill="#e9c125" stroke="#3a3a3a" stroke-opacity="0.85" stroke-width="1"/><circle cx="530.4" cy="89.9" r="2.9" fill="#e9c125" stroke="#3a3a3a" stroke-opacity="0.85" stroke-width="1"/><circle cx="300.9" cy="224.0" r="2.9" fill="#8ea2d8" stroke="#3a3a3a" stroke-opacity="0.85" stroke-width="1"/><circle cx="301.4" cy="227.7" r="2.9" fill="#e9c125" stroke="#3a3a3a" stroke-opacity="0.85" stroke-width="1"/><circle cx="301.0" cy="231.3" r="2.9" fill="#e9c125" stroke="#3a3a3a" stroke-opacity="0.85" stroke-width="1"/><circle cx="293.3" cy="222.5" r="2.9" fill="#e9c125" stroke="#3a3a3a" stroke-opacity="0.85" stroke-width="1"/><circle cx="290.9" cy="228.3" r="2.9" fill="#e9c125" stroke="#3a3a3a" stroke-opacity="0.85" stroke-width="1"/><circle cx="189.5" cy="252.5" r="2.9" fill="#8ea2d8" stroke="#3a3a3a" stroke-opacity="0.85" stroke-width="1"/><circle cx="179.5" cy="264.0" r="2.9" fill="#8ea2d8" stroke="#3a3a3a" stroke-opacity="0.85" stroke-width="1"/><circle cx="193.2" cy="266.0" r="2.9" fill="#e9c125" stroke="#3a3a3a" stroke-opacity="0.85" stroke-width="1"/><circle cx="184.4" cy="261.8" r="2.9" fill="#eea37c" stroke="#3a3a3a" stroke-opacity="0.85" stroke-width="1"/><circle cx="187.9" cy="262.7" r="2.9" fill="#e9c125" stroke="#3a3a3a" stroke-opacity="0.85" stroke-width="1"/><circle cx="194.8" cy="252.4" r="2.9" fill="#e9c125" stroke="#3a3a3a" stroke-opacity="0.85" stroke-width="1"/><circle cx="183.9" cy="253.8" r="2.9" fill="#e9c125" stroke="#3a3a3a" stroke-opacity="0.85" stroke-width="1"/><circle cx="513.4" cy="170.7" r="2.9" fill="#e9c125" stroke="#3a3a3a" stroke-opacity="0.85" stroke-width="1"/><circle cx="311.0" cy="250.8" r="2.9" fill="#8ea2d8" stroke="#3a3a3a" stroke-opacity="0.85" stroke-width="1"/><circle cx="347.3" cy="191.9" r="2.9" fill="#e9c125" stroke="#3a3a3a" stroke-opacity="0.85" stroke-width="1"/><circle cx="467.8" cy="139.0" r="2.9" fill="#e9c125" stroke="#3a3a3a" stroke-opacity="0.85" stroke-width="1"/><circle cx="365.0" cy="203.9" r="2.9" fill="#e9c125" stroke="#3a3a3a" stroke-opacity="0.85" stroke-width="1"/><circle cx="328.6" cy="176.0" r="2.9" fill="#e9c125" stroke="#3a3a3a" stroke-opacity="0.85" stroke-width="1"/><circle cx="427.6" cy="216.8" r="2.9" fill="#8ea2d8" stroke="#3a3a3a" stroke-opacity="0.85" stroke-width="1"/><circle cx="365.3" cy="164.6" r="2.9" fill="#e9c125" stroke="#3a3a3a" stroke-opacity="0.85" stroke-width="1"/><circle cx="596.0" cy="128.1" r="2.9" fill="#e9c125" stroke="#3a3a3a" stroke-opacity="0.85" stroke-width="1"/><circle cx="484.0" cy="124.6" r="2.9" fill="#e9c125" stroke="#3a3a3a" stroke-opacity="0.85" stroke-width="1"/><circle cx="421.9" cy="258.4" r="2.9" fill="#9f918a" stroke="#3a3a3a" stroke-opacity="0.85" stroke-width="1"/><circle cx="212.8" cy="274.6" r="2.9" fill="#8ea2d8" stroke="#3a3a3a" stroke-opacity="0.85" stroke-width="1"/><circle cx="267.5" cy="184.2" r="2.9" fill="#e9c125" stroke="#3a3a3a" stroke-opacity="0.85" stroke-width="1"/><circle cx="143.9" cy="248.2" r="2.9" fill="#eea37c" stroke="#3a3a3a" stroke-opacity="0.85" stroke-width="1"/><circle cx="203.0" cy="137.2" r="2.9" fill="#8ea2d8" stroke="#3a3a3a" stroke-opacity="0.85" stroke-width="1"/><circle cx="172.9" cy="250.1" r="2.9" fill="#e9c125" stroke="#3a3a3a" stroke-opacity="0.85" stroke-width="1"/><circle cx="490.2" cy="223.3" r="2.9" fill="#8ea2d8" stroke="#3a3a3a" stroke-opacity="0.85" stroke-width="1"/><circle cx="335.0" cy="244.5" r="2.9" fill="#8ea2d8" stroke="#3a3a3a" stroke-opacity="0.85" stroke-width="1"/><circle cx="390.4" cy="162.3" r="2.9" fill="#8ea2d8" stroke="#3a3a3a" stroke-opacity="0.85" stroke-width="1"/><circle cx="166.2" cy="181.2" r="2.9" fill="#8ea2d8" stroke="#3a3a3a" stroke-opacity="0.85" stroke-width="1"/><circle cx="223.7" cy="131.0" r="2.9" fill="#e9c125" stroke="#3a3a3a" stroke-opacity="0.85" stroke-width="1"/><circle cx="171.3" cy="221.0" r="2.9" fill="#8ea2d8" stroke="#3a3a3a" stroke-opacity="0.85" stroke-width="1"/><circle cx="222.6" cy="220.7" r="2.9" fill="#e9c125" stroke="#3a3a3a" stroke-opacity="0.85" stroke-width="1"/><circle cx="172.7" cy="277.3" r="2.9" fill="#e9c125" stroke="#3a3a3a" stroke-opacity="0.85" stroke-width="1"/><circle cx="202.5" cy="178.8" r="2.9" fill="#b59bd2" stroke="#3a3a3a" stroke-opacity="0.85" stroke-width="1"/><circle cx="204.3" cy="147.6" r="2.9" fill="#8ea2d8" stroke="#3a3a3a" stroke-opacity="0.85" stroke-width="1"/><circle cx="422.3" cy="248.7" r="2.9" fill="#9fae8a" stroke="#3a3a3a" stroke-opacity="0.85" stroke-width="1"/><circle cx="404.3" cy="277.0" r="2.9" fill="#e9c125" stroke="#3a3a3a" stroke-opacity="0.85" stroke-width="1"/><circle cx="568.3" cy="60.0" r="2.9" fill="#e9c125" stroke="#3a3a3a" stroke-opacity="0.85" stroke-width="1"/><circle cx="219.5" cy="196.3" r="2.9" fill="#8ea2d8" stroke="#3a3a3a" stroke-opacity="0.85" stroke-width="1"/><circle cx="498.0" cy="214.5" r="2.9" fill="#e9c125" stroke="#3a3a3a" stroke-opacity="0.85" stroke-width="1"/><circle cx="233.8" cy="138.7" r="2.9" fill="#e9c125" stroke="#3a3a3a" stroke-opacity="0.85" stroke-width="1"/><circle cx="307.5" cy="228.8" r="2.9" fill="#8ea2d8" stroke="#3a3a3a" stroke-opacity="0.85" stroke-width="1"/><circle cx="298.9" cy="209.2" r="2.9" fill="#eea37c" stroke="#3a3a3a" stroke-opacity="0.85" stroke-width="1"/><circle cx="231.5" cy="154.1" r="2.9" fill="#e9c125" stroke="#3a3a3a" stroke-opacity="0.85" stroke-width="1"/><circle cx="571.0" cy="80.8" r="2.9" fill="#8ea2d8" stroke="#3a3a3a" stroke-opacity="0.85" stroke-width="1"/><circle cx="422.9" cy="193.8" r="2.9" fill="#8ea2d8" stroke="#3a3a3a" stroke-opacity="0.85" stroke-width="1"/><circle cx="374.7" cy="233.3" r="2.9" fill="#e9c125" stroke="#3a3a3a" stroke-opacity="0.85" stroke-width="1"/><circle cx="174.4" cy="218.3" r="2.9" fill="#8ea2d8" stroke="#3a3a3a" stroke-opacity="0.85" stroke-width="1"/><circle cx="165.1" cy="259.7" r="2.9" fill="#9fae8a" stroke="#3a3a3a" stroke-opacity="0.85" stroke-width="1"/><circle cx="331.2" cy="214.4" r="2.9" fill="#e9c125" stroke="#3a3a3a" stroke-opacity="0.85" stroke-width="1"/><circle cx="588.0" cy="146.8" r="2.9" fill="#e9c125" stroke="#3a3a3a" stroke-opacity="0.85" stroke-width="1"/><circle cx="195.4" cy="251.0" r="2.9" fill="#e9c125" stroke="#3a3a3a" stroke-opacity="0.85" stroke-width="1"/><circle cx="450.8" cy="131.0" r="2.9" fill="#8ea2d8" stroke="#3a3a3a" stroke-opacity="0.85" stroke-width="1"/><circle cx="573.4" cy="70.3" r="2.9" fill="#b59bd2" stroke="#3a3a3a" stroke-opacity="0.85" stroke-width="1"/><circle cx="284.2" cy="190.2" r="2.9" fill="#8ea2d8" stroke="#3a3a3a" stroke-opacity="0.85" stroke-width="1"/><circle cx="521.7" cy="151.7" r="2.9" fill="#8ea2d8" stroke="#3a3a3a" stroke-opacity="0.85" stroke-width="1"/><circle cx="355.2" cy="216.6" r="2.9" fill="#e9c125" stroke="#3a3a3a" stroke-opacity="0.85" stroke-width="1"/><circle cx="410.5" cy="179.4" r="2.9" fill="#e9c125" stroke="#3a3a3a" stroke-opacity="0.85" stroke-width="1"/><circle cx="596.5" cy="122.6" r="2.9" fill="#8ea2d8" stroke="#3a3a3a" stroke-opacity="0.85" stroke-width="1"/><circle cx="399.7" cy="219.1" r="2.9" fill="#e9c125" stroke="#3a3a3a" stroke-opacity="0.85" stroke-width="1"/><circle cx="199.0" cy="189.3" r="2.9" fill="#8ea2d8" stroke="#3a3a3a" stroke-opacity="0.85" stroke-width="1"/><circle cx="336.2" cy="191.4" r="2.9" fill="#e9c125" stroke="#3a3a3a" stroke-opacity="0.85" stroke-width="1"/><circle cx="455.3" cy="201.0" r="2.9" fill="#b59bd2" stroke="#3a3a3a" stroke-opacity="0.85" stroke-width="1"/><circle cx="445.9" cy="158.8" r="2.9" fill="#8ea2d8" stroke="#3a3a3a" stroke-opacity="0.85" stroke-width="1"/><circle cx="578.2" cy="116.2" r="2.9" fill="#8ea2d8" stroke="#3a3a3a" stroke-opacity="0.85" stroke-width="1"/><circle cx="323.8" cy="223.1" r="2.9" fill="#e9c125" stroke="#3a3a3a" stroke-opacity="0.85" stroke-width="1"/><circle cx="436.7" cy="204.3" r="2.9" fill="#e9c125" stroke="#3a3a3a" stroke-opacity="0.85" stroke-width="1"/><circle cx="442.3" cy="218.5" r="2.9" fill="#8ea2d8" stroke="#3a3a3a" stroke-opacity="0.85" stroke-width="1"/><circle cx="322.4" cy="166.9" r="2.9" fill="#8ea2d8" stroke="#3a3a3a" stroke-opacity="0.85" stroke-width="1"/><circle cx="283.4" cy="205.8" r="2.9" fill="#e9c125" stroke="#3a3a3a" stroke-opacity="0.85" stroke-width="1"/><circle cx="223.6" cy="204.1" r="2.9" fill="#e9c125" stroke="#3a3a3a" stroke-opacity="0.85" stroke-width="1"/><circle cx="164.8" cy="266.3" r="2.9" fill="#e9c125" stroke="#3a3a3a" stroke-opacity="0.85" stroke-width="1"/><circle cx="461.0" cy="152.7" r="2.9" fill="#e9c125" stroke="#3a3a3a" stroke-opacity="0.85" stroke-width="1"/><circle cx="248.5" cy="230.6" r="2.9" fill="#e9c125" stroke="#3a3a3a" stroke-opacity="0.85" stroke-width="1"/><circle cx="272.9" cy="272.3" r="2.9" fill="#e9c125" stroke="#3a3a3a" stroke-opacity="0.85" stroke-width="1"/><circle cx="358.3" cy="226.4" r="2.9" fill="#e9c125" stroke="#3a3a3a" stroke-opacity="0.85" stroke-width="1"/><circle cx="445.8" cy="159.5" r="2.9" fill="#8ea2d8" stroke="#3a3a3a" stroke-opacity="0.85" stroke-width="1"/><circle cx="454.2" cy="139.9" r="2.9" fill="#eea37c" stroke="#3a3a3a" stroke-opacity="0.85" stroke-width="1"/><circle cx="255.5" cy="224.7" r="2.9" fill="#8ea2d8" stroke="#3a3a3a" stroke-opacity="0.85" stroke-width="1"/><circle cx="489.6" cy="214.0" r="2.9" fill="#e9c125" stroke="#3a3a3a" stroke-opacity="0.85" stroke-width="1"/><circle cx="238.0" cy="225.5" r="2.9" fill="#e9c125" stroke="#3a3a3a" stroke-opacity="0.85" stroke-width="1"/><circle cx="554.1" cy="167.5" r="2.9" fill="#9f918a" stroke="#3a3a3a" stroke-opacity="0.85" stroke-width="1"/><circle cx="240.8" cy="200.0" r="2.9" fill="#e9c125" stroke="#3a3a3a" stroke-opacity="0.85" stroke-width="1"/><circle cx="203.6" cy="148.6" r="2.9" fill="#e9c125" stroke="#3a3a3a" stroke-opacity="0.85" stroke-width="1"/><circle cx="258.1" cy="242.2" r="2.9" fill="#e9c125" stroke="#3a3a3a" stroke-opacity="0.85" stroke-width="1"/><circle cx="176.4" cy="223.9" r="2.9" fill="#e9c125" stroke="#3a3a3a" stroke-opacity="0.85" stroke-width="1"/><circle cx="493.2" cy="174.7" r="2.9" fill="#e9c125" stroke="#3a3a3a" stroke-opacity="0.85" stroke-width="1"/><circle cx="577.7" cy="130.2" r="2.9" fill="#e9c125" stroke="#3a3a3a" stroke-opacity="0.85" stroke-width="1"/><circle cx="590.2" cy="111.3" r="2.9" fill="#8ea2d8" stroke="#3a3a3a" stroke-opacity="0.85" stroke-width="1"/><circle cx="541.2" cy="176.2" r="2.9" fill="#e9c125" stroke="#3a3a3a" stroke-opacity="0.85" stroke-width="1"/><circle cx="336.1" cy="160.9" r="2.9" fill="#8ea2d8" stroke="#3a3a3a" stroke-opacity="0.85" stroke-width="1"/><circle cx="411.4" cy="145.4" r="2.9" fill="#e9c125" stroke="#3a3a3a" stroke-opacity="0.85" stroke-width="1"/><circle cx="507.8" cy="190.8" r="2.9" fill="#eea37c" stroke="#3a3a3a" stroke-opacity="0.85" stroke-width="1"/><circle cx="258.7" cy="249.3" r="2.9" fill="#e9c125" stroke="#3a3a3a" stroke-opacity="0.85" stroke-width="1"/><circle cx="425.2" cy="268.8" r="2.9" fill="#9fae8a" stroke="#3a3a3a" stroke-opacity="0.85" stroke-width="1"/><circle cx="369.1" cy="245.8" r="2.9" fill="#e9c125" stroke="#3a3a3a" stroke-opacity="0.85" stroke-width="1"/><circle cx="521.2" cy="96.0" r="2.9" fill="#b59bd2" stroke="#3a3a3a" stroke-opacity="0.85" stroke-width="1"/><circle cx="313.9" cy="234.3" r="2.9" fill="#8ea2d8" stroke="#3a3a3a" stroke-opacity="0.85" stroke-width="1"/><circle cx="247.7" cy="233.9" r="2.9" fill="#9f918a" stroke="#3a3a3a" stroke-opacity="0.85" stroke-width="1"/><circle cx="476.1" cy="188.7" r="2.9" fill="#8ea2d8" stroke="#3a3a3a" stroke-opacity="0.85" stroke-width="1"/><circle cx="547.5" cy="82.7" r="2.9" fill="#e9c125" stroke="#3a3a3a" stroke-opacity="0.85" stroke-width="1"/><circle cx="229.4" cy="212.2" r="2.9" fill="#e9c125" stroke="#3a3a3a" stroke-opacity="0.85" stroke-width="1"/><circle cx="482.8" cy="202.0" r="2.9" fill="#8ea2d8" stroke="#3a3a3a" stroke-opacity="0.85" stroke-width="1"/><circle cx="446.5" cy="216.4" r="2.9" fill="#8ea2d8" stroke="#3a3a3a" stroke-opacity="0.85" stroke-width="1"/><circle cx="420.0" cy="194.5" r="2.9" fill="#9fae8a" stroke="#3a3a3a" stroke-opacity="0.85" stroke-width="1"/><circle cx="273.2" cy="195.2" r="2.9" fill="#8ea2d8" stroke="#3a3a3a" stroke-opacity="0.85" stroke-width="1"/><circle cx="479.0" cy="184.9" r="2.9" fill="#e9c125" stroke="#3a3a3a" stroke-opacity="0.85" stroke-width="1"/><circle cx="533.1" cy="124.7" r="2.9" fill="#e9c125" stroke="#3a3a3a" stroke-opacity="0.85" stroke-width="1"/><circle cx="544.6" cy="112.4" r="2.9" fill="#f0a0c6" stroke="#3a3a3a" stroke-opacity="0.85" stroke-width="1"/><circle cx="488.8" cy="149.2" r="2.9" fill="#e9c125" stroke="#3a3a3a" stroke-opacity="0.85" stroke-width="1"/><circle cx="456.9" cy="142.1" r="2.9" fill="#e9c125" stroke="#3a3a3a" stroke-opacity="0.85" stroke-width="1"/><circle cx="142.1" cy="237.0" r="2.9" fill="#8ea2d8" stroke="#3a3a3a" stroke-opacity="0.85" stroke-width="1"/><circle cx="518.7" cy="170.0" r="2.9" fill="#e9c125" stroke="#3a3a3a" stroke-opacity="0.85" stroke-width="1"/><circle cx="493.3" cy="124.4" r="2.9" fill="#f0a0c6" stroke="#3a3a3a" stroke-opacity="0.85" stroke-width="1"/><circle cx="510.8" cy="166.0" r="2.9" fill="#e9c125" stroke="#3a3a3a" stroke-opacity="0.85" stroke-width="1"/><circle cx="397.5" cy="150.9" r="2.9" fill="#e9c125" stroke="#3a3a3a" stroke-opacity="0.85" stroke-width="1"/><circle cx="210.7" cy="129.9" r="2.9" fill="#e9c125" stroke="#3a3a3a" stroke-opacity="0.85" stroke-width="1"/><circle cx="407.6" cy="171.3" r="2.9" fill="#8ea2d8" stroke="#3a3a3a" stroke-opacity="0.85" stroke-width="1"/><circle cx="508.4" cy="202.3" r="2.9" fill="#8ea2d8" stroke="#3a3a3a" stroke-opacity="0.85" stroke-width="1"/><circle cx="142.2" cy="280.4" r="2.9" fill="#8ea2d8" stroke="#3a3a3a" stroke-opacity="0.85" stroke-width="1"/><circle cx="409.6" cy="213.0" r="2.9" fill="#e9c125" stroke="#3a3a3a" stroke-opacity="0.85" stroke-width="1"/><circle cx="284.4" cy="253.2" r="2.9" fill="#b59bd2" stroke="#3a3a3a" stroke-opacity="0.85" stroke-width="1"/><circle cx="143.3" cy="282.3" r="2.9" fill="#8ea2d8" stroke="#3a3a3a" stroke-opacity="0.85" stroke-width="1"/><circle cx="302.4" cy="180.9" r="2.9" fill="#8ea2d8" stroke="#3a3a3a" stroke-opacity="0.85" stroke-width="1"/><circle cx="414.5" cy="240.0" r="2.9" fill="#e9c125" stroke="#3a3a3a" stroke-opacity="0.85" stroke-width="1"/><circle cx="499.5" cy="117.6" r="2.9" fill="#8ea2d8" stroke="#3a3a3a" stroke-opacity="0.85" stroke-width="1"/><circle cx="366.6" cy="213.9" r="2.9" fill="#8ea2d8" stroke="#3a3a3a" stroke-opacity="0.85" stroke-width="1"/><circle cx="456.5" cy="288.8" r="2.9" fill="#e9c125" stroke="#3a3a3a" stroke-opacity="0.85" stroke-width="1"/><circle cx="366.1" cy="176.7" r="2.9" fill="#e9c125" stroke="#3a3a3a" stroke-opacity="0.85" stroke-width="1"/><circle cx="510.6" cy="144.8" r="2.9" fill="#b59bd2" stroke="#3a3a3a" stroke-opacity="0.85" stroke-width="1"/><circle cx="425.0" cy="182.3" r="2.9" fill="#e9c125" stroke="#3a3a3a" stroke-opacity="0.85" stroke-width="1"/><circle cx="203.3" cy="216.6" r="2.9" fill="#e9c125" stroke="#3a3a3a" stroke-opacity="0.85" stroke-width="1"/><circle cx="513.8" cy="152.2" r="2.9" fill="#8ea2d8" stroke="#3a3a3a" stroke-opacity="0.85" stroke-width="1"/><circle cx="247.2" cy="254.6" r="2.9" fill="#e9c125" stroke="#3a3a3a" stroke-opacity="0.85" stroke-width="1"/><circle cx="318.0" cy="208.2" r="2.9" fill="#e9c125" stroke="#3a3a3a" stroke-opacity="0.85" stroke-width="1"/><circle cx="349.0" cy="173.5" r="2.9" fill="#e9c125" stroke="#3a3a3a" stroke-opacity="0.85" stroke-width="1"/><circle cx="408.5" cy="210.0" r="2.9" fill="#b59bd2" stroke="#3a3a3a" stroke-opacity="0.85" stroke-width="1"/><circle cx="334.8" cy="182.9" r="2.9" fill="#e9c125" stroke="#3a3a3a" stroke-opacity="0.85" stroke-width="1"/><circle cx="184.1" cy="268.3" r="2.9" fill="#8ea2d8" stroke="#3a3a3a" stroke-opacity="0.85" stroke-width="1"/><circle cx="473.1" cy="236.5" r="2.9" fill="#e9c125" stroke="#3a3a3a" stroke-opacity="0.85" stroke-width="1"/><circle cx="413.9" cy="180.3" r="2.9" fill="#e9c125" stroke="#3a3a3a" stroke-opacity="0.85" stroke-width="1"/><circle cx="443.1" cy="253.4" r="2.9" fill="#9f918a" stroke="#3a3a3a" stroke-opacity="0.85" stroke-width="1"/><circle cx="215.1" cy="275.1" r="2.9" fill="#8ea2d8" stroke="#3a3a3a" stroke-opacity="0.85" stroke-width="1"/><circle cx="598.7" cy="80.6" r="2.9" fill="#e9c125" stroke="#3a3a3a" stroke-opacity="0.85" stroke-width="1"/><circle cx="478.6" cy="226.8" r="2.9" fill="#8ea2d8" stroke="#3a3a3a" stroke-opacity="0.85" stroke-width="1"/><circle cx="434.5" cy="233.6" r="2.9" fill="#b59bd2" stroke="#3a3a3a" stroke-opacity="0.85" stroke-width="1"/><circle cx="486.1" cy="117.9" r="2.9" fill="#e9c125" stroke="#3a3a3a" stroke-opacity="0.85" stroke-width="1"/><circle cx="545.6" cy="113.6" r="2.9" fill="#b59bd2" stroke="#3a3a3a" stroke-opacity="0.85" stroke-width="1"/><circle cx="445.1" cy="136.6" r="2.9" fill="#8ea2d8" stroke="#3a3a3a" stroke-opacity="0.85" stroke-width="1"/><circle cx="329.4" cy="210.1" r="2.9" fill="#e9c125" stroke="#3a3a3a" stroke-opacity="0.85" stroke-width="1"/><circle cx="250.8" cy="221.1" r="2.9" fill="#e9c125" stroke="#3a3a3a" stroke-opacity="0.85" stroke-width="1"/><circle cx="187.7" cy="204.2" r="2.9" fill="#8ea2d8" stroke="#3a3a3a" stroke-opacity="0.85" stroke-width="1"/><circle cx="462.0" cy="287.2" r="2.9" fill="#e9c125" stroke="#3a3a3a" stroke-opacity="0.85" stroke-width="1"/><circle cx="302.7" cy="197.5" r="2.9" fill="#8ea2d8" stroke="#3a3a3a" stroke-opacity="0.85" stroke-width="1"/><circle cx="438.8" cy="197.2" r="2.9" fill="#e9c125" stroke="#3a3a3a" stroke-opacity="0.85" stroke-width="1"/><circle cx="439.2" cy="202.3" r="2.9" fill="#e9c125" stroke="#3a3a3a" stroke-opacity="0.85" stroke-width="1"/><circle cx="192.4" cy="135.5" r="2.9" fill="#e9c125" stroke="#3a3a3a" stroke-opacity="0.85" stroke-width="1"/><circle cx="208.3" cy="130.1" r="2.9" fill="#b59bd2" stroke="#3a3a3a" stroke-opacity="0.85" stroke-width="1"/><circle cx="245.9" cy="208.0" r="2.9" fill="#8ea2d8" stroke="#3a3a3a" stroke-opacity="0.85" stroke-width="1"/><circle cx="216.4" cy="153.8" r="2.9" fill="#e9c125" stroke="#3a3a3a" stroke-opacity="0.85" stroke-width="1"/><circle cx="165.4" cy="173.7" r="2.9" fill="#e9c125" stroke="#3a3a3a" stroke-opacity="0.85" stroke-width="1"/><circle cx="333.0" cy="246.9" r="2.9" fill="#8ea2d8" stroke="#3a3a3a" stroke-opacity="0.85" stroke-width="1"/><circle cx="573.8" cy="59.6" r="2.9" fill="#8ea2d8" stroke="#3a3a3a" stroke-opacity="0.85" stroke-width="1"/><circle cx="177.6" cy="231.7" r="2.9" fill="#8ea2d8" stroke="#3a3a3a" stroke-opacity="0.85" stroke-width="1"/><circle cx="431.5" cy="267.9" r="2.9" fill="#e9c125" stroke="#3a3a3a" stroke-opacity="0.85" stroke-width="1"/><circle cx="250.8" cy="183.3" r="2.9" fill="#e9c125" stroke="#3a3a3a" stroke-opacity="0.85" stroke-width="1"/><circle cx="458.3" cy="192.4" r="2.9" fill="#8ea2d8" stroke="#3a3a3a" stroke-opacity="0.85" stroke-width="1"/><circle cx="503.0" cy="210.3" r="2.9" fill="#e9c125" stroke="#3a3a3a" stroke-opacity="0.85" stroke-width="1"/><circle cx="588.5" cy="137.1" r="2.9" fill="#e9c125" stroke="#3a3a3a" stroke-opacity="0.85" stroke-width="1"/><circle cx="450.6" cy="267.2" r="2.9" fill="#e9c125" stroke="#3a3a3a" stroke-opacity="0.85" stroke-width="1"/><circle cx="219.8" cy="169.2" r="2.9" fill="#8ea2d8" stroke="#3a3a3a" stroke-opacity="0.85" stroke-width="1"/><circle cx="312.6" cy="197.1" r="2.9" fill="#8ea2d8" stroke="#3a3a3a" stroke-opacity="0.85" stroke-width="1"/><circle cx="185.3" cy="219.1" r="2.9" fill="#8ea2d8" stroke="#3a3a3a" stroke-opacity="0.85" stroke-width="1"/><circle cx="437.8" cy="159.0" r="2.9" fill="#8ea2d8" stroke="#3a3a3a" stroke-opacity="0.85" stroke-width="1"/><circle cx="215.4" cy="157.3" r="2.9" fill="#e9c125" stroke="#3a3a3a" stroke-opacity="0.85" stroke-width="1"/><circle cx="477.3" cy="244.9" r="2.9" fill="#8ea2d8" stroke="#3a3a3a" stroke-opacity="0.85" stroke-width="1"/><circle cx="427.0" cy="281.6" r="2.9" fill="#8ea2d8" stroke="#3a3a3a" stroke-opacity="0.85" stroke-width="1"/><circle cx="590.1" cy="64.6" r="2.9" fill="#8ea2d8" stroke="#3a3a3a" stroke-opacity="0.85" stroke-width="1"/><circle cx="459.0" cy="146.0" r="2.9" fill="#8ea2d8" stroke="#3a3a3a" stroke-opacity="0.85" stroke-width="1"/><circle cx="453.2" cy="128.7" r="2.9" fill="#8ea2d8" stroke="#3a3a3a" stroke-opacity="0.85" stroke-width="1"/><circle cx="196.8" cy="216.0" r="2.9" fill="#e9c125" stroke="#3a3a3a" stroke-opacity="0.85" stroke-width="1"/><circle cx="441.1" cy="160.9" r="2.9" fill="#e9c125" stroke="#3a3a3a" stroke-opacity="0.85" stroke-width="1"/><circle cx="411.4" cy="264.5" r="2.9" fill="#e9c125" stroke="#3a3a3a" stroke-opacity="0.85" stroke-width="1"/><circle cx="466.3" cy="266.6" r="2.9" fill="#eea37c" stroke="#3a3a3a" stroke-opacity="0.85" stroke-width="1"/><circle cx="309.0" cy="208.7" r="2.9" fill="#e9c125" stroke="#3a3a3a" stroke-opacity="0.85" stroke-width="1"/><circle cx="334.5" cy="205.6" r="2.9" fill="#e9c125" stroke="#3a3a3a" stroke-opacity="0.85" stroke-width="1"/><circle cx="286.8" cy="152.1" r="2.9" fill="#e9c125" stroke="#3a3a3a" stroke-opacity="0.85" stroke-width="1"/><circle cx="231.5" cy="151.4" r="2.9" fill="#8ea2d8" stroke="#3a3a3a" stroke-opacity="0.85" stroke-width="1"/><circle cx="165.4" cy="197.3" r="2.9" fill="#e9c125" stroke="#3a3a3a" stroke-opacity="0.85" stroke-width="1"/><circle cx="459.0" cy="285.6" r="2.9" fill="#8ea2d8" stroke="#3a3a3a" stroke-opacity="0.85" stroke-width="1"/><circle cx="540.3" cy="52.2" r="2.9" fill="#e9c125" stroke="#3a3a3a" stroke-opacity="0.85" stroke-width="1"/><circle cx="466.8" cy="176.7" r="2.9" fill="#f0a0c6" stroke="#3a3a3a" stroke-opacity="0.85" stroke-width="1"/><circle cx="587.5" cy="152.1" r="2.9" fill="#8ea2d8" stroke="#3a3a3a" stroke-opacity="0.85" stroke-width="1"/><circle cx="201.1" cy="208.7" r="2.9" fill="#e9c125" stroke="#3a3a3a" stroke-opacity="0.85" stroke-width="1"/><circle cx="600.9" cy="107.4" r="2.9" fill="#e9c125" stroke="#3a3a3a" stroke-opacity="0.85" stroke-width="1"/><circle cx="468.4" cy="146.8" r="2.9" fill="#e9c125" stroke="#3a3a3a" stroke-opacity="0.85" stroke-width="1"/><circle cx="215.7" cy="166.1" r="2.9" fill="#e9c125" stroke="#3a3a3a" stroke-opacity="0.85" stroke-width="1"/><circle cx="330.6" cy="243.0" r="2.9" fill="#f0a0c6" stroke="#3a3a3a" stroke-opacity="0.85" stroke-width="1"/><circle cx="521.9" cy="95.6" r="2.9" fill="#8ea2d8" stroke="#3a3a3a" stroke-opacity="0.85" stroke-width="1"/><circle cx="377.2" cy="180.3" r="2.9" fill="#e9c125" stroke="#3a3a3a" stroke-opacity="0.85" stroke-width="1"/><circle cx="212.3" cy="172.2" r="2.9" fill="#b59bd2" stroke="#3a3a3a" stroke-opacity="0.85" stroke-width="1"/><circle cx="246.4" cy="215.5" r="2.9" fill="#b59bd2" stroke="#3a3a3a" stroke-opacity="0.85" stroke-width="1"/><circle cx="579.7" cy="91.6" r="2.9" fill="#e9c125" stroke="#3a3a3a" stroke-opacity="0.85" stroke-width="1"/><circle cx="173.1" cy="169.0" r="2.9" fill="#8ea2d8" stroke="#3a3a3a" stroke-opacity="0.85" stroke-width="1"/><circle cx="258.8" cy="219.3" r="2.9" fill="#e9c125" stroke="#3a3a3a" stroke-opacity="0.85" stroke-width="1"/><circle cx="268.0" cy="217.4" r="2.9" fill="#e9c125" stroke="#3a3a3a" stroke-opacity="0.85" stroke-width="1"/><circle cx="314.5" cy="186.4" r="2.9" fill="#f0a0c6" stroke="#3a3a3a" stroke-opacity="0.85" stroke-width="1"/><circle cx="414.0" cy="205.0" r="2.9" fill="#8ea2d8" stroke="#3a3a3a" stroke-opacity="0.85" stroke-width="1"/><circle cx="432.2" cy="176.9" r="2.9" fill="#8ea2d8" stroke="#3a3a3a" stroke-opacity="0.85" stroke-width="1"/><circle cx="162.3" cy="222.4" r="2.9" fill="#eea37c" stroke="#3a3a3a" stroke-opacity="0.85" stroke-width="1"/><circle cx="516.9" cy="114.0" r="2.9" fill="#e9c125" stroke="#3a3a3a" stroke-opacity="0.85" stroke-width="1"/><circle cx="230.5" cy="186.7" r="2.9" fill="#8ea2d8" stroke="#3a3a3a" stroke-opacity="0.85" stroke-width="1"/><circle cx="489.4" cy="182.4" r="2.9" fill="#e9c125" stroke="#3a3a3a" stroke-opacity="0.85" stroke-width="1"/><circle cx="354.3" cy="164.2" r="2.9" fill="#e9c125" stroke="#3a3a3a" stroke-opacity="0.85" stroke-width="1"/><circle cx="377.8" cy="150.5" r="2.9" fill="#e9c125" stroke="#3a3a3a" stroke-opacity="0.85" stroke-width="1"/><circle cx="428.6" cy="238.1" r="2.9" fill="#8ea2d8" stroke="#3a3a3a" stroke-opacity="0.85" stroke-width="1"/><circle cx="445.0" cy="168.6" r="2.9" fill="#e9c125" stroke="#3a3a3a" stroke-opacity="0.85" stroke-width="1"/><circle cx="187.4" cy="172.7" r="2.9" fill="#b59bd2" stroke="#3a3a3a" stroke-opacity="0.85" stroke-width="1"/><circle cx="343.5" cy="255.0" r="2.9" fill="#8ea2d8" stroke="#3a3a3a" stroke-opacity="0.85" stroke-width="1"/><circle cx="405.6" cy="202.8" r="2.9" fill="#8ea2d8" stroke="#3a3a3a" stroke-opacity="0.85" stroke-width="1"/><circle cx="331.0" cy="165.4" r="2.9" fill="#e9c125" stroke="#3a3a3a" stroke-opacity="0.85" stroke-width="1"/><circle cx="564.3" cy="88.2" r="2.9" fill="#e9c125" stroke="#3a3a3a" stroke-opacity="0.85" stroke-width="1"/><circle cx="441.1" cy="213.5" r="2.9" fill="#8ea2d8" stroke="#3a3a3a" stroke-opacity="0.85" stroke-width="1"/><circle cx="444.1" cy="147.7" r="2.9" fill="#e9c125" stroke="#3a3a3a" stroke-opacity="0.85" stroke-width="1"/><circle cx="393.0" cy="194.0" r="2.9" fill="#8ea2d8" stroke="#3a3a3a" stroke-opacity="0.85" stroke-width="1"/><circle cx="388.9" cy="164.7" r="2.9" fill="#f0a0c6" stroke="#3a3a3a" stroke-opacity="0.85" stroke-width="1"/><circle cx="232.6" cy="209.1" r="2.9" fill="#8ea2d8" stroke="#3a3a3a" stroke-opacity="0.85" stroke-width="1"/><circle cx="358.5" cy="211.6" r="2.9" fill="#e9c125" stroke="#3a3a3a" stroke-opacity="0.85" stroke-width="1"/><circle cx="467.4" cy="269.9" r="2.9" fill="#e9c125" stroke="#3a3a3a" stroke-opacity="0.85" stroke-width="1"/><circle cx="411.1" cy="207.6" r="2.9" fill="#e9c125" stroke="#3a3a3a" stroke-opacity="0.85" stroke-width="1"/><circle cx="536.5" cy="177.8" r="2.9" fill="#e9c125" stroke="#3a3a3a" stroke-opacity="0.85" stroke-width="1"/><circle cx="382.4" cy="184.7" r="2.9" fill="#eea37c" stroke="#3a3a3a" stroke-opacity="0.85" stroke-width="1"/><circle cx="184.8" cy="246.0" r="2.9" fill="#e9c125" stroke="#3a3a3a" stroke-opacity="0.85" stroke-width="1"/><circle cx="459.5" cy="200.1" r="2.9" fill="#e9c125" stroke="#3a3a3a" stroke-opacity="0.85" stroke-width="1"/><circle cx="343.2" cy="240.7" r="2.9" fill="#e9c125" stroke="#3a3a3a" stroke-opacity="0.85" stroke-width="1"/><circle cx="225.9" cy="134.1" r="2.9" fill="#e9c125" stroke="#3a3a3a" stroke-opacity="0.85" stroke-width="1"/><circle cx="173.5" cy="261.4" r="2.9" fill="#e9c125" stroke="#3a3a3a" stroke-opacity="0.85" stroke-width="1"/><circle cx="539.1" cy="120.5" r="2.9" fill="#eea37c" stroke="#3a3a3a" stroke-opacity="0.85" stroke-width="1"/><circle cx="237.3" cy="156.2" r="2.9" fill="#b59bd2" stroke="#3a3a3a" stroke-opacity="0.85" stroke-width="1"/><circle cx="166.2" cy="191.5" r="2.9" fill="#e9c125" stroke="#3a3a3a" stroke-opacity="0.85" stroke-width="1"/><circle cx="517.1" cy="139.6" r="2.9" fill="#e9c125" stroke="#3a3a3a" stroke-opacity="0.85" stroke-width="1"/><circle cx="541.0" cy="144.3" r="2.9" fill="#e9c125" stroke="#3a3a3a" stroke-opacity="0.85" stroke-width="1"/><circle cx="323.8" cy="194.4" r="2.9" fill="#e9c125" stroke="#3a3a3a" stroke-opacity="0.85" stroke-width="1"/><circle cx="369.9" cy="243.1" r="2.9" fill="#e9c125" stroke="#3a3a3a" stroke-opacity="0.85" stroke-width="1"/><circle cx="307.2" cy="155.4" r="2.9" fill="#8ea2d8" stroke="#3a3a3a" stroke-opacity="0.85" stroke-width="1"/><circle cx="244.1" cy="251.1" r="2.9" fill="#8ea2d8" stroke="#3a3a3a" stroke-opacity="0.85" stroke-width="1"/><circle cx="208.0" cy="145.3" r="2.9" fill="#e9c125" stroke="#3a3a3a" stroke-opacity="0.85" stroke-width="1"/><circle cx="526.7" cy="177.7" r="2.9" fill="#8ea2d8" stroke="#3a3a3a" stroke-opacity="0.85" stroke-width="1"/><circle cx="408.8" cy="276.8" r="2.9" fill="#b59bd2" stroke="#3a3a3a" stroke-opacity="0.85" stroke-width="1"/><circle cx="434.2" cy="255.4" r="2.9" fill="#e9c125" stroke="#3a3a3a" stroke-opacity="0.85" stroke-width="1"/><circle cx="287.5" cy="275.9" r="2.9" fill="#e9c125" stroke="#3a3a3a" stroke-opacity="0.85" stroke-width="1"/><circle cx="462.5" cy="243.6" r="2.9" fill="#f0a0c6" stroke="#3a3a3a" stroke-opacity="0.85" stroke-width="1"/><circle cx="412.5" cy="222.7" r="2.9" fill="#e9c125" stroke="#3a3a3a" stroke-opacity="0.85" stroke-width="1"/><circle cx="212.0" cy="189.4" r="2.9" fill="#e9c125" stroke="#3a3a3a" stroke-opacity="0.85" stroke-width="1"/><circle cx="352.0" cy="251.8" r="2.9" fill="#e9c125" stroke="#3a3a3a" stroke-opacity="0.85" stroke-width="1"/><circle cx="395.3" cy="167.9" r="2.9" fill="#e9c125" stroke="#3a3a3a" stroke-opacity="0.85" stroke-width="1"/><circle cx="314.5" cy="171.6" r="2.9" fill="#8ea2d8" stroke="#3a3a3a" stroke-opacity="0.85" stroke-width="1"/><circle cx="541.5" cy="175.8" r="2.9" fill="#8ea2d8" stroke="#3a3a3a" stroke-opacity="0.85" stroke-width="1"/><circle cx="361.5" cy="223.5" r="2.9" fill="#8ea2d8" stroke="#3a3a3a" stroke-opacity="0.85" stroke-width="1"/><circle cx="271.4" cy="209.6" r="2.9" fill="#eea37c" stroke="#3a3a3a" stroke-opacity="0.85" stroke-width="1"/><circle cx="168.9" cy="270.4" r="2.9" fill="#8ea2d8" stroke="#3a3a3a" stroke-opacity="0.85" stroke-width="1"/><circle cx="466.2" cy="234.0" r="2.9" fill="#e9c125" stroke="#3a3a3a" stroke-opacity="0.85" stroke-width="1"/><circle cx="213.4" cy="234.6" r="2.9" fill="#e9c125" stroke="#3a3a3a" stroke-opacity="0.85" stroke-width="1"/><circle cx="147.9" cy="222.9" r="2.9" fill="#e9c125" stroke="#3a3a3a" stroke-opacity="0.85" stroke-width="1"/><circle cx="456.7" cy="272.7" r="2.9" fill="#eea37c" stroke="#3a3a3a" stroke-opacity="0.85" stroke-width="1"/><circle cx="318.8" cy="170.8" r="2.9" fill="#8ea2d8" stroke="#3a3a3a" stroke-opacity="0.85" stroke-width="1"/><circle cx="459.9" cy="265.0" r="2.9" fill="#e9c125" stroke="#3a3a3a" stroke-opacity="0.85" stroke-width="1"/><circle cx="282.2" cy="149.7" r="2.9" fill="#9f918a" stroke="#3a3a3a" stroke-opacity="0.85" stroke-width="1"/><circle cx="495.4" cy="134.2" r="2.9" fill="#8ea2d8" stroke="#3a3a3a" stroke-opacity="0.85" stroke-width="1"/><circle cx="202.0" cy="151.6" r="2.9" fill="#8ea2d8" stroke="#3a3a3a" stroke-opacity="0.85" stroke-width="1"/><circle cx="531.0" cy="67.7" r="2.9" fill="#f0a0c6" stroke="#3a3a3a" stroke-opacity="0.85" stroke-width="1"/><circle cx="523.7" cy="192.5" r="2.9" fill="#e9c125" stroke="#3a3a3a" stroke-opacity="0.85" stroke-width="1"/><circle cx="169.9" cy="205.8" r="2.9" fill="#e9c125" stroke="#3a3a3a" stroke-opacity="0.85" stroke-width="1"/><circle cx="354.1" cy="163.3" r="2.9" fill="#e9c125" stroke="#3a3a3a" stroke-opacity="0.85" stroke-width="1"/><circle cx="351.6" cy="243.6" r="2.9" fill="#8ea2d8" stroke="#3a3a3a" stroke-opacity="0.85" stroke-width="1"/><circle cx="531.8" cy="130.6" r="2.9" fill="#e9c125" stroke="#3a3a3a" stroke-opacity="0.85" stroke-width="1"/><circle cx="365.9" cy="163.3" r="2.9" fill="#e9c125" stroke="#3a3a3a" stroke-opacity="0.85" stroke-width="1"/><circle cx="434.3" cy="224.9" r="2.9" fill="#8ea2d8" stroke="#3a3a3a" stroke-opacity="0.85" stroke-width="1"/><circle cx="161.0" cy="270.8" r="2.9" fill="#8ea2d8" stroke="#3a3a3a" stroke-opacity="0.85" stroke-width="1"/><circle cx="487.2" cy="234.6" r="2.9" fill="#e9c125" stroke="#3a3a3a" stroke-opacity="0.85" stroke-width="1"/><circle cx="458.2" cy="188.5" r="2.9" fill="#e9c125" stroke="#3a3a3a" stroke-opacity="0.85" stroke-width="1"/><circle cx="460.3" cy="123.2" r="2.9" fill="#8ea2d8" stroke="#3a3a3a" stroke-opacity="0.85" stroke-width="1"/><circle cx="423.5" cy="221.9" r="2.9" fill="#e9c125" stroke="#3a3a3a" stroke-opacity="0.85" stroke-width="1"/><circle cx="528.7" cy="177.1" r="2.9" fill="#8ea2d8" stroke="#3a3a3a" stroke-opacity="0.85" stroke-width="1"/><circle cx="340.4" cy="157.5" r="2.9" fill="#e9c125" stroke="#3a3a3a" stroke-opacity="0.85" stroke-width="1"/><circle cx="341.3" cy="256.1" r="2.9" fill="#8ea2d8" stroke="#3a3a3a" stroke-opacity="0.85" stroke-width="1"/><circle cx="211.9" cy="154.8" r="2.9" fill="#e9c125" stroke="#3a3a3a" stroke-opacity="0.85" stroke-width="1"/><circle cx="487.9" cy="227.0" r="2.9" fill="#b59bd2" stroke="#3a3a3a" stroke-opacity="0.85" stroke-width="1"/><circle cx="301.7" cy="195.1" r="2.9" fill="#8ea2d8" stroke="#3a3a3a" stroke-opacity="0.85" stroke-width="1"/><circle cx="361.5" cy="171.0" r="2.9" fill="#8ea2d8" stroke="#3a3a3a" stroke-opacity="0.85" stroke-width="1"/><circle cx="237.4" cy="228.5" r="2.9" fill="#8ea2d8" stroke="#3a3a3a" stroke-opacity="0.85" stroke-width="1"/><circle cx="526.1" cy="66.1" r="2.9" fill="#8ea2d8" stroke="#3a3a3a" stroke-opacity="0.85" stroke-width="1"/><circle cx="541.5" cy="166.2" r="2.9" fill="#e9c125" stroke="#3a3a3a" stroke-opacity="0.85" stroke-width="1"/><circle cx="259.0" cy="208.6" r="2.9" fill="#e9c125" stroke="#3a3a3a" stroke-opacity="0.85" stroke-width="1"/><circle cx="214.6" cy="144.0" r="2.9" fill="#8ea2d8" stroke="#3a3a3a" stroke-opacity="0.85" stroke-width="1"/><circle cx="533.7" cy="64.6" r="2.9" fill="#8ea2d8" stroke="#3a3a3a" stroke-opacity="0.85" stroke-width="1"/><circle cx="468.8" cy="121.9" r="2.9" fill="#e9c125" stroke="#3a3a3a" stroke-opacity="0.85" stroke-width="1"/><circle cx="536.9" cy="74.0" r="2.9" fill="#8ea2d8" stroke="#3a3a3a" stroke-opacity="0.85" stroke-width="1"/><circle cx="328.7" cy="180.7" r="2.9" fill="#b59bd2" stroke="#3a3a3a" stroke-opacity="0.85" stroke-width="1"/><circle cx="336.6" cy="157.4" r="2.9" fill="#8ea2d8" stroke="#3a3a3a" stroke-opacity="0.85" stroke-width="1"/><circle cx="371.5" cy="166.5" r="2.9" fill="#e9c125" stroke="#3a3a3a" stroke-opacity="0.85" stroke-width="1"/><circle cx="233.8" cy="165.5" r="2.9" fill="#8ea2d8" stroke="#3a3a3a" stroke-opacity="0.85" stroke-width="1"/><circle cx="538.3" cy="89.4" r="2.9" fill="#e9c125" stroke="#3a3a3a" stroke-opacity="0.85" stroke-width="1"/><circle cx="585.1" cy="95.7" r="2.9" fill="#8ea2d8" stroke="#3a3a3a" stroke-opacity="0.85" stroke-width="1"/><circle cx="238.2" cy="128.8" r="2.9" fill="#e9c125" stroke="#3a3a3a" stroke-opacity="0.85" stroke-width="1"/><circle cx="484.9" cy="151.1" r="2.9" fill="#e9c125" stroke="#3a3a3a" stroke-opacity="0.85" stroke-width="1"/><circle cx="406.6" cy="256.6" r="2.9" fill="#8ea2d8" stroke="#3a3a3a" stroke-opacity="0.85" stroke-width="1"/><circle cx="189.9" cy="263.8" r="2.9" fill="#e9c125" stroke="#3a3a3a" stroke-opacity="0.85" stroke-width="1"/><circle cx="295.1" cy="266.6" r="2.9" fill="#8ea2d8" stroke="#3a3a3a" stroke-opacity="0.85" stroke-width="1"/><circle cx="352.1" cy="228.0" r="2.9" fill="#9f918a" stroke="#3a3a3a" stroke-opacity="0.85" stroke-width="1"/><circle cx="346.4" cy="184.3" r="2.9" fill="#9fae8a" stroke="#3a3a3a" stroke-opacity="0.85" stroke-width="1"/><circle cx="416.7" cy="191.0" r="2.9" fill="#e9c125" stroke="#3a3a3a" stroke-opacity="0.85" stroke-width="1"/><circle cx="321.9" cy="173.4" r="2.9" fill="#8ea2d8" stroke="#3a3a3a" stroke-opacity="0.85" stroke-width="1"/><circle cx="206.6" cy="274.4" r="2.9" fill="#8ea2d8" stroke="#3a3a3a" stroke-opacity="0.85" stroke-width="1"/><circle cx="555.6" cy="81.5" r="2.9" fill="#e9c125" stroke="#3a3a3a" stroke-opacity="0.85" stroke-width="1"/><circle cx="343.7" cy="156.1" r="2.9" fill="#e9c125" stroke="#3a3a3a" stroke-opacity="0.85" stroke-width="1"/><circle cx="261.4" cy="241.5" r="2.9" fill="#f0a0c6" stroke="#3a3a3a" stroke-opacity="0.85" stroke-width="1"/><circle cx="427.5" cy="182.7" r="2.9" fill="#8ea2d8" stroke="#3a3a3a" stroke-opacity="0.85" stroke-width="1"/><circle cx="492.8" cy="162.0" r="2.9" fill="#e9c125" stroke="#3a3a3a" stroke-opacity="0.85" stroke-width="1"/><circle cx="372.3" cy="248.8" r="2.9" fill="#eea37c" stroke="#3a3a3a" stroke-opacity="0.85" stroke-width="1"/><circle cx="188.7" cy="200.9" r="2.9" fill="#8ea2d8" stroke="#3a3a3a" stroke-opacity="0.85" stroke-width="1"/><circle cx="456.3" cy="228.2" r="2.9" fill="#e9c125" stroke="#3a3a3a" stroke-opacity="0.85" stroke-width="1"/><circle cx="374.2" cy="209.9" r="2.9" fill="#e9c125" stroke="#3a3a3a" stroke-opacity="0.85" stroke-width="1"/><circle cx="456.6" cy="256.0" r="2.9" fill="#eea37c" stroke="#3a3a3a" stroke-opacity="0.85" stroke-width="1"/><circle cx="404.1" cy="179.9" r="2.9" fill="#e9c125" stroke="#3a3a3a" stroke-opacity="0.85" stroke-width="1"/><circle cx="535.5" cy="170.8" r="2.9" fill="#e9c125" stroke="#3a3a3a" stroke-opacity="0.85" stroke-width="1"/><circle cx="231.8" cy="143.3" r="2.9" fill="#e9c125" stroke="#3a3a3a" stroke-opacity="0.85" stroke-width="1"/><circle cx="527.4" cy="140.2" r="2.9" fill="#8ea2d8" stroke="#3a3a3a" stroke-opacity="0.85" stroke-width="1"/><circle cx="479.4" cy="184.5" r="2.9" fill="#e9c125" stroke="#3a3a3a" stroke-opacity="0.85" stroke-width="1"/><circle cx="224.7" cy="234.4" r="2.9" fill="#8ea2d8" stroke="#3a3a3a" stroke-opacity="0.85" stroke-width="1"/><circle cx="231.5" cy="181.3" r="2.9" fill="#e9c125" stroke="#3a3a3a" stroke-opacity="0.85" stroke-width="1"/><circle cx="482.3" cy="242.1" r="2.9" fill="#8ea2d8" stroke="#3a3a3a" stroke-opacity="0.85" stroke-width="1"/><circle cx="221.6" cy="214.8" r="2.9" fill="#b59bd2" stroke="#3a3a3a" stroke-opacity="0.85" stroke-width="1"/><circle cx="431.4" cy="229.5" r="2.9" fill="#e9c125" stroke="#3a3a3a" stroke-opacity="0.85" stroke-width="1"/><circle cx="241.3" cy="199.6" r="2.9" fill="#e9c125" stroke="#3a3a3a" stroke-opacity="0.85" stroke-width="1"/><circle cx="209.8" cy="269.9" r="2.9" fill="#8ea2d8" stroke="#3a3a3a" stroke-opacity="0.85" stroke-width="1"/><circle cx="195.2" cy="251.5" r="2.9" fill="#e9c125" stroke="#3a3a3a" stroke-opacity="0.85" stroke-width="1"/><circle cx="507.5" cy="194.0" r="2.9" fill="#e9c125" stroke="#3a3a3a" stroke-opacity="0.85" stroke-width="1"/><circle cx="181.1" cy="287.6" r="2.9" fill="#e9c125" stroke="#3a3a3a" stroke-opacity="0.85" stroke-width="1"/><circle cx="423.5" cy="220.8" r="2.9" fill="#8ea2d8" stroke="#3a3a3a" stroke-opacity="0.85" stroke-width="1"/><circle cx="473.9" cy="190.9" r="2.9" fill="#8ea2d8" stroke="#3a3a3a" stroke-opacity="0.85" stroke-width="1"/><circle cx="373.2" cy="174.4" r="2.9" fill="#8ea2d8" stroke="#3a3a3a" stroke-opacity="0.85" stroke-width="1"/><circle cx="577.4" cy="112.4" r="2.9" fill="#e9c125" stroke="#3a3a3a" stroke-opacity="0.85" stroke-width="1"/><circle cx="278.0" cy="239.8" r="2.9" fill="#e9c125" stroke="#3a3a3a" stroke-opacity="0.85" stroke-width="1"/><circle cx="371.9" cy="172.6" r="2.9" fill="#e9c125" stroke="#3a3a3a" stroke-opacity="0.85" stroke-width="1"/><circle cx="205.2" cy="150.6" r="2.9" fill="#e9c125" stroke="#3a3a3a" stroke-opacity="0.85" stroke-width="1"/><circle cx="282.2" cy="237.0" r="2.9" fill="#8ea2d8" stroke="#3a3a3a" stroke-opacity="0.85" stroke-width="1"/><circle cx="240.3" cy="240.8" r="2.9" fill="#9fae8a" stroke="#3a3a3a" stroke-opacity="0.85" stroke-width="1"/><circle cx="303.6" cy="262.9" r="2.9" fill="#e9c125" stroke="#3a3a3a" stroke-opacity="0.85" stroke-width="1"/><circle cx="542.9" cy="180.8" r="2.9" fill="#e9c125" stroke="#3a3a3a" stroke-opacity="0.85" stroke-width="1"/><circle cx="360.4" cy="230.0" r="2.9" fill="#8ea2d8" stroke="#3a3a3a" stroke-opacity="0.85" stroke-width="1"/><circle cx="318.0" cy="200.5" r="2.9" fill="#e9c125" stroke="#3a3a3a" stroke-opacity="0.85" stroke-width="1"/><circle cx="519.1" cy="80.0" r="2.9" fill="#8ea2d8" stroke="#3a3a3a" stroke-opacity="0.85" stroke-width="1"/><circle cx="442.6" cy="154.3" r="2.9" fill="#8ea2d8" stroke="#3a3a3a" stroke-opacity="0.85" stroke-width="1"/><circle cx="167.2" cy="246.0" r="2.9" fill="#9f918a" stroke="#3a3a3a" stroke-opacity="0.85" stroke-width="1"/><circle cx="540.5" cy="131.6" r="2.9" fill="#e9c125" stroke="#3a3a3a" stroke-opacity="0.85" stroke-width="1"/><circle cx="506.9" cy="198.7" r="2.9" fill="#9f918a" stroke="#3a3a3a" stroke-opacity="0.85" stroke-width="1"/><circle cx="401.0" cy="146.8" r="2.9" fill="#9f918a" stroke="#3a3a3a" stroke-opacity="0.85" stroke-width="1"/><circle cx="457.7" cy="123.8" r="2.9" fill="#8ea2d8" stroke="#3a3a3a" stroke-opacity="0.85" stroke-width="1"/><circle cx="413.0" cy="282.8" r="2.9" fill="#e9c125" stroke="#3a3a3a" stroke-opacity="0.85" stroke-width="1"/><circle cx="295.3" cy="165.8" r="2.9" fill="#e9c125" stroke="#3a3a3a" stroke-opacity="0.85" stroke-width="1"/><circle cx="298.0" cy="274.3" r="2.9" fill="#e9c125" stroke="#3a3a3a" stroke-opacity="0.85" stroke-width="1"/><circle cx="436.3" cy="204.7" r="2.9" fill="#eea37c" stroke="#3a3a3a" stroke-opacity="0.85" stroke-width="1"/><circle cx="214.8" cy="200.3" r="2.9" fill="#8ea2d8" stroke="#3a3a3a" stroke-opacity="0.85" stroke-width="1"/><circle cx="469.5" cy="129.2" r="2.9" fill="#e9c125" stroke="#3a3a3a" stroke-opacity="0.85" stroke-width="1"/><circle cx="568.9" cy="149.6" r="2.9" fill="#e9c125" stroke="#3a3a3a" stroke-opacity="0.85" stroke-width="1"/><circle cx="574.8" cy="59.0" r="2.9" fill="#e9c125" stroke="#3a3a3a" stroke-opacity="0.85" stroke-width="1"/><circle cx="591.8" cy="119.9" r="2.9" fill="#8ea2d8" stroke="#3a3a3a" stroke-opacity="0.85" stroke-width="1"/><circle cx="426.2" cy="230.5" r="2.9" fill="#e9c125" stroke="#3a3a3a" stroke-opacity="0.85" stroke-width="1"/><circle cx="417.4" cy="160.7" r="2.9" fill="#8ea2d8" stroke="#3a3a3a" stroke-opacity="0.85" stroke-width="1"/><circle cx="329.0" cy="147.6" r="2.9" fill="#e9c125" stroke="#3a3a3a" stroke-opacity="0.85" stroke-width="1"/><circle cx="491.3" cy="163.7" r="2.9" fill="#e9c125" stroke="#3a3a3a" stroke-opacity="0.85" stroke-width="1"/><circle cx="157.9" cy="198.7" r="2.9" fill="#e9c125" stroke="#3a3a3a" stroke-opacity="0.85" stroke-width="1"/><circle cx="577.2" cy="102.3" r="2.9" fill="#b59bd2" stroke="#3a3a3a" stroke-opacity="0.85" stroke-width="1"/><circle cx="540.5" cy="60.2" r="2.9" fill="#e9c125" stroke="#3a3a3a" stroke-opacity="0.85" stroke-width="1"/><circle cx="144.1" cy="275.5" r="2.9" fill="#8ea2d8" stroke="#3a3a3a" stroke-opacity="0.85" stroke-width="1"/><circle cx="351.9" cy="267.3" r="2.9" fill="#8ea2d8" stroke="#3a3a3a" stroke-opacity="0.85" stroke-width="1"/><circle cx="241.4" cy="227.3" r="2.9" fill="#e9c125" stroke="#3a3a3a" stroke-opacity="0.85" stroke-width="1"/><circle cx="490.0" cy="148.2" r="2.9" fill="#8ea2d8" stroke="#3a3a3a" stroke-opacity="0.85" stroke-width="1"/><circle cx="139.1" cy="253.6" r="2.9" fill="#8ea2d8" stroke="#3a3a3a" stroke-opacity="0.85" stroke-width="1"/><circle cx="500.7" cy="119.7" r="2.9" fill="#e9c125" stroke="#3a3a3a" stroke-opacity="0.85" stroke-width="1"/><circle cx="162.9" cy="260.3" r="2.9" fill="#8ea2d8" stroke="#3a3a3a" stroke-opacity="0.85" stroke-width="1"/><circle cx="235.1" cy="127.4" r="2.9" fill="#8ea2d8" stroke="#3a3a3a" stroke-opacity="0.85" stroke-width="1"/><circle cx="274.0" cy="258.0" r="2.9" fill="#e9c125" stroke="#3a3a3a" stroke-opacity="0.85" stroke-width="1"/><circle cx="409.9" cy="272.3" r="2.9" fill="#e9c125" stroke="#3a3a3a" stroke-opacity="0.85" stroke-width="1"/><circle cx="379.9" cy="226.5" r="2.9" fill="#8ea2d8" stroke="#3a3a3a" stroke-opacity="0.85" stroke-width="1"/><circle cx="472.8" cy="165.3" r="2.9" fill="#8ea2d8" stroke="#3a3a3a" stroke-opacity="0.85" stroke-width="1"/><circle cx="492.6" cy="148.0" r="2.9" fill="#8ea2d8" stroke="#3a3a3a" stroke-opacity="0.85" stroke-width="1"/><circle cx="405.1" cy="278.5" r="2.9" fill="#8ea2d8" stroke="#3a3a3a" stroke-opacity="0.85" stroke-width="1"/><circle cx="479.5" cy="240.3" r="2.9" fill="#e9c125" stroke="#3a3a3a" stroke-opacity="0.85" stroke-width="1"/><circle cx="212.0" cy="180.8" r="2.9" fill="#e9c125" stroke="#3a3a3a" stroke-opacity="0.85" stroke-width="1"/><circle cx="372.1" cy="252.5" r="2.9" fill="#e9c125" stroke="#3a3a3a" stroke-opacity="0.85" stroke-width="1"/><circle cx="218.9" cy="173.5" r="2.9" fill="#e9c125" stroke="#3a3a3a" stroke-opacity="0.85" stroke-width="1"/><circle cx="499.4" cy="109.1" r="2.9" fill="#8ea2d8" stroke="#3a3a3a" stroke-opacity="0.85" stroke-width="1"/><circle cx="435.3" cy="189.1" r="2.9" fill="#e9c125" stroke="#3a3a3a" stroke-opacity="0.85" stroke-width="1"/><circle cx="351.5" cy="258.2" r="2.9" fill="#e9c125" stroke="#3a3a3a" stroke-opacity="0.85" stroke-width="1"/><circle cx="268.0" cy="205.1" r="2.9" fill="#e9c125" stroke="#3a3a3a" stroke-opacity="0.85" stroke-width="1"/><circle cx="299.5" cy="277.7" r="2.9" fill="#e9c125" stroke="#3a3a3a" stroke-opacity="0.85" stroke-width="1"/><circle cx="196.4" cy="158.5" r="2.9" fill="#8ea2d8" stroke="#3a3a3a" stroke-opacity="0.85" stroke-width="1"/><circle cx="162.0" cy="188.0" r="2.9" fill="#b59bd2" stroke="#3a3a3a" stroke-opacity="0.85" stroke-width="1"/><circle cx="325.4" cy="216.4" r="2.9" fill="#8ea2d8" stroke="#3a3a3a" stroke-opacity="0.85" stroke-width="1"/><circle cx="515.4" cy="148.0" r="2.9" fill="#e9c125" stroke="#3a3a3a" stroke-opacity="0.85" stroke-width="1"/><circle cx="388.6" cy="246.1" r="2.9" fill="#e9c125" stroke="#3a3a3a" stroke-opacity="0.85" stroke-width="1"/><circle cx="457.0" cy="248.7" r="2.9" fill="#8ea2d8" stroke="#3a3a3a" stroke-opacity="0.85" stroke-width="1"/><circle cx="296.7" cy="206.5" r="2.9" fill="#8ea2d8" stroke="#3a3a3a" stroke-opacity="0.85" stroke-width="1"/><circle cx="289.9" cy="233.3" r="2.9" fill="#8ea2d8" stroke="#3a3a3a" stroke-opacity="0.85" stroke-width="1"/><circle cx="576.6" cy="154.3" r="2.9" fill="#8ea2d8" stroke="#3a3a3a" stroke-opacity="0.85" stroke-width="1"/><circle cx="445.4" cy="191.7" r="2.9" fill="#e9c125" stroke="#3a3a3a" stroke-opacity="0.85" stroke-width="1"/><circle cx="380.4" cy="236.0" r="2.9" fill="#e9c125" stroke="#3a3a3a" stroke-opacity="0.85" stroke-width="1"/></g></svg><div style="position:absolute;background:#fff;border:2px solid rgba(0,0,0,0.22);border-radius:4px;left:320px;top:146px;width:34px;height:63px"><div style="position:absolute;left:0;top:29px;width:30px;height:1px;background:#ccc"></div></div><svg class="a" style="left:329px;top:153px" width="16" height="16"><path d="M8 2 V14 M2 8 H14" stroke="#000" stroke-width="2.6"/></svg><svg class="a" style="left:329px;top:184px" width="16" height="16"><path d="M2.5 8 H13.5" stroke="#000" stroke-width="2.6"/></svg><div style="position:absolute;background:#fff;border:2px solid rgba(0,0,0,0.22);border-radius:4px;left:320px;top:220px;width:34px;height:32px"></div><svg class="a" style="left:328px;top:227px" width="18" height="18"><rect x="4" y="1" width="9" height="3" fill="#000"/><path d="M1 6 H17 V13 H13 V10 H5 V13 H1 Z" fill="#000"/><rect x="6" y="11" width="6" height="5" fill="none" stroke="#000" stroke-width="1.8"/></svg><div style="position:absolute;background:#fff;border:2px solid rgba(0,0,0,0.22);border-radius:4px;left:320px;top:264px;width:34px;height:33px"></div><svg class="a" style="left:327px;top:270px" width="20" height="20"><path d="M2 1 H9 L12 4 V7 H8 V13 H12 V18 H2 Z" fill="#000"/><path d="M8 9 H13 V6 L18 10.5 L13 15 V12 H8 Z" fill="#000"/></svg><div style="position:absolute;background:#fff;border:2px solid rgba(0,0,0,0.22);border-radius:4px;left:320px;top:308px;width:34px;height:33px"></div><svg class="a" style="left:326px;top:313px" width="22" height="22"><path d="M11 12 L20 16 L11 20 L2 16 Z" fill="#bbb"/><path d="M11 8 L20 12 L11 16 L2 12 Z" fill="#ccc" stroke="#eee" stroke-width="0.8"/><path d="M11 4 L20 8 L11 12 L2 8 Z" fill="#ddd" stroke="#f4f4f4" stroke-width="0.8"/></svg><svg class="a" style="left:310px;top:375px" width="110" height="60"><circle cx="56.3" cy="26.3" r="17.6" fill="#3b7a2c"/><path d="M56.3 11 L68 38 H44.6 Z" fill="#fff"/><path d="M56.3 19 V38 M52.5 27 L56.3 30 L60 27 M52 32 L56.3 35 L60.5 32" stroke="#3b7a2c" stroke-width="1.5" fill="none"/><text x="9" y="58" font-family="Liberation Sans" font-size="12" fill="#5d7b46" textLength="94" lengthAdjust="spacingAndGlyphs">FOREST<tspan fill="#aaa">2</tspan>MARKET</text></svg><div class="a" style="left:315px;top:443px;width:73px;height:16px;border:2px solid #777;border-top:none;background:rgba(255,255,255,0.5);font-size:11px;color:#333;padding-left:5px;line-height:14px">300 km</div><div class="a" style="left:315px;top:458px;width:79px;height:16px;border:2px solid #777;border-bottom:none;background:rgba(255,255,255,0.5);font-size:11px;color:#333;padding-left:5px;line-height:16px">200 mi</div><div class="a" style="left:930px;top:464px;width:136px;height:17px;background:rgba(255,255,255,0.7);font-size:11px;color:#333;line-height:17px;padding-left:4px;white-space:nowrap;border-bottom-right-radius:4px"><span style="color:#0078a8">Leaflet</span> | © <span style="color:#0078a8">OpenStreetMap</span></div><div class="a" style="left:886px;top:145px;width:170px;height:64px;background:#fff;border:1.5px solid #333;border-radius:5px;box-shadow:0 1px 4px rgba(0,0,0,.25)"><div class="a" style="left:7px;top:8px;font-size:23px;letter-spacing:0.4px;color:#777;white-space:nowrap;-webkit-text-stroke:0.3px #777">Area and Mills</div><div class="a" style="left:8px;top:40px;font-size:14px;color:#111;white-space:nowrap">Hover over a location</div></div><div class="a" style="left:894px;top:245px;width:162px;height:209px;background:#fff;border:1.5px solid #333;border-radius:5px;box-shadow:0 1px 4px rgba(0,0,0,.25)"></div><div class="a" style="left:904px;top:253px;width:18px;height:19px;background:#a9a9a9;border:1px solid #555"></div><div class="a" style="left:900px;top:254px;width:146px;text-align:right;font-size:14px;color:#111;white-space:nowrap">BioPower</div><div class="a" style="left:904px;top:278px;width:18px;height:19px;background:#a4b4e0;border:1px solid #555"></div><div class="a" style="left:900px;top:279px;width:146px;text-align:right;font-size:14px;color:#111;white-space:nowrap">Chipmill/Yard</div><div class="a" style="left:904px;top:303px;width:18px;height:19px;background:#f0b896;border:1px solid #555"></div><div class="a" style="left:900px;top:304px;width:146px;text-align:right;font-size:14px;color:#111;white-space:nowrap">Engineered Wood</div><div class="a" style="left:904px;top:328px;width:18px;height:19px;background:#a9b794;border:1px solid #555"></div><div class="a" style="left:900px;top:329px;width:146px;text-align:right;font-size:14px;color:#111;white-space:nowrap">Export - Port</div><div class="a" style="left:904px;top:353px;width:18px;height:19px;background:#f4a8cc;border:1px solid #555"></div><div class="a" style="left:900px;top:354px;width:146px;text-align:right;font-size:14px;color:#111;white-space:nowrap">Other</div><div class="a" style="left:904px;top:378px;width:18px;height:19px;background:#a99c94;border:1px solid #555"></div><div class="a" style="left:900px;top:379px;width:146px;text-align:right;font-size:14px;color:#111;white-space:nowrap">Pellet</div><div class="a" style="left:904px;top:403px;width:18px;height:19px;background:#bba3d6;border:1px solid #555"></div><div class="a" style="left:900px;top:404px;width:146px;text-align:right;font-size:14px;color:#111;white-space:nowrap">Pulp/Paper</div><div class="a" style="left:904px;top:428px;width:18px;height:19px;background:#f2d05a;border:1px solid #555"></div><div class="a" style="left:900px;top:429px;width:146px;text-align:right;font-size:14px;color:#111;white-space:nowrap">Solid Wood</div><svg class="a" style="left:0;top:0" width="1859" height="929" pointer-events="none"><text x="1468" y="175" text-anchor="middle" font-family="Liberation Sans" font-size="12" letter-spacing="0.7" fill="#555">(limited to the most recent ≈12 months)</text><path d="M 1816.5 166.5 H 1833.5 M 1816.5 172 H 1833.5 M 1816.5 177.5 H 1833.5" stroke="#666" stroke-width="3"/><path d="M 1156.5 193.5 H 1835.5" stroke="#e6e6e6" stroke-width="1"/><path d="M 1156.5 246.5 H 1835.5" stroke="#e6e6e6" stroke-width="1"/><path d="M 1156.5 297.5 H 1835.5" stroke="#e6e6e6" stroke-width="1"/><path d="M 1156.5 349.5 H 1835.5" stroke="#ccd6eb" stroke-width="1"/><path d="M 1162.8 349.5 V 359.5" stroke="#ccd6eb" stroke-width="1"/><text x="1166.8" y="365" text-anchor="end" transform="rotate(-45 1166.8 365)" font-family="Liberation Sans" font-size="12" letter-spacing="0.4" fill="#555">Sep 2020</text><path d="M 1222.4 349.5 V 359.5" stroke="#ccd6eb" stroke-width="1"/><text x="1226.4" y="365" text-anchor="end" transform="rotate(-45 1226.4 365)" font-family="Liberation Sans" font-size="12" letter-spacing="0.4" fill="#555">Oct 2020</text><path d="M 1284.5 349.5 V 359.5" stroke="#ccd6eb" stroke-width="1"/><text x="1288.5" y="365" text-anchor="end" transform="rotate(-45 1288.5 365)" font-family="Liberation Sans" font-size="12" letter-spacing="0.4" fill="#555">Nov 2020</text><path d="M 1344.5 349.5 V 359.5" stroke="#ccd6eb" stroke-width="1"/><text x="1348.5" y="365" text-anchor="end" transform="rotate(-45 1348.5 365)" font-family="Liberation Sans" font-size="12" letter-spacing="0.4" fill="#555">Dec 2020</text><path d="M 1406.3 349.5 V 359.5" stroke="#ccd6eb" stroke-width="1"/><text x="1410.3" y="365" text-anchor="end" transform="rotate(-45 1410.3 365)" font-family="Liberation Sans" font-size="12" letter-spacing="0.4" fill="#555">Jan 2021</text><path d="M 1467.8 349.5 V 359.5" stroke="#ccd6eb" stroke-width="1"/><text x="1471.8" y="365" text-anchor="end" transform="rotate(-45 1471.8 365)" font-family="Liberation Sans" font-size="12" letter-spacing="0.4" fill="#555">Feb 2021</text><path d="M 1523.4 349.5 V 359.5" stroke="#ccd6eb" stroke-width="1"/><text x="1527.4" y="365" text-anchor="end" transform="rotate(-45 1527.4 365)" font-family="Liberation Sans" font-size="12" letter-spacing="0.4" fill="#555">Mar 2021</text><path d="M 1585.4 349.5 V 359.5" stroke="#ccd6eb" stroke-width="1"/><text x="1589.4" y="365" text-anchor="end" transform="rotate(-45 1589.4 365)" font-family="Liberation Sans" font-size="12" letter-spacing="0.4" fill="#555">Apr 2021</text><path d="M 1645.4 349.5 V 359.5" stroke="#ccd6eb" stroke-width="1"/><text x="1649.4" y="365" text-anchor="end" transform="rotate(-45 1649.4 365)" font-family="Liberation Sans" font-size="12" letter-spacing="0.4" fill="#555">May 2021</text><path d="M 1706.7 349.5 V 359.5" stroke="#ccd6eb" stroke-width="1"/><text x="1710.7" y="365" text-anchor="end" transform="rotate(-45 1710.7 365)" font-family="Liberation Sans" font-size="12" letter-spacing="0.4" fill="#555">Jun 2021</text><path d="M 1767.4 349.5 V 359.5" stroke="#ccd6eb" stroke-width="1"/><text x="1771.4" y="365" text-anchor="end" transform="rotate(-45 1771.4 365)" font-family="Liberation Sans" font-size="12" letter-spacing="0.4" fill="#555">Jul 2021</text><path d="M 1828.7 349.5 V 359.5" stroke="#ccd6eb" stroke-width="1"/><text x="1832.7" y="365" text-anchor="end" transform="rotate(-45 1832.7 365)" font-family="Liberation Sans" font-size="12" letter-spacing="0.4" fill="#555">Aug 2021</text><text x="1116" y="271" text-anchor="middle" transform="rotate(-90 1116 271)" font-family="Liberation Sans" font-size="12" letter-spacing="0.25" fill="#666">US Dollars / GST</text><path d="M 1162.80 322.40 L 1222.40 321.10 L 1284.50 318.90 L 1344.50 317.00 L 1406.30 308.00 L 1467.80 299.90 L 1523.40 296.80 L 1585.40 303.70 L 1645.40 298.90 L 1706.70 294.70 L 1767.40 276.10 L 1828.70 273.70" stroke="#7c98d3" stroke-width="2" fill="none"/><path d="M 1162.80 319.60 L 1222.40 306.70 L 1284.50 314.90 L 1344.50 311.70 L 1406.30 302.00 L 1467.80 296.80 L 1523.40 277.50 L 1585.40 288.50 L 1645.40 283.40 L 1706.70 241.70 L 1767.40 243.70 L 1828.70 235.80" stroke="#e58f5c" stroke-width="2" fill="none"/><circle cx="1162.80" cy="322.40" r="4" fill="#7c98d3"/><circle cx="1222.40" cy="321.10" r="4" fill="#7c98d3"/><circle cx="1284.50" cy="318.90" r="4" fill="#7c98d3"/><circle cx="1344.50" cy="317.00" r="4" fill="#7c98d3"/><circle cx="1406.30" cy="308.00" r="4" fill="#7c98d3"/><circle cx="1467.80" cy="299.90" r="4" fill="#7c98d3"/><circle cx="1523.40" cy="296.80" r="4" fill="#7c98d3"/><circle cx="1585.40" cy="303.70" r="4" fill="#7c98d3"/><circle cx="1645.40" cy="298.90" r="4" fill="#7c98d3"/><circle cx="1706.70" cy="294.70" r="4" fill="#7c98d3"/><circle cx="1767.40" cy="276.10" r="4" fill="#7c98d3"/><circle cx="1828.70" cy="273.70" r="4" fill="#7c98d3"/><path d="M 1162.80 315.60 L 1166.80 319.60 L 1162.80 323.60 L 1158.80 319.60 Z" fill="#e58f5c"/><path d="M 1222.40 302.70 L 1226.40 306.70 L 1222.40 310.70 L 1218.40 306.70 Z" fill="#e58f5c"/><path d="M 1284.50 310.90 L 1288.50 314.90 L 1284.50 318.90 L 1280.50 314.90 Z" fill="#e58f5c"/><path d="M 1344.50 307.70 L 1348.50 311.70 L 1344.50 315.70 L 1340.50 311.70 Z" fill="#e58f5c"/><path d="M 1406.30 298.00 L 1410.30 302.00 L 1406.30 306.00 L 1402.30 302.00 Z" fill="#e58f5c"/><path d="M 1467.80 292.80 L 1471.80 296.80 L 1467.80 300.80 L 1463.80 296.80 Z" fill="#e58f5c"/><path d="M 1523.40 273.50 L 1527.40 277.50 L 1523.40 281.50 L 1519.40 277.50 Z" fill="#e58f5c"/><path d="M 1585.40 284.50 L 1589.40 288.50 L 1585.40 292.50 L 1581.40 288.50 Z" fill="#e58f5c"/><path d="M 1645.40 279.40 L 1649.40 283.40 L 1645.40 287.40 L 1641.40 283.40 Z" fill="#e58f5c"/><path d="M 1706.70 237.70 L 1710.70 241.70 L 1706.70 245.70 L 1702.70 241.70 Z" fill="#e58f5c"/><path d="M 1767.40 239.70 L 1771.40 243.70 L 1767.40 247.70 L 1763.40 243.70 Z" fill="#e58f5c"/><path d="M 1828.70 231.80 L 1832.70 235.80 L 1828.70 239.80 L 1824.70 235.80 Z" fill="#e58f5c"/><path d="M 1325 429.5 H 1341" stroke="#7c98d3" stroke-width="2"/><circle cx="1333.00" cy="429.50" r="4" fill="#7c98d3"/><text x="1346" y="434" font-family="Liberation Sans" font-weight="bold" font-size="13" letter-spacing="-0.3" fill="#333">Market Price at Mill PLF</text><path d="M 1505 429.5 H 1521" stroke="#e58f5c" stroke-width="2"/><path d="M 1513.00 425.50 L 1517.00 429.50 L 1513.00 433.50 L 1509.00 429.50 Z" fill="#e58f5c"/><text x="1527" y="434" font-family="Liberation Sans" font-weight="bold" font-size="13" fill="#333">Mill Price</text><text x="1736" y="460" font-family="Liberation Sans" font-weight="bold" font-size="13" fill="#3f5e2b" textLength="110" lengthAdjust="spacingAndGlyphs">FOREST<tspan fill="#999">2</tspan>MARKET</text></svg><svg class="a" style="left:0;top:0" width="1859" height="929" pointer-events="none"><text x="1078" y="559" text-anchor="middle" font-family="Liberation Sans" font-size="12" letter-spacing="0.6" fill="#555">Click and drag in the plot area to zoom in</text><path d="M 1816.5 550.5 H 1833.5 M 1816.5 556 H 1833.5 M 1816.5 561.5 H 1833.5" stroke="#666" stroke-width="3"/><path d="M 376.5 577.5 H 1835.5" stroke="#e6e6e6" stroke-width="1"/><path d="M 376.5 636.5 H 1835.5" stroke="#e6e6e6" stroke-width="1"/><path d="M 376.5 695.5 H 1835.5" stroke="#e6e6e6" stroke-width="1"/><path d="M 376.5 753.5 H 1835.5" stroke="#e6e6e6" stroke-width="1"/><path d="M 376.5 811.5 H 1835.5" stroke="#ccd6eb" stroke-width="1"/><path d="M 391.5 811.5 V 820.5" stroke="#ccd6eb" stroke-width="1"/><text x="395.0" y="827" text-anchor="end" transform="rotate(-45 395.0 827)" font-family="Liberation Sans" font-size="12" letter-spacing="0.4" fill="#555">Jul 2018</text><path d="M 508.5 811.5 V 820.5" stroke="#ccd6eb" stroke-width="1"/><text x="511.7" y="827" text-anchor="end" transform="rotate(-45 511.7 827)" font-family="Liberation Sans" font-size="12" letter-spacing="0.4" fill="#555">Oct 2018</text><path d="M 624.5 811.5 V 820.5" stroke="#ccd6eb" stroke-width="1"/><text x="628.4" y="827" text-anchor="end" transform="rotate(-45 628.4 827)" font-family="Liberation Sans" font-size="12" letter-spacing="0.4" fill="#555">Jan 2019</text><path d="M 739.5 811.5 V 820.5" stroke="#ccd6eb" stroke-width="1"/><text x="742.5" y="827" text-anchor="end" transform="rotate(-45 742.5 827)" font-family="Liberation Sans" font-size="12" letter-spacing="0.4" fill="#555">Apr 2019</text><path d="M 854.5 811.5 V 820.5" stroke="#ccd6eb" stroke-width="1"/><text x="857.9" y="827" text-anchor="end" transform="rotate(-45 857.9 827)" font-family="Liberation Sans" font-size="12" letter-spacing="0.4" fill="#555">Jul 2019</text><path d="M 971.5 811.5 V 820.5" stroke="#ccd6eb" stroke-width="1"/><text x="974.6" y="827" text-anchor="end" transform="rotate(-45 974.6 827)" font-family="Liberation Sans" font-size="12" letter-spacing="0.4" fill="#555">Oct 2019</text><path d="M 1087.5 811.5 V 820.5" stroke="#ccd6eb" stroke-width="1"/><text x="1091.3" y="827" text-anchor="end" transform="rotate(-45 1091.3 827)" font-family="Liberation Sans" font-size="12" letter-spacing="0.4" fill="#555">Jan 2020</text><path d="M 1203.5 811.5 V 820.5" stroke="#ccd6eb" stroke-width="1"/><text x="1206.7" y="827" text-anchor="end" transform="rotate(-45 1206.7 827)" font-family="Liberation Sans" font-size="12" letter-spacing="0.4" fill="#555">Apr 2020</text><path d="M 1318.5 811.5 V 820.5" stroke="#ccd6eb" stroke-width="1"/><text x="1322.2" y="827" text-anchor="end" transform="rotate(-45 1322.2 827)" font-family="Liberation Sans" font-size="12" letter-spacing="0.4" fill="#555">Jul 2020</text><path d="M 1435.5 811.5 V 820.5" stroke="#ccd6eb" stroke-width="1"/><text x="1438.8" y="827" text-anchor="end" transform="rotate(-45 1438.8 827)" font-family="Liberation Sans" font-size="12" letter-spacing="0.4" fill="#555">Oct 2020</text><path d="M 1552.5 811.5 V 820.5" stroke="#ccd6eb" stroke-width="1"/><text x="1555.5" y="827" text-anchor="end" transform="rotate(-45 1555.5 827)" font-family="Liberation Sans" font-size="12" letter-spacing="0.4" fill="#555">Jan 2021</text><path d="M 1666.5 811.5 V 820.5" stroke="#ccd6eb" stroke-width="1"/><text x="1669.7" y="827" text-anchor="end" transform="rotate(-45 1669.7 827)" font-family="Liberation Sans" font-size="12" letter-spacing="0.4" fill="#555">Apr 2021</text><path d="M 1781.5 811.5 V 820.5" stroke="#ccd6eb" stroke-width="1"/><text x="1785.1" y="827" text-anchor="end" transform="rotate(-45 1785.1 827)" font-family="Liberation Sans" font-size="12" letter-spacing="0.4" fill="#555">Jul 2021</text><text x="336" y="695" text-anchor="middle" transform="rotate(-90 336 695)" font-family="Liberation Sans" font-size="12" letter-spacing="0.25" fill="#666">US Dollars / GST</text><path d="M 391.00 787.60 C 391.00 787.60 414.59 786.14 430.32 785.50 C 446.05 784.86 453.91 784.40 469.64 784.40 C 484.86 784.40 492.47 785.50 507.69 785.50 C 523.41 785.50 531.28 778.01 547.01 773.40 C 562.23 768.93 569.84 767.97 585.06 762.80 C 600.78 757.45 608.65 747.10 624.37 747.10 C 640.10 747.10 647.97 747.55 663.69 750.30 C 677.90 752.79 685.00 757.20 699.21 760.20 C 714.93 763.52 722.80 763.80 738.52 766.10 C 753.75 768.32 761.36 769.85 776.58 771.50 C 792.30 773.21 800.17 772.98 815.89 774.50 C 831.11 775.98 838.72 777.19 853.94 779.00 C 869.67 780.87 877.54 782.06 893.26 783.70 C 908.99 785.34 916.85 787.20 932.58 787.20 C 947.80 787.20 955.41 785.90 970.63 785.90 C 986.36 785.90 994.22 788.50 1009.95 788.50 C 1025.17 788.50 1032.78 787.04 1048.00 786.10 C 1063.73 785.12 1071.59 783.70 1087.32 783.70 C 1103.05 783.70 1110.91 783.70 1126.64 783.70 C 1141.35 783.70 1148.71 784.82 1163.42 785.90 C 1179.15 787.06 1187.01 788.20 1202.74 789.30 C 1217.96 790.36 1225.57 790.20 1240.79 791.30 C 1256.51 792.44 1264.38 793.94 1280.11 794.90 C 1295.33 795.82 1302.94 795.45 1318.16 796.00 C 1333.88 796.57 1341.75 797.70 1357.47 797.70 C 1373.20 797.70 1381.07 797.09 1396.79 796.40 C 1412.01 795.73 1419.62 795.46 1434.84 794.30 C 1450.57 793.10 1458.43 792.45 1474.16 790.50 C 1489.38 788.61 1496.99 786.90 1512.21 784.70 C 1527.94 782.42 1535.80 781.66 1551.53 779.30 C 1567.26 776.94 1575.12 772.90 1590.85 772.90 C 1605.05 772.90 1612.16 773.15 1626.36 774.80 C 1642.09 776.63 1649.95 781.60 1665.68 781.60 C 1680.90 781.60 1688.51 781.10 1703.73 780.00 C 1719.46 778.86 1727.32 780.00 1743.05 776.00 C 1758.27 772.00 1765.88 764.15 1781.10 759.90 C 1796.83 755.51 1820.42 754.40 1820.42 754.40" stroke="#ee8fbf" stroke-width="2" fill="none"/><rect x="387.00" y="783.60" width="8" height="8" fill="#ee8fbf"/><rect x="426.32" y="781.50" width="8" height="8" fill="#ee8fbf"/><rect x="465.64" y="780.40" width="8" height="8" fill="#ee8fbf"/><rect x="503.69" y="781.50" width="8" height="8" fill="#ee8fbf"/><rect x="543.01" y="769.40" width="8" height="8" fill="#ee8fbf"/><rect x="581.06" y="758.80" width="8" height="8" fill="#ee8fbf"/><rect x="620.37" y="743.10" width="8" height="8" fill="#ee8fbf"/><rect x="659.69" y="746.30" width="8" height="8" fill="#ee8fbf"/><rect x="695.21" y="756.20" width="8" height="8" fill="#ee8fbf"/><rect x="734.52" y="762.10" width="8" height="8" fill="#ee8fbf"/><rect x="772.58" y="767.50" width="8" height="8" fill="#ee8fbf"/><rect x="811.89" y="770.50" width="8" height="8" fill="#ee8fbf"/><rect x="849.94" y="775.00" width="8" height="8" fill="#ee8fbf"/><rect x="889.26" y="779.70" width="8" height="8" fill="#ee8fbf"/><rect x="928.58" y="783.20" width="8" height="8" fill="#ee8fbf"/><rect x="966.63" y="781.90" width="8" height="8" fill="#ee8fbf"/><rect x="1005.95" y="784.50" width="8" height="8" fill="#ee8fbf"/><rect x="1044.00" y="782.10" width="8" height="8" fill="#ee8fbf"/><rect x="1083.32" y="779.70" width="8" height="8" fill="#ee8fbf"/><rect x="1122.64" y="779.70" width="8" height="8" fill="#ee8fbf"/><rect x="1159.42" y="781.90" width="8" height="8" fill="#ee8fbf"/><rect x="1198.74" y="785.30" width="8" height="8" fill="#ee8fbf"/><rect x="1236.79" y="787.30" width="8" height="8" fill="#ee8fbf"/><rect x="1276.11" y="790.90" width="8" height="8" fill="#ee8fbf"/><rect x="1314.16" y="792.00" width="8" height="8" fill="#ee8fbf"/><rect x="1353.47" y="793.70" width="8" height="8" fill="#ee8fbf"/><rect x="1392.79" y="792.40" width="8" height="8" fill="#ee8fbf"/><rect x="1430.84" y="790.30" width="8" height="8" fill="#ee8fbf"/><rect x="1470.16" y="786.50" width="8" height="8" fill="#ee8fbf"/><rect x="1508.21" y="780.70" width="8" height="8" fill="#ee8fbf"/><rect x="1547.53" y="775.30" width="8" height="8" fill="#ee8fbf"/><rect x="1586.85" y="768.90" width="8" height="8" fill="#ee8fbf"/><rect x="1622.36" y="770.80" width="8" height="8" fill="#ee8fbf"/><rect x="1661.68" y="777.60" width="8" height="8" fill="#ee8fbf"/><rect x="1699.73" y="776.00" width="8" height="8" fill="#ee8fbf"/><rect x="1739.05" y="772.00" width="8" height="8" fill="#ee8fbf"/><rect x="1777.10" y="755.90" width="8" height="8" fill="#ee8fbf"/><rect x="1816.42" y="750.40" width="8" height="8" fill="#ee8fbf"/><path d="M 391.00 720.80 C 391.00 720.80 414.59 722.30 430.32 722.30 C 446.05 722.30 453.91 718.28 469.64 716.90 C 484.86 715.56 492.47 716.33 507.69 715.50 C 523.41 714.65 531.28 713.10 547.01 712.70 C 562.23 712.30 569.84 712.30 585.06 712.30 C 600.78 712.30 608.65 713.40 624.37 713.40 C 640.10 713.40 647.97 709.50 663.69 709.50 C 677.90 709.50 685.00 713.80 699.21 713.80 C 714.93 713.80 722.80 713.20 738.52 713.20 C 753.75 713.20 761.36 713.80 776.58 713.80 C 792.30 713.80 800.17 712.10 815.89 712.10 C 831.11 712.10 838.72 718.40 853.94 718.80 C 869.67 719.20 877.54 718.80 893.26 719.20 C 908.99 719.60 916.85 721.80 932.58 721.80 C 947.80 721.80 955.41 718.10 970.63 718.10 C 986.36 718.10 994.22 721.10 1009.95 721.10 C 1025.17 721.10 1032.78 720.30 1048.00 720.30 C 1063.73 720.30 1071.59 723.10 1087.32 723.10 C 1103.05 723.10 1110.91 720.54 1126.64 717.50 C 1141.35 714.66 1148.71 708.40 1163.42 708.40 C 1179.15 708.40 1187.01 716.67 1202.74 719.60 C 1217.96 722.43 1225.57 722.80 1240.79 722.80 C 1256.51 722.80 1264.38 720.30 1280.11 720.30 C 1295.33 720.30 1302.94 723.50 1318.16 723.50 C 1333.88 723.50 1341.75 722.12 1357.47 721.30 C 1373.20 720.48 1381.07 721.30 1396.79 719.40 C 1412.01 717.50 1419.62 705.60 1434.84 705.60 C 1450.57 705.60 1458.43 715.00 1474.16 715.00 C 1489.38 715.00 1496.99 713.51 1512.21 710.60 C 1527.94 707.59 1535.80 703.52 1551.53 700.20 C 1567.26 696.88 1575.12 699.88 1590.85 694.00 C 1605.05 688.68 1612.16 672.20 1626.36 672.20 C 1642.09 672.20 1649.95 684.30 1665.68 684.30 C 1680.90 684.30 1688.51 684.30 1703.73 678.90 C 1719.46 673.50 1727.32 631.30 1743.05 631.30 C 1758.27 631.30 1765.88 634.30 1781.10 634.30 C 1796.83 634.30 1820.42 624.90 1820.42 624.90" stroke="#e58f5c" stroke-width="2" fill="none"/><path d="M 391.00 716.80 L 395.00 720.80 L 391.00 724.80 L 387.00 720.80 Z" fill="#e58f5c"/><path d="M 430.32 718.30 L 434.32 722.30 L 430.32 726.30 L 426.32 722.30 Z" fill="#e58f5c"/><path d="M 469.64 712.90 L 473.64 716.90 L 469.64 720.90 L 465.64 716.90 Z" fill="#e58f5c"/><path d="M 507.69 711.50 L 511.69 715.50 L 507.69 719.50 L 503.69 715.50 Z" fill="#e58f5c"/><path d="M 547.01 708.70 L 551.01 712.70 L 547.01 716.70 L 543.01 712.70 Z" fill="#e58f5c"/><path d="M 585.06 708.30 L 589.06 712.30 L 585.06 716.30 L 581.06 712.30 Z" fill="#e58f5c"/><path d="M 624.37 709.40 L 628.37 713.40 L 624.37 717.40 L 620.37 713.40 Z" fill="#e58f5c"/><path d="M 663.69 705.50 L 667.69 709.50 L 663.69 713.50 L 659.69 709.50 Z" fill="#e58f5c"/><path d="M 699.21 709.80 L 703.21 713.80 L 699.21 717.80 L 695.21 713.80 Z" fill="#e58f5c"/><path d="M 738.52 709.20 L 742.52 713.20 L 738.52 717.20 L 734.52 713.20 Z" fill="#e58f5c"/><path d="M 776.58 709.80 L 780.58 713.80 L 776.58 717.80 L 772.58 713.80 Z" fill="#e58f5c"/><path d="M 815.89 708.10 L 819.89 712.10 L 815.89 716.10 L 811.89 712.10 Z" fill="#e58f5c"/><path d="M 853.94 714.80 L 857.94 718.80 L 853.94 722.80 L 849.94 718.80 Z" fill="#e58f5c"/><path d="M 893.26 715.20 L 897.26 719.20 L 893.26 723.20 L 889.26 719.20 Z" fill="#e58f5c"/><path d="M 932.58 717.80 L 936.58 721.80 L 932.58 725.80 L 928.58 721.80 Z" fill="#e58f5c"/><path d="M 970.63 714.10 L 974.63 718.10 L 970.63 722.10 L 966.63 718.10 Z" fill="#e58f5c"/><path d="M 1009.95 717.10 L 1013.95 721.10 L 1009.95 725.10 L 1005.95 721.10 Z" fill="#e58f5c"/><path d="M 1048.00 716.30 L 1052.00 720.30 L 1048.00 724.30 L 1044.00 720.30 Z" fill="#e58f5c"/><path d="M 1087.32 719.10 L 1091.32 723.10 L 1087.32 727.10 L 1083.32 723.10 Z" fill="#e58f5c"/><path d="M 1126.64 713.50 L 1130.64 717.50 L 1126.64 721.50 L 1122.64 717.50 Z" fill="#e58f5c"/><path d="M 1163.42 704.40 L 1167.42 708.40 L 1163.42 712.40 L 1159.42 708.40 Z" fill="#e58f5c"/><path d="M 1202.74 715.60 L 1206.74 719.60 L 1202.74 723.60 L 1198.74 719.60 Z" fill="#e58f5c"/><path d="M 1240.79 718.80 L 1244.79 722.80 L 1240.79 726.80 L 1236.79 722.80 Z" fill="#e58f5c"/><path d="M 1280.11 716.30 L 1284.11 720.30 L 1280.11 724.30 L 1276.11 720.30 Z" fill="#e58f5c"/><path d="M 1318.16 719.50 L 1322.16 723.50 L 1318.16 727.50 L 1314.16 723.50 Z" fill="#e58f5c"/><path d="M 1357.47 717.30 L 1361.47 721.30 L 1357.47 725.30 L 1353.47 721.30 Z" fill="#e58f5c"/><path d="M 1396.79 715.40 L 1400.79 719.40 L 1396.79 723.40 L 1392.79 719.40 Z" fill="#e58f5c"/><path d="M 1434.84 701.60 L 1438.84 705.60 L 1434.84 709.60 L 1430.84 705.60 Z" fill="#e58f5c"/><path d="M 1474.16 711.00 L 1478.16 715.00 L 1474.16 719.00 L 1470.16 715.00 Z" fill="#e58f5c"/><path d="M 1512.21 706.60 L 1516.21 710.60 L 1512.21 714.60 L 1508.21 710.60 Z" fill="#e58f5c"/><path d="M 1551.53 696.20 L 1555.53 700.20 L 1551.53 704.20 L 1547.53 700.20 Z" fill="#e58f5c"/><path d="M 1590.85 690.00 L 1594.85 694.00 L 1590.85 698.00 L 1586.85 694.00 Z" fill="#e58f5c"/><path d="M 1626.36 668.20 L 1630.36 672.20 L 1626.36 676.20 L 1622.36 672.20 Z" fill="#e58f5c"/><path d="M 1665.68 680.30 L 1669.68 684.30 L 1665.68 688.30 L 1661.68 684.30 Z" fill="#e58f5c"/><path d="M 1703.73 674.90 L 1707.73 678.90 L 1703.73 682.90 L 1699.73 678.90 Z" fill="#e58f5c"/><path d="M 1743.05 627.30 L 1747.05 631.30 L 1743.05 635.30 L 1739.05 631.30 Z" fill="#e58f5c"/><path d="M 1781.10 630.30 L 1785.10 634.30 L 1781.10 638.30 L 1777.10 634.30 Z" fill="#e58f5c"/><path d="M 1820.42 620.90 L 1824.42 624.90 L 1820.42 628.90 L 1816.42 624.90 Z" fill="#e58f5c"/><path d="M 391.00 710.20 C 391.00 710.20 414.59 708.98 430.32 708.40 C 446.05 707.82 453.91 707.30 469.64 707.30 C 484.86 707.30 492.47 707.30 507.69 707.30 C 523.41 707.30 531.28 703.73 547.01 702.00 C 562.23 700.33 569.84 701.59 585.06 698.80 C 600.78 695.91 608.65 689.90 624.37 687.80 C 640.10 685.70 647.97 686.10 663.69 685.70 C 677.90 685.30 685.00 685.30 699.21 685.30 C 714.93 685.30 722.80 691.74 738.52 694.20 C 753.75 696.58 761.36 697.40 776.58 697.40 C 792.30 697.40 800.17 695.90 815.89 695.90 C 831.11 695.90 838.72 698.00 853.94 699.40 C 869.67 700.84 877.54 702.02 893.26 703.00 C 908.99 703.98 916.85 704.30 932.58 704.30 C 947.80 704.30 955.41 704.06 970.63 703.90 C 986.36 703.74 994.22 703.85 1009.95 703.50 C 1025.17 703.17 1032.78 702.89 1048.00 702.20 C 1063.73 701.49 1071.59 700.74 1087.32 700.00 C 1103.05 699.26 1110.91 698.50 1126.64 698.50 C 1141.35 698.50 1148.71 698.50 1163.42 699.20 C 1179.15 699.90 1187.01 704.10 1202.74 704.10 C 1217.96 704.10 1225.57 702.80 1240.79 702.40 C 1256.51 702.00 1264.38 702.00 1280.11 702.00 C 1295.33 702.00 1302.94 704.80 1318.16 704.80 C 1333.88 704.80 1341.75 703.48 1357.47 703.00 C 1373.20 702.52 1381.07 703.00 1396.79 702.40 C 1412.01 701.80 1419.62 699.50 1434.84 698.30 C 1450.57 697.06 1458.43 697.50 1474.16 696.30 C 1489.38 695.14 1496.99 695.04 1512.21 692.40 C 1527.94 689.68 1535.80 686.80 1551.53 682.90 C 1567.26 679.00 1575.12 676.39 1590.85 672.90 C 1605.05 669.75 1612.16 666.30 1626.36 666.30 C 1642.09 666.30 1649.95 675.30 1665.68 675.30 C 1680.90 675.30 1688.51 675.30 1703.73 675.30 C 1719.46 675.30 1727.32 673.66 1743.05 671.30 C 1758.27 669.02 1765.88 663.70 1781.10 663.70 C 1796.83 663.70 1820.42 667.70 1820.42 667.70" stroke="#7c98d3" stroke-width="2" fill="none"/><circle cx="391.00" cy="710.20" r="4" fill="#7c98d3"/><circle cx="430.32" cy="708.40" r="4" fill="#7c98d3"/><circle cx="469.64" cy="707.30" r="4" fill="#7c98d3"/><circle cx="507.69" cy="707.30" r="4" fill="#7c98d3"/><circle cx="547.01" cy="702.00" r="4" fill="#7c98d3"/><circle cx="585.06" cy="698.80" r="4" fill="#7c98d3"/><circle cx="624.37" cy="687.80" r="4" fill="#7c98d3"/><circle cx="663.69" cy="685.70" r="4" fill="#7c98d3"/><circle cx="699.21" cy="685.30" r="4" fill="#7c98d3"/><circle cx="738.52" cy="694.20" r="4" fill="#7c98d3"/><circle cx="776.58" cy="697.40" r="4" fill="#7c98d3"/><circle cx="815.89" cy="695.90" r="4" fill="#7c98d3"/><circle cx="853.94" cy="699.40" r="4" fill="#7c98d3"/><circle cx="893.26" cy="703.00" r="4" fill="#7c98d3"/><circle cx="932.58" cy="704.30" r="4" fill="#7c98d3"/><circle cx="970.63" cy="703.90" r="4" fill="#7c98d3"/><circle cx="1009.95" cy="703.50" r="4" fill="#7c98d3"/><circle cx="1048.00" cy="702.20" r="4" fill="#7c98d3"/><circle cx="1087.32" cy="700.00" r="4" fill="#7c98d3"/><circle cx="1126.64" cy="698.50" r="4" fill="#7c98d3"/><circle cx="1163.42" cy="699.20" r="4" fill="#7c98d3"/><circle cx="1202.74" cy="704.10" r="4" fill="#7c98d3"/><circle cx="1240.79" cy="702.40" r="4" fill="#7c98d3"/><circle cx="1280.11" cy="702.00" r="4" fill="#7c98d3"/><circle cx="1318.16" cy="704.80" r="4" fill="#7c98d3"/><circle cx="1357.47" cy="703.00" r="4" fill="#7c98d3"/><circle cx="1396.79" cy="702.40" r="4" fill="#7c98d3"/><circle cx="1434.84" cy="698.30" r="4" fill="#7c98d3"/><circle cx="1474.16" cy="696.30" r="4" fill="#7c98d3"/><circle cx="1512.21" cy="692.40" r="4" fill="#7c98d3"/><circle cx="1551.53" cy="682.90" r="4" fill="#7c98d3"/><circle cx="1590.85" cy="672.90" r="4" fill="#7c98d3"/><circle cx="1626.36" cy="666.30" r="4" fill="#7c98d3"/><circle cx="1665.68" cy="675.30" r="4" fill="#7c98d3"/><circle cx="1703.73" cy="675.30" r="4" fill="#7c98d3"/><circle cx="1743.05" cy="671.30" r="4" fill="#7c98d3"/><circle cx="1781.10" cy="663.70" r="4" fill="#7c98d3"/><circle cx="1820.42" cy="667.70" r="4" fill="#7c98d3"/><path d="M 833 889.5 H 849" stroke="#7c98d3" stroke-width="2"/><circle cx="841.00" cy="889.50" r="4" fill="#7c98d3"/><text x="854" y="894" font-family="Liberation Sans" font-weight="bold" font-size="12" letter-spacing="-0.25" fill="#333">MARKET LOG PRICE</text><path d="M 989 889.5 H 1005" stroke="#e58f5c" stroke-width="2"/><path d="M 997.00 885.50 L 1001.00 889.50 L 997.00 893.50 L 993.00 889.50 Z" fill="#e58f5c"/><text x="1018" y="894" font-family="Liberation Sans" font-weight="bold" font-size="13" fill="#333">Mill Log Price</text><path d="M 1144 889.5 H 1160" stroke="#ee8fbf" stroke-width="2"/><rect x="1148.00" y="885.50" width="8" height="8" fill="#ee8fbf"/><text x="1166" y="894" font-family="Liberation Sans" font-weight="bold" font-size="12" letter-spacing="-0.3" fill="#333">MARKET PULPWOOD PRICE</text><text x="1736" y="920" font-family="Liberation Sans" font-weight="bold" font-size="13" fill="#3f5e2b" textLength="110" lengthAdjust="spacingAndGlyphs">FOREST<tspan fill="#999">2</tspan>MARKET</text></svg></body></html>
